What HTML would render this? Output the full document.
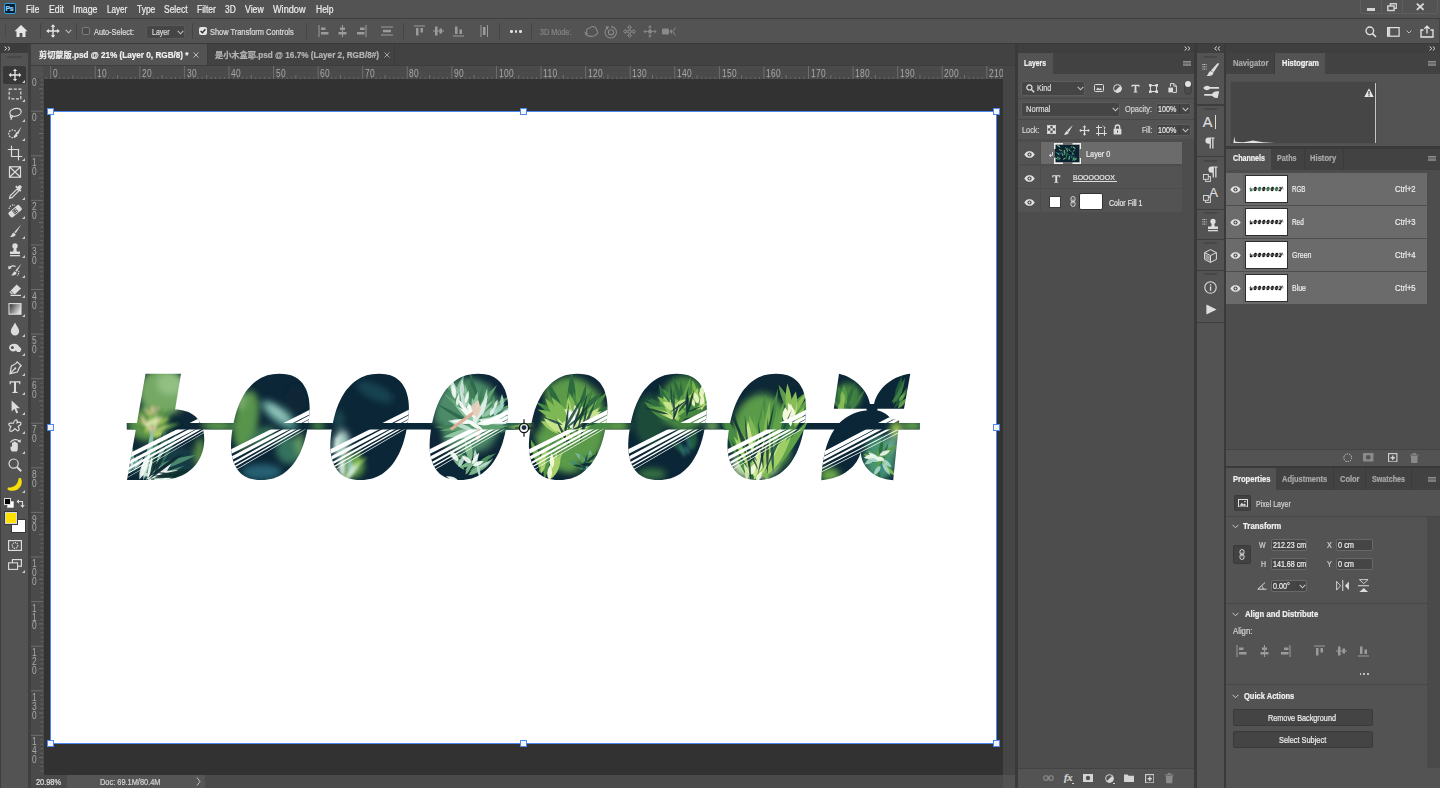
<!DOCTYPE html>
<html lang="en"><head><meta charset="utf-8"><title>Photoshop</title>
<style>
html,body{margin:0;padding:0;}
body{width:1440px;height:788px;overflow:hidden;background:#535353;position:relative;
font-family:"Liberation Sans","Noto Sans CJK SC",sans-serif;-webkit-font-smoothing:antialiased;}
#app{position:absolute;left:0;top:0;width:1440px;height:788px;overflow:hidden;}
#app div,#app svg{position:absolute;}
.t{white-space:nowrap;transform-origin:0 50%;-webkit-text-stroke:0.22px currentColor;}
</style></head>
<body><div id="app">
<div style="left:0px;top:0px;width:1440px;height:18px;background:#535353;"></div>
<div style="left:4px;top:3px;width:12px;height:11px;background:#0a1f2d;border:1px solid #2fa3e6;border-radius:2px;box-sizing:border-box;"></div>
<div class="t" style="left:5.5px;top:4.10px;height:9px;line-height:9px;font-size:7px;color:#8fd0ff;font-weight:700;letter-spacing:-0.3px;">Ps</div>
<div class="t" style="transform:scaleX(0.8248);left:26.2px;top:2.60px;height:14px;line-height:14px;font-size:10px;color:#ececec;">File</div>
<div class="t" style="transform:scaleX(0.8704);left:48.7px;top:2.60px;height:14px;line-height:14px;font-size:10px;color:#ececec;">Edit</div>
<div class="t" style="transform:scaleX(0.8814);left:72.5px;top:2.60px;height:14px;line-height:14px;font-size:10px;color:#ececec;">Image</div>
<div class="t" style="transform:scaleX(0.8115);left:106.7px;top:2.60px;height:14px;line-height:14px;font-size:10px;color:#ececec;">Layer</div>
<div class="t" style="transform:scaleX(0.8438);left:136.7px;top:2.60px;height:14px;line-height:14px;font-size:10px;color:#ececec;">Type</div>
<div class="t" style="transform:scaleX(0.8454);left:164px;top:2.60px;height:14px;line-height:14px;font-size:10px;color:#ececec;">Select</div>
<div class="t" style="transform:scaleX(0.8455);left:196.7px;top:2.60px;height:14px;line-height:14px;font-size:10px;color:#ececec;">Filter</div>
<div class="t" style="transform:scaleX(0.8361);left:225px;top:2.60px;height:14px;line-height:14px;font-size:10px;color:#ececec;">3D</div>
<div class="t" style="transform:scaleX(0.8698);left:245px;top:2.60px;height:14px;line-height:14px;font-size:10px;color:#ececec;">View</div>
<div class="t" style="transform:scaleX(0.9135);left:273px;top:2.60px;height:14px;line-height:14px;font-size:10px;color:#ececec;">Window</div>
<div class="t" style="transform:scaleX(0.8504);left:315.5px;top:2.60px;height:14px;line-height:14px;font-size:10px;color:#ececec;">Help</div>
<div style="left:1359.9px;top:0px;width:78.4px;height:14px;border:1px solid #5f5f5f;border-top:none;border-radius:0 0 3px 3px;box-sizing:border-box;"></div>
<div style="left:1381px;top:0px;width:1px;height:13px;background:#5f5f5f;"></div>
<div style="left:1402px;top:0px;width:1px;height:13px;background:#5f5f5f;"></div>
<div style="left:1367px;top:8.2px;width:8.2px;height:2.5px;background:#d4d4d4;"></div>
<svg style="left:1386.8px;top:3.2px;" width="10.4" height="8.4" viewBox="0 0 10.4 8.4"><path d="M3.4 2.8V0.8H9.6V5.2H7.4M0.8 2.9H7.1V7.6H0.8Z" fill="none" stroke="#d0d0d0" stroke-width="1.5"/></svg>
<svg style="left:1415.5px;top:3.2px;" width="8.4" height="7.4" viewBox="0 0 8.4 7.4"><path d="M0.8 0.6L7.6 6.8M7.6 0.6L0.8 6.8" stroke="#dcdcdc" stroke-width="1.7"/></svg>
<div style="left:0px;top:18px;width:1440px;height:1px;background:#3f3f3f;"></div>
<div style="left:0px;top:19px;width:1440px;height:24px;background:#535353;"></div>
<div style="left:0px;top:43px;width:1440px;height:1px;background:#3a3a3a;"></div>
<div style="left:1438.7px;top:19px;width:1.3px;height:24px;background:#444444;"></div>
<div style="left:5px;top:24px;width:1px;height:14px;background:#484848;"></div>
<svg style="left:14px;top:24px;" width="14" height="14" viewBox="0 0 14 14"><path d="M7 1L0.5 7.2H2.5V13H5.6V9H8.4V13H11.5V7.2H13.5Z" fill="#e6e6e6"/></svg>
<div style="left:40px;top:23px;width:1px;height:16px;background:#454545;"></div>
<svg style="left:46px;top:24px;" width="14" height="14" viewBox="0 0 14 14"><path d="M7 0.2L9.3 2.8H7.7V6.3H11.2V4.7L13.8 7L11.2 9.3V7.7H7.7V11.2H9.3L7 13.8L4.7 11.2H6.3V7.7H2.8V9.3L0.2 7L2.8 4.7V6.3H6.3V2.8H4.7Z" fill="#e6e6e6"/></svg>
<svg style="left:64.5px;top:28.5px;" width="7" height="5" viewBox="0 0 7 5"><path d="M0.7 0.8L3.5 3.8L6.3 0.8" fill="none" stroke="#bdbdbd" stroke-width="1.1"/></svg>
<div style="left:76px;top:23px;width:1px;height:16px;background:#454545;"></div>
<div style="left:82px;top:27px;width:8px;height:8px;background:#4a4a4a;border:1px solid #7a7a7a;border-radius:2px;box-sizing:border-box;"></div>
<div class="t" style="transform:scaleX(0.8637);left:93.6px;top:25.80px;height:12px;line-height:12px;font-size:8.5px;color:#dcdcdc;">Auto-Select:</div>
<div style="left:146px;top:25px;width:39px;height:14px;background:#454545;border:1px solid #5a5a5a;border-radius:2px;box-sizing:border-box;"></div>
<div class="t" style="transform:scaleX(0.8229);left:151.5px;top:26.40px;height:12px;line-height:12px;font-size:8.5px;color:#dcdcdc;">Layer</div>
<svg style="left:176.5px;top:30px;" width="7" height="5" viewBox="0 0 7 5"><path d="M0.7 0.8L3.5 3.8L6.3 0.8" fill="none" stroke="#bdbdbd" stroke-width="1.1"/></svg>
<div style="left:192px;top:23px;width:1px;height:16px;background:#454545;"></div>
<div style="left:199px;top:27px;width:8px;height:8px;background:#e4e4e4;border-radius:2px;"></div>
<svg style="left:199px;top:27px;" width="8" height="8" viewBox="0 0 8 8"><path d="M1.6 4L3.4 5.8L6.4 2.2" fill="none" stroke="#333" stroke-width="1.4"/></svg>
<div class="t" style="transform:scaleX(0.8727);left:210px;top:25.80px;height:12px;line-height:12px;font-size:8.5px;color:#dcdcdc;">Show Transform Controls</div>
<div style="left:306px;top:23px;width:1px;height:16px;background:#454545;"></div>
<svg style="left:317.5px;top:25px;" width="12" height="12" viewBox="0 0 12 12"><rect x="0.5" y="0" width="1" height="12" fill="#9b9b9b"/><rect x="3" y="2.5" width="4.5" height="2.5" fill="#9b9b9b"/><rect x="3" y="7" width="7.5" height="2.5" fill="#9b9b9b"/></svg>
<svg style="left:337px;top:25px;" width="12" height="12" viewBox="0 0 12 12"><rect x="5" y="0" width="1" height="12" fill="#9b9b9b"/><rect x="3" y="2.5" width="5" height="2.5" fill="#9b9b9b"/><rect x="1.5" y="7" width="8" height="2.5" fill="#9b9b9b"/></svg>
<svg style="left:356px;top:25px;" width="12" height="12" viewBox="0 0 12 12"><rect x="9.5" y="0" width="1" height="12" fill="#9b9b9b"/><rect x="4" y="2.5" width="4.5" height="2.5" fill="#9b9b9b"/><rect x="1" y="7" width="7.5" height="2.5" fill="#9b9b9b"/></svg>
<svg style="left:380.5px;top:25px;" width="12" height="12" viewBox="0 0 12 12"><rect x="0" y="1.5" width="12" height="1" fill="#9b9b9b"/><rect x="2" y="4.8" width="8" height="2.5" fill="#9b9b9b"/><rect x="0" y="9.5" width="12" height="1" fill="#9b9b9b"/></svg>
<div style="left:403px;top:23px;width:1px;height:16px;background:#454545;"></div>
<svg style="left:413.5px;top:25px;" width="12" height="12" viewBox="0 0 12 12"><rect x="0" y="0.5" width="11" height="1" fill="#9b9b9b"/><rect x="2" y="3" width="2.5" height="7.5" fill="#9b9b9b"/><rect x="6.5" y="3" width="2.5" height="4.5" fill="#9b9b9b"/></svg>
<svg style="left:433px;top:25px;" width="12" height="12" viewBox="0 0 12 12"><rect x="0" y="5.5" width="11" height="1" fill="#9b9b9b"/><rect x="2" y="1.5" width="2.5" height="9" fill="#9b9b9b"/><rect x="6.5" y="3.5" width="2.5" height="5" fill="#9b9b9b"/></svg>
<svg style="left:452.5px;top:25px;" width="12" height="12" viewBox="0 0 12 12"><rect x="0" y="10.5" width="11" height="1" fill="#9b9b9b"/><rect x="2" y="1.5" width="2.5" height="7.5" fill="#9b9b9b"/><rect x="6.5" y="4.5" width="2.5" height="4.5" fill="#9b9b9b"/></svg>
<svg style="left:479.5px;top:25px;" width="9" height="12" viewBox="0 0 9 12"><rect x="0.5" y="0" width="1" height="12" fill="#9b9b9b"/><rect x="3" y="2" width="2.5" height="8" fill="#9b9b9b"/><rect x="7" y="0" width="1" height="12" fill="#9b9b9b"/></svg>
<div style="left:499px;top:23px;width:1px;height:16px;background:#454545;"></div>
<div style="left:510.3px;top:30px;width:2.6px;height:2.6px;background:#e2e2e2;border-radius:50%;"></div>
<div style="left:514.7px;top:30px;width:2.6px;height:2.6px;background:#e2e2e2;border-radius:50%;"></div>
<div style="left:519.1px;top:30px;width:2.6px;height:2.6px;background:#e2e2e2;border-radius:50%;"></div>
<div style="left:531px;top:23px;width:1px;height:16px;background:#454545;"></div>
<div class="t" style="transform:scaleX(0.8519);left:539.6px;top:25.80px;height:12px;line-height:12px;font-size:8.5px;color:#858585;">3D Mode:</div>
<svg style="left:583.5px;top:24.5px;" width="15" height="13" viewBox="0 0 15 13"><path d="M3 7.5A3 3 0 0 1 6 3A3.6 3.6 0 0 1 12.5 5A2.6 2.6 0 0 1 11.5 9.8" fill="none" stroke="#8a8a8a" stroke-width="1.1"/><path d="M1.5 8.2C3 12 10 12.5 13 9" fill="none" stroke="#8a8a8a" stroke-width="1.1"/><path d="M0.5 6.5L1.3 9.8L4.3 8.6Z" fill="#8a8a8a"/></svg>
<svg style="left:603.5px;top:24.5px;" width="14" height="14" viewBox="0 0 14 14"><circle cx="7" cy="7.3" r="2.6" fill="none" stroke="#8a8a8a" stroke-width="1.1"/><path d="M3.2 2.8A5.7 5.7 0 1 0 7 1.6" fill="none" stroke="#8a8a8a" stroke-width="1.1"/><path d="M1.5 1.2L5.2 1.6L3.4 4.8Z" fill="#8a8a8a"/></svg>
<svg style="left:623px;top:24.5px;" width="13" height="13" viewBox="0 0 13 13"><path d="M6.5 0.3L8.5 2.6H7.1V5.9H10.4V4.5L12.7 6.5L10.4 8.5V7.1H7.1V10.4H8.5L6.5 12.7L4.5 10.4H5.9V7.1H2.6V8.5L0.3 6.5L2.6 4.5V5.9H5.9V2.6H4.5Z" fill="none" stroke="#8a8a8a" stroke-width="0.9"/></svg>
<svg style="left:642.5px;top:24.5px;" width="14" height="13" viewBox="0 0 14 13"><path d="M7 0.3L9 2.6H5Z M7 12.7L9 10.4H5Z M0.3 6.5L2.6 4.5V8.5Z M13.7 6.5L11.4 4.5V8.5Z" fill="#8a8a8a"/><rect x="5.3" y="4.8" width="3.4" height="3.4" fill="#8a8a8a"/><path d="M7 2.6V10.4M2.6 6.5H11.4" stroke="#8a8a8a" stroke-width="0.9"/></svg>
<svg style="left:661.5px;top:26.5px;" width="15" height="9" viewBox="0 0 15 9"><rect x="0" y="1.5" width="7" height="6" rx="1" fill="#8a8a8a"/><path d="M7.5 4.5L10 2V7Z" fill="#8a8a8a"/><path d="M13.5 0.5L10.8 4.5L13.5 8.5" fill="none" stroke="#8a8a8a" stroke-width="1"/></svg>
<svg style="left:1364.5px;top:26px;" width="12" height="12" viewBox="0 0 12 12"><circle cx="4.8" cy="4.8" r="3.8" fill="none" stroke="#e2e2e2" stroke-width="1.3"/><path d="M7.6 7.6L11 11" stroke="#e2e2e2" stroke-width="1.5"/></svg>
<svg style="left:1387px;top:27px;" width="13" height="10" viewBox="0 0 13 10"><rect x="0.6" y="0.6" width="11.5" height="8.6" fill="none" stroke="#e2e2e2" stroke-width="1.2"/><rect x="1" y="1" width="2.2" height="8" fill="#d0d0d0"/></svg>
<svg style="left:1406px;top:29.5px;" width="6" height="4" viewBox="0 0 6 4"><path d="M0.5 0.5L3 3L5.5 0.5" fill="none" stroke="#bdbdbd" stroke-width="1"/></svg>
<svg style="left:1420px;top:24.5px;" width="14" height="13" viewBox="0 0 14 13"><path d="M3.5 5H1V12H13V5H10.5" fill="none" stroke="#e6e6e6" stroke-width="1.3"/><path d="M7 8.5V1.5M4.4 3.8L7 1.2L9.6 3.8" fill="none" stroke="#e6e6e6" stroke-width="1.3"/></svg>
<div style="left:31px;top:44px;width:987px;height:21px;background:#424242;"></div>
<div style="left:31px;top:44px;width:176px;height:21px;background:#535353;"></div>
<div class="t" style="transform:scaleX(0.9604);left:38.5px;top:48.50px;height:12px;line-height:12px;font-size:8.5px;color:#f0f0f0;font-weight:700;">剪切蒙版.psd @ 21% (Layer 0, RGB/8) *</div>
<svg style="left:193px;top:51.5px;" width="6" height="6" viewBox="0 0 6 6"><path d="M0.5 0.5L5.5 5.5M5.5 0.5L0.5 5.5" stroke="#c8c8c8" stroke-width="0.9"/></svg>
<div style="left:207px;top:44px;width:1px;height:21px;background:#3c3c3c;"></div>
<div class="t" style="transform:scaleX(0.9629);left:215px;top:48.50px;height:12px;line-height:12px;font-size:8.5px;color:#b4b4b4;font-weight:700;">是小木盒耶.psd @ 16.7% (Layer 2, RGB/8#)</div>
<svg style="left:384px;top:51.5px;" width="6" height="6" viewBox="0 0 6 6"><path d="M0.5 0.5L5.5 5.5M5.5 0.5L0.5 5.5" stroke="#b0b0b0" stroke-width="0.9"/></svg>
<div style="left:394px;top:44px;width:1px;height:21px;background:#3c3c3c;"></div>
<div style="left:31px;top:65px;width:987px;height:1px;background:#3d3d3d;"></div>
<div style="left:31px;top:66px;width:972px;height:13px;background:#4a4a4a;"></div>
<div style="left:31px;top:79px;width:12.5px;height:696px;background:#4a4a4a;"></div>
<div style="left:31px;top:66px;width:12px;height:12px;background:#505050;"></div>
<div style="left:43.5px;top:79px;width:959.5px;height:696px;background:#323232;"></div>
<svg style="left:0px;top:0px;" width="1440" height="788" viewBox="0 0 1440 788"><rect x="45.69" y="77" width="1" height="2" fill="#666"/><rect x="50.15" y="66" width="1" height="13" fill="#6e6e6e"/><rect x="54.61" y="77" width="1" height="2" fill="#666"/><rect x="59.07" y="77" width="1" height="2" fill="#666"/><rect x="63.52" y="77" width="1" height="2" fill="#666"/><rect x="67.98" y="77" width="1" height="2" fill="#666"/><rect x="72.44" y="75" width="1" height="4" fill="#6e6e6e"/><rect x="76.90" y="77" width="1" height="2" fill="#666"/><rect x="81.36" y="77" width="1" height="2" fill="#666"/><rect x="85.81" y="77" width="1" height="2" fill="#666"/><rect x="90.27" y="77" width="1" height="2" fill="#666"/><rect x="94.73" y="66" width="1" height="13" fill="#6e6e6e"/><rect x="99.19" y="77" width="1" height="2" fill="#666"/><rect x="103.65" y="77" width="1" height="2" fill="#666"/><rect x="108.10" y="77" width="1" height="2" fill="#666"/><rect x="112.56" y="77" width="1" height="2" fill="#666"/><rect x="117.02" y="75" width="1" height="4" fill="#6e6e6e"/><rect x="121.48" y="77" width="1" height="2" fill="#666"/><rect x="125.94" y="77" width="1" height="2" fill="#666"/><rect x="130.39" y="77" width="1" height="2" fill="#666"/><rect x="134.85" y="77" width="1" height="2" fill="#666"/><rect x="139.31" y="66" width="1" height="13" fill="#6e6e6e"/><rect x="143.77" y="77" width="1" height="2" fill="#666"/><rect x="148.23" y="77" width="1" height="2" fill="#666"/><rect x="152.68" y="77" width="1" height="2" fill="#666"/><rect x="157.14" y="77" width="1" height="2" fill="#666"/><rect x="161.60" y="75" width="1" height="4" fill="#6e6e6e"/><rect x="166.06" y="77" width="1" height="2" fill="#666"/><rect x="170.52" y="77" width="1" height="2" fill="#666"/><rect x="174.97" y="77" width="1" height="2" fill="#666"/><rect x="179.43" y="77" width="1" height="2" fill="#666"/><rect x="183.89" y="66" width="1" height="13" fill="#6e6e6e"/><rect x="188.35" y="77" width="1" height="2" fill="#666"/><rect x="192.81" y="77" width="1" height="2" fill="#666"/><rect x="197.26" y="77" width="1" height="2" fill="#666"/><rect x="201.72" y="77" width="1" height="2" fill="#666"/><rect x="206.18" y="75" width="1" height="4" fill="#6e6e6e"/><rect x="210.64" y="77" width="1" height="2" fill="#666"/><rect x="215.10" y="77" width="1" height="2" fill="#666"/><rect x="219.55" y="77" width="1" height="2" fill="#666"/><rect x="224.01" y="77" width="1" height="2" fill="#666"/><rect x="228.47" y="66" width="1" height="13" fill="#6e6e6e"/><rect x="232.93" y="77" width="1" height="2" fill="#666"/><rect x="237.39" y="77" width="1" height="2" fill="#666"/><rect x="241.84" y="77" width="1" height="2" fill="#666"/><rect x="246.30" y="77" width="1" height="2" fill="#666"/><rect x="250.76" y="75" width="1" height="4" fill="#6e6e6e"/><rect x="255.22" y="77" width="1" height="2" fill="#666"/><rect x="259.68" y="77" width="1" height="2" fill="#666"/><rect x="264.13" y="77" width="1" height="2" fill="#666"/><rect x="268.59" y="77" width="1" height="2" fill="#666"/><rect x="273.05" y="66" width="1" height="13" fill="#6e6e6e"/><rect x="277.51" y="77" width="1" height="2" fill="#666"/><rect x="281.97" y="77" width="1" height="2" fill="#666"/><rect x="286.42" y="77" width="1" height="2" fill="#666"/><rect x="290.88" y="77" width="1" height="2" fill="#666"/><rect x="295.34" y="75" width="1" height="4" fill="#6e6e6e"/><rect x="299.80" y="77" width="1" height="2" fill="#666"/><rect x="304.26" y="77" width="1" height="2" fill="#666"/><rect x="308.71" y="77" width="1" height="2" fill="#666"/><rect x="313.17" y="77" width="1" height="2" fill="#666"/><rect x="317.63" y="66" width="1" height="13" fill="#6e6e6e"/><rect x="322.09" y="77" width="1" height="2" fill="#666"/><rect x="326.55" y="77" width="1" height="2" fill="#666"/><rect x="331.00" y="77" width="1" height="2" fill="#666"/><rect x="335.46" y="77" width="1" height="2" fill="#666"/><rect x="339.92" y="75" width="1" height="4" fill="#6e6e6e"/><rect x="344.38" y="77" width="1" height="2" fill="#666"/><rect x="348.84" y="77" width="1" height="2" fill="#666"/><rect x="353.29" y="77" width="1" height="2" fill="#666"/><rect x="357.75" y="77" width="1" height="2" fill="#666"/><rect x="362.21" y="66" width="1" height="13" fill="#6e6e6e"/><rect x="366.67" y="77" width="1" height="2" fill="#666"/><rect x="371.13" y="77" width="1" height="2" fill="#666"/><rect x="375.58" y="77" width="1" height="2" fill="#666"/><rect x="380.04" y="77" width="1" height="2" fill="#666"/><rect x="384.50" y="75" width="1" height="4" fill="#6e6e6e"/><rect x="388.96" y="77" width="1" height="2" fill="#666"/><rect x="393.42" y="77" width="1" height="2" fill="#666"/><rect x="397.87" y="77" width="1" height="2" fill="#666"/><rect x="402.33" y="77" width="1" height="2" fill="#666"/><rect x="406.79" y="66" width="1" height="13" fill="#6e6e6e"/><rect x="411.25" y="77" width="1" height="2" fill="#666"/><rect x="415.71" y="77" width="1" height="2" fill="#666"/><rect x="420.16" y="77" width="1" height="2" fill="#666"/><rect x="424.62" y="77" width="1" height="2" fill="#666"/><rect x="429.08" y="75" width="1" height="4" fill="#6e6e6e"/><rect x="433.54" y="77" width="1" height="2" fill="#666"/><rect x="438.00" y="77" width="1" height="2" fill="#666"/><rect x="442.45" y="77" width="1" height="2" fill="#666"/><rect x="446.91" y="77" width="1" height="2" fill="#666"/><rect x="451.37" y="66" width="1" height="13" fill="#6e6e6e"/><rect x="455.83" y="77" width="1" height="2" fill="#666"/><rect x="460.29" y="77" width="1" height="2" fill="#666"/><rect x="464.74" y="77" width="1" height="2" fill="#666"/><rect x="469.20" y="77" width="1" height="2" fill="#666"/><rect x="473.66" y="75" width="1" height="4" fill="#6e6e6e"/><rect x="478.12" y="77" width="1" height="2" fill="#666"/><rect x="482.58" y="77" width="1" height="2" fill="#666"/><rect x="487.03" y="77" width="1" height="2" fill="#666"/><rect x="491.49" y="77" width="1" height="2" fill="#666"/><rect x="495.95" y="66" width="1" height="13" fill="#6e6e6e"/><rect x="500.41" y="77" width="1" height="2" fill="#666"/><rect x="504.87" y="77" width="1" height="2" fill="#666"/><rect x="509.32" y="77" width="1" height="2" fill="#666"/><rect x="513.78" y="77" width="1" height="2" fill="#666"/><rect x="518.24" y="75" width="1" height="4" fill="#6e6e6e"/><rect x="522.70" y="77" width="1" height="2" fill="#666"/><rect x="527.16" y="77" width="1" height="2" fill="#666"/><rect x="531.61" y="77" width="1" height="2" fill="#666"/><rect x="536.07" y="77" width="1" height="2" fill="#666"/><rect x="540.53" y="66" width="1" height="13" fill="#6e6e6e"/><rect x="544.99" y="77" width="1" height="2" fill="#666"/><rect x="549.45" y="77" width="1" height="2" fill="#666"/><rect x="553.90" y="77" width="1" height="2" fill="#666"/><rect x="558.36" y="77" width="1" height="2" fill="#666"/><rect x="562.82" y="75" width="1" height="4" fill="#6e6e6e"/><rect x="567.28" y="77" width="1" height="2" fill="#666"/><rect x="571.74" y="77" width="1" height="2" fill="#666"/><rect x="576.19" y="77" width="1" height="2" fill="#666"/><rect x="580.65" y="77" width="1" height="2" fill="#666"/><rect x="585.11" y="66" width="1" height="13" fill="#6e6e6e"/><rect x="589.57" y="77" width="1" height="2" fill="#666"/><rect x="594.03" y="77" width="1" height="2" fill="#666"/><rect x="598.48" y="77" width="1" height="2" fill="#666"/><rect x="602.94" y="77" width="1" height="2" fill="#666"/><rect x="607.40" y="75" width="1" height="4" fill="#6e6e6e"/><rect x="611.86" y="77" width="1" height="2" fill="#666"/><rect x="616.32" y="77" width="1" height="2" fill="#666"/><rect x="620.77" y="77" width="1" height="2" fill="#666"/><rect x="625.23" y="77" width="1" height="2" fill="#666"/><rect x="629.69" y="66" width="1" height="13" fill="#6e6e6e"/><rect x="634.15" y="77" width="1" height="2" fill="#666"/><rect x="638.61" y="77" width="1" height="2" fill="#666"/><rect x="643.06" y="77" width="1" height="2" fill="#666"/><rect x="647.52" y="77" width="1" height="2" fill="#666"/><rect x="651.98" y="75" width="1" height="4" fill="#6e6e6e"/><rect x="656.44" y="77" width="1" height="2" fill="#666"/><rect x="660.90" y="77" width="1" height="2" fill="#666"/><rect x="665.35" y="77" width="1" height="2" fill="#666"/><rect x="669.81" y="77" width="1" height="2" fill="#666"/><rect x="674.27" y="66" width="1" height="13" fill="#6e6e6e"/><rect x="678.73" y="77" width="1" height="2" fill="#666"/><rect x="683.19" y="77" width="1" height="2" fill="#666"/><rect x="687.64" y="77" width="1" height="2" fill="#666"/><rect x="692.10" y="77" width="1" height="2" fill="#666"/><rect x="696.56" y="75" width="1" height="4" fill="#6e6e6e"/><rect x="701.02" y="77" width="1" height="2" fill="#666"/><rect x="705.48" y="77" width="1" height="2" fill="#666"/><rect x="709.93" y="77" width="1" height="2" fill="#666"/><rect x="714.39" y="77" width="1" height="2" fill="#666"/><rect x="718.85" y="66" width="1" height="13" fill="#6e6e6e"/><rect x="723.31" y="77" width="1" height="2" fill="#666"/><rect x="727.77" y="77" width="1" height="2" fill="#666"/><rect x="732.22" y="77" width="1" height="2" fill="#666"/><rect x="736.68" y="77" width="1" height="2" fill="#666"/><rect x="741.14" y="75" width="1" height="4" fill="#6e6e6e"/><rect x="745.60" y="77" width="1" height="2" fill="#666"/><rect x="750.06" y="77" width="1" height="2" fill="#666"/><rect x="754.51" y="77" width="1" height="2" fill="#666"/><rect x="758.97" y="77" width="1" height="2" fill="#666"/><rect x="763.43" y="66" width="1" height="13" fill="#6e6e6e"/><rect x="767.89" y="77" width="1" height="2" fill="#666"/><rect x="772.35" y="77" width="1" height="2" fill="#666"/><rect x="776.80" y="77" width="1" height="2" fill="#666"/><rect x="781.26" y="77" width="1" height="2" fill="#666"/><rect x="785.72" y="75" width="1" height="4" fill="#6e6e6e"/><rect x="790.18" y="77" width="1" height="2" fill="#666"/><rect x="794.64" y="77" width="1" height="2" fill="#666"/><rect x="799.09" y="77" width="1" height="2" fill="#666"/><rect x="803.55" y="77" width="1" height="2" fill="#666"/><rect x="808.01" y="66" width="1" height="13" fill="#6e6e6e"/><rect x="812.47" y="77" width="1" height="2" fill="#666"/><rect x="816.93" y="77" width="1" height="2" fill="#666"/><rect x="821.38" y="77" width="1" height="2" fill="#666"/><rect x="825.84" y="77" width="1" height="2" fill="#666"/><rect x="830.30" y="75" width="1" height="4" fill="#6e6e6e"/><rect x="834.76" y="77" width="1" height="2" fill="#666"/><rect x="839.22" y="77" width="1" height="2" fill="#666"/><rect x="843.67" y="77" width="1" height="2" fill="#666"/><rect x="848.13" y="77" width="1" height="2" fill="#666"/><rect x="852.59" y="66" width="1" height="13" fill="#6e6e6e"/><rect x="857.05" y="77" width="1" height="2" fill="#666"/><rect x="861.51" y="77" width="1" height="2" fill="#666"/><rect x="865.96" y="77" width="1" height="2" fill="#666"/><rect x="870.42" y="77" width="1" height="2" fill="#666"/><rect x="874.88" y="75" width="1" height="4" fill="#6e6e6e"/><rect x="879.34" y="77" width="1" height="2" fill="#666"/><rect x="883.80" y="77" width="1" height="2" fill="#666"/><rect x="888.25" y="77" width="1" height="2" fill="#666"/><rect x="892.71" y="77" width="1" height="2" fill="#666"/><rect x="897.17" y="66" width="1" height="13" fill="#6e6e6e"/><rect x="901.63" y="77" width="1" height="2" fill="#666"/><rect x="906.09" y="77" width="1" height="2" fill="#666"/><rect x="910.54" y="77" width="1" height="2" fill="#666"/><rect x="915.00" y="77" width="1" height="2" fill="#666"/><rect x="919.46" y="75" width="1" height="4" fill="#6e6e6e"/><rect x="923.92" y="77" width="1" height="2" fill="#666"/><rect x="928.38" y="77" width="1" height="2" fill="#666"/><rect x="932.83" y="77" width="1" height="2" fill="#666"/><rect x="937.29" y="77" width="1" height="2" fill="#666"/><rect x="941.75" y="66" width="1" height="13" fill="#6e6e6e"/><rect x="946.21" y="77" width="1" height="2" fill="#666"/><rect x="950.67" y="77" width="1" height="2" fill="#666"/><rect x="955.12" y="77" width="1" height="2" fill="#666"/><rect x="959.58" y="77" width="1" height="2" fill="#666"/><rect x="964.04" y="75" width="1" height="4" fill="#6e6e6e"/><rect x="968.50" y="77" width="1" height="2" fill="#666"/><rect x="972.96" y="77" width="1" height="2" fill="#666"/><rect x="977.41" y="77" width="1" height="2" fill="#666"/><rect x="981.87" y="77" width="1" height="2" fill="#666"/><rect x="986.33" y="66" width="1" height="13" fill="#6e6e6e"/><rect x="990.79" y="77" width="1" height="2" fill="#666"/><rect x="995.25" y="77" width="1" height="2" fill="#666"/><rect x="999.70" y="77" width="1" height="2" fill="#666"/><rect x="40.5" y="79.49" width="2.5" height="1" fill="#686868"/><rect x="40.5" y="83.95" width="2.5" height="1" fill="#686868"/><rect x="39" y="88.41" width="4" height="1" fill="#6e6e6e"/><rect x="40.5" y="92.87" width="2.5" height="1" fill="#686868"/><rect x="40.5" y="97.33" width="2.5" height="1" fill="#686868"/><rect x="40.5" y="101.78" width="2.5" height="1" fill="#686868"/><rect x="40.5" y="106.24" width="2.5" height="1" fill="#686868"/><rect x="31" y="110.70" width="12" height="1" fill="#6e6e6e"/><rect x="40.5" y="115.16" width="2.5" height="1" fill="#686868"/><rect x="40.5" y="119.62" width="2.5" height="1" fill="#686868"/><rect x="40.5" y="124.07" width="2.5" height="1" fill="#686868"/><rect x="40.5" y="128.53" width="2.5" height="1" fill="#686868"/><rect x="39" y="132.99" width="4" height="1" fill="#6e6e6e"/><rect x="40.5" y="137.45" width="2.5" height="1" fill="#686868"/><rect x="40.5" y="141.91" width="2.5" height="1" fill="#686868"/><rect x="40.5" y="146.36" width="2.5" height="1" fill="#686868"/><rect x="40.5" y="150.82" width="2.5" height="1" fill="#686868"/><rect x="31" y="155.28" width="12" height="1" fill="#6e6e6e"/><rect x="40.5" y="159.74" width="2.5" height="1" fill="#686868"/><rect x="40.5" y="164.20" width="2.5" height="1" fill="#686868"/><rect x="40.5" y="168.65" width="2.5" height="1" fill="#686868"/><rect x="40.5" y="173.11" width="2.5" height="1" fill="#686868"/><rect x="39" y="177.57" width="4" height="1" fill="#6e6e6e"/><rect x="40.5" y="182.03" width="2.5" height="1" fill="#686868"/><rect x="40.5" y="186.49" width="2.5" height="1" fill="#686868"/><rect x="40.5" y="190.94" width="2.5" height="1" fill="#686868"/><rect x="40.5" y="195.40" width="2.5" height="1" fill="#686868"/><rect x="31" y="199.86" width="12" height="1" fill="#6e6e6e"/><rect x="40.5" y="204.32" width="2.5" height="1" fill="#686868"/><rect x="40.5" y="208.78" width="2.5" height="1" fill="#686868"/><rect x="40.5" y="213.23" width="2.5" height="1" fill="#686868"/><rect x="40.5" y="217.69" width="2.5" height="1" fill="#686868"/><rect x="39" y="222.15" width="4" height="1" fill="#6e6e6e"/><rect x="40.5" y="226.61" width="2.5" height="1" fill="#686868"/><rect x="40.5" y="231.07" width="2.5" height="1" fill="#686868"/><rect x="40.5" y="235.52" width="2.5" height="1" fill="#686868"/><rect x="40.5" y="239.98" width="2.5" height="1" fill="#686868"/><rect x="31" y="244.44" width="12" height="1" fill="#6e6e6e"/><rect x="40.5" y="248.90" width="2.5" height="1" fill="#686868"/><rect x="40.5" y="253.36" width="2.5" height="1" fill="#686868"/><rect x="40.5" y="257.81" width="2.5" height="1" fill="#686868"/><rect x="40.5" y="262.27" width="2.5" height="1" fill="#686868"/><rect x="39" y="266.73" width="4" height="1" fill="#6e6e6e"/><rect x="40.5" y="271.19" width="2.5" height="1" fill="#686868"/><rect x="40.5" y="275.65" width="2.5" height="1" fill="#686868"/><rect x="40.5" y="280.10" width="2.5" height="1" fill="#686868"/><rect x="40.5" y="284.56" width="2.5" height="1" fill="#686868"/><rect x="31" y="289.02" width="12" height="1" fill="#6e6e6e"/><rect x="40.5" y="293.48" width="2.5" height="1" fill="#686868"/><rect x="40.5" y="297.94" width="2.5" height="1" fill="#686868"/><rect x="40.5" y="302.39" width="2.5" height="1" fill="#686868"/><rect x="40.5" y="306.85" width="2.5" height="1" fill="#686868"/><rect x="39" y="311.31" width="4" height="1" fill="#6e6e6e"/><rect x="40.5" y="315.77" width="2.5" height="1" fill="#686868"/><rect x="40.5" y="320.23" width="2.5" height="1" fill="#686868"/><rect x="40.5" y="324.68" width="2.5" height="1" fill="#686868"/><rect x="40.5" y="329.14" width="2.5" height="1" fill="#686868"/><rect x="31" y="333.60" width="12" height="1" fill="#6e6e6e"/><rect x="40.5" y="338.06" width="2.5" height="1" fill="#686868"/><rect x="40.5" y="342.52" width="2.5" height="1" fill="#686868"/><rect x="40.5" y="346.97" width="2.5" height="1" fill="#686868"/><rect x="40.5" y="351.43" width="2.5" height="1" fill="#686868"/><rect x="39" y="355.89" width="4" height="1" fill="#6e6e6e"/><rect x="40.5" y="360.35" width="2.5" height="1" fill="#686868"/><rect x="40.5" y="364.81" width="2.5" height="1" fill="#686868"/><rect x="40.5" y="369.26" width="2.5" height="1" fill="#686868"/><rect x="40.5" y="373.72" width="2.5" height="1" fill="#686868"/><rect x="31" y="378.18" width="12" height="1" fill="#6e6e6e"/><rect x="40.5" y="382.64" width="2.5" height="1" fill="#686868"/><rect x="40.5" y="387.10" width="2.5" height="1" fill="#686868"/><rect x="40.5" y="391.55" width="2.5" height="1" fill="#686868"/><rect x="40.5" y="396.01" width="2.5" height="1" fill="#686868"/><rect x="39" y="400.47" width="4" height="1" fill="#6e6e6e"/><rect x="40.5" y="404.93" width="2.5" height="1" fill="#686868"/><rect x="40.5" y="409.39" width="2.5" height="1" fill="#686868"/><rect x="40.5" y="413.84" width="2.5" height="1" fill="#686868"/><rect x="40.5" y="418.30" width="2.5" height="1" fill="#686868"/><rect x="31" y="422.76" width="12" height="1" fill="#6e6e6e"/><rect x="40.5" y="427.22" width="2.5" height="1" fill="#686868"/><rect x="40.5" y="431.68" width="2.5" height="1" fill="#686868"/><rect x="40.5" y="436.13" width="2.5" height="1" fill="#686868"/><rect x="40.5" y="440.59" width="2.5" height="1" fill="#686868"/><rect x="39" y="445.05" width="4" height="1" fill="#6e6e6e"/><rect x="40.5" y="449.51" width="2.5" height="1" fill="#686868"/><rect x="40.5" y="453.97" width="2.5" height="1" fill="#686868"/><rect x="40.5" y="458.42" width="2.5" height="1" fill="#686868"/><rect x="40.5" y="462.88" width="2.5" height="1" fill="#686868"/><rect x="31" y="467.34" width="12" height="1" fill="#6e6e6e"/><rect x="40.5" y="471.80" width="2.5" height="1" fill="#686868"/><rect x="40.5" y="476.26" width="2.5" height="1" fill="#686868"/><rect x="40.5" y="480.71" width="2.5" height="1" fill="#686868"/><rect x="40.5" y="485.17" width="2.5" height="1" fill="#686868"/><rect x="39" y="489.63" width="4" height="1" fill="#6e6e6e"/><rect x="40.5" y="494.09" width="2.5" height="1" fill="#686868"/><rect x="40.5" y="498.55" width="2.5" height="1" fill="#686868"/><rect x="40.5" y="503.00" width="2.5" height="1" fill="#686868"/><rect x="40.5" y="507.46" width="2.5" height="1" fill="#686868"/><rect x="31" y="511.92" width="12" height="1" fill="#6e6e6e"/><rect x="40.5" y="516.38" width="2.5" height="1" fill="#686868"/><rect x="40.5" y="520.84" width="2.5" height="1" fill="#686868"/><rect x="40.5" y="525.29" width="2.5" height="1" fill="#686868"/><rect x="40.5" y="529.75" width="2.5" height="1" fill="#686868"/><rect x="39" y="534.21" width="4" height="1" fill="#6e6e6e"/><rect x="40.5" y="538.67" width="2.5" height="1" fill="#686868"/><rect x="40.5" y="543.13" width="2.5" height="1" fill="#686868"/><rect x="40.5" y="547.58" width="2.5" height="1" fill="#686868"/><rect x="40.5" y="552.04" width="2.5" height="1" fill="#686868"/><rect x="31" y="556.50" width="12" height="1" fill="#6e6e6e"/><rect x="40.5" y="560.96" width="2.5" height="1" fill="#686868"/><rect x="40.5" y="565.42" width="2.5" height="1" fill="#686868"/><rect x="40.5" y="569.87" width="2.5" height="1" fill="#686868"/><rect x="40.5" y="574.33" width="2.5" height="1" fill="#686868"/><rect x="39" y="578.79" width="4" height="1" fill="#6e6e6e"/><rect x="40.5" y="583.25" width="2.5" height="1" fill="#686868"/><rect x="40.5" y="587.71" width="2.5" height="1" fill="#686868"/><rect x="40.5" y="592.16" width="2.5" height="1" fill="#686868"/><rect x="40.5" y="596.62" width="2.5" height="1" fill="#686868"/><rect x="31" y="601.08" width="12" height="1" fill="#6e6e6e"/><rect x="40.5" y="605.54" width="2.5" height="1" fill="#686868"/><rect x="40.5" y="610.00" width="2.5" height="1" fill="#686868"/><rect x="40.5" y="614.45" width="2.5" height="1" fill="#686868"/><rect x="40.5" y="618.91" width="2.5" height="1" fill="#686868"/><rect x="39" y="623.37" width="4" height="1" fill="#6e6e6e"/><rect x="40.5" y="627.83" width="2.5" height="1" fill="#686868"/><rect x="40.5" y="632.29" width="2.5" height="1" fill="#686868"/><rect x="40.5" y="636.74" width="2.5" height="1" fill="#686868"/><rect x="40.5" y="641.20" width="2.5" height="1" fill="#686868"/><rect x="31" y="645.66" width="12" height="1" fill="#6e6e6e"/><rect x="40.5" y="650.12" width="2.5" height="1" fill="#686868"/><rect x="40.5" y="654.58" width="2.5" height="1" fill="#686868"/><rect x="40.5" y="659.03" width="2.5" height="1" fill="#686868"/><rect x="40.5" y="663.49" width="2.5" height="1" fill="#686868"/><rect x="39" y="667.95" width="4" height="1" fill="#6e6e6e"/><rect x="40.5" y="672.41" width="2.5" height="1" fill="#686868"/><rect x="40.5" y="676.87" width="2.5" height="1" fill="#686868"/><rect x="40.5" y="681.32" width="2.5" height="1" fill="#686868"/><rect x="40.5" y="685.78" width="2.5" height="1" fill="#686868"/><rect x="31" y="690.24" width="12" height="1" fill="#6e6e6e"/><rect x="40.5" y="694.70" width="2.5" height="1" fill="#686868"/><rect x="40.5" y="699.16" width="2.5" height="1" fill="#686868"/><rect x="40.5" y="703.61" width="2.5" height="1" fill="#686868"/><rect x="40.5" y="708.07" width="2.5" height="1" fill="#686868"/><rect x="39" y="712.53" width="4" height="1" fill="#6e6e6e"/><rect x="40.5" y="716.99" width="2.5" height="1" fill="#686868"/><rect x="40.5" y="721.45" width="2.5" height="1" fill="#686868"/><rect x="40.5" y="725.90" width="2.5" height="1" fill="#686868"/><rect x="40.5" y="730.36" width="2.5" height="1" fill="#686868"/><rect x="31" y="734.82" width="12" height="1" fill="#6e6e6e"/><rect x="40.5" y="739.28" width="2.5" height="1" fill="#686868"/><rect x="40.5" y="743.74" width="2.5" height="1" fill="#686868"/><rect x="40.5" y="748.19" width="2.5" height="1" fill="#686868"/><rect x="40.5" y="752.65" width="2.5" height="1" fill="#686868"/><rect x="39" y="757.11" width="4" height="1" fill="#6e6e6e"/><rect x="40.5" y="761.57" width="2.5" height="1" fill="#686868"/><rect x="40.5" y="766.03" width="2.5" height="1" fill="#686868"/><rect x="40.5" y="770.48" width="2.5" height="1" fill="#686868"/></svg>
<div class="t" style="left:52.85px;top:67.90px;height:11px;line-height:11px;font-size:10px;color:#a9a9a9;transform:scaleX(0.84);letter-spacing:0.4px;-webkit-text-stroke:0;">0</div>
<div class="t" style="left:97.42999999999999px;top:67.90px;height:11px;line-height:11px;font-size:10px;color:#a9a9a9;transform:scaleX(0.84);letter-spacing:0.4px;-webkit-text-stroke:0;">10</div>
<div class="t" style="left:142.01px;top:67.90px;height:11px;line-height:11px;font-size:10px;color:#a9a9a9;transform:scaleX(0.84);letter-spacing:0.4px;-webkit-text-stroke:0;">20</div>
<div class="t" style="left:186.59px;top:67.90px;height:11px;line-height:11px;font-size:10px;color:#a9a9a9;transform:scaleX(0.84);letter-spacing:0.4px;-webkit-text-stroke:0;">30</div>
<div class="t" style="left:231.17px;top:67.90px;height:11px;line-height:11px;font-size:10px;color:#a9a9a9;transform:scaleX(0.84);letter-spacing:0.4px;-webkit-text-stroke:0;">40</div>
<div class="t" style="left:275.75px;top:67.90px;height:11px;line-height:11px;font-size:10px;color:#a9a9a9;transform:scaleX(0.84);letter-spacing:0.4px;-webkit-text-stroke:0;">50</div>
<div class="t" style="left:320.33px;top:67.90px;height:11px;line-height:11px;font-size:10px;color:#a9a9a9;transform:scaleX(0.84);letter-spacing:0.4px;-webkit-text-stroke:0;">60</div>
<div class="t" style="left:364.90999999999997px;top:67.90px;height:11px;line-height:11px;font-size:10px;color:#a9a9a9;transform:scaleX(0.84);letter-spacing:0.4px;-webkit-text-stroke:0;">70</div>
<div class="t" style="left:409.48999999999995px;top:67.90px;height:11px;line-height:11px;font-size:10px;color:#a9a9a9;transform:scaleX(0.84);letter-spacing:0.4px;-webkit-text-stroke:0;">80</div>
<div class="t" style="left:454.07px;top:67.90px;height:11px;line-height:11px;font-size:10px;color:#a9a9a9;transform:scaleX(0.84);letter-spacing:0.4px;-webkit-text-stroke:0;">90</div>
<div class="t" style="left:498.65px;top:67.90px;height:11px;line-height:11px;font-size:10px;color:#a9a9a9;transform:scaleX(0.84);letter-spacing:0.4px;-webkit-text-stroke:0;">100</div>
<div class="t" style="left:543.23px;top:67.90px;height:11px;line-height:11px;font-size:10px;color:#a9a9a9;transform:scaleX(0.84);letter-spacing:0.4px;-webkit-text-stroke:0;">110</div>
<div class="t" style="left:587.8100000000001px;top:67.90px;height:11px;line-height:11px;font-size:10px;color:#a9a9a9;transform:scaleX(0.84);letter-spacing:0.4px;-webkit-text-stroke:0;">120</div>
<div class="t" style="left:632.3900000000001px;top:67.90px;height:11px;line-height:11px;font-size:10px;color:#a9a9a9;transform:scaleX(0.84);letter-spacing:0.4px;-webkit-text-stroke:0;">130</div>
<div class="t" style="left:676.97px;top:67.90px;height:11px;line-height:11px;font-size:10px;color:#a9a9a9;transform:scaleX(0.84);letter-spacing:0.4px;-webkit-text-stroke:0;">140</div>
<div class="t" style="left:721.5500000000001px;top:67.90px;height:11px;line-height:11px;font-size:10px;color:#a9a9a9;transform:scaleX(0.84);letter-spacing:0.4px;-webkit-text-stroke:0;">150</div>
<div class="t" style="left:766.13px;top:67.90px;height:11px;line-height:11px;font-size:10px;color:#a9a9a9;transform:scaleX(0.84);letter-spacing:0.4px;-webkit-text-stroke:0;">160</div>
<div class="t" style="left:810.71px;top:67.90px;height:11px;line-height:11px;font-size:10px;color:#a9a9a9;transform:scaleX(0.84);letter-spacing:0.4px;-webkit-text-stroke:0;">170</div>
<div class="t" style="left:855.2900000000001px;top:67.90px;height:11px;line-height:11px;font-size:10px;color:#a9a9a9;transform:scaleX(0.84);letter-spacing:0.4px;-webkit-text-stroke:0;">180</div>
<div class="t" style="left:899.87px;top:67.90px;height:11px;line-height:11px;font-size:10px;color:#a9a9a9;transform:scaleX(0.84);letter-spacing:0.4px;-webkit-text-stroke:0;">190</div>
<div class="t" style="left:944.45px;top:67.90px;height:11px;line-height:11px;font-size:10px;color:#a9a9a9;transform:scaleX(0.84);letter-spacing:0.4px;-webkit-text-stroke:0;">200</div>
<div class="t" style="left:989.0300000000001px;top:67.90px;height:11px;line-height:11px;font-size:10px;color:#a9a9a9;transform:scaleX(0.84);letter-spacing:0.4px;-webkit-text-stroke:0;">210</div>
<div class="t" style="left:32px;top:76.50px;height:11px;line-height:11px;font-size:10px;color:#a9a9a9;transform:scaleX(0.84);-webkit-text-stroke:0;">0</div>
<div class="t" style="left:32px;top:112.30px;height:11px;line-height:11px;font-size:10px;color:#a9a9a9;transform:scaleX(0.84);-webkit-text-stroke:0;">0</div>
<div class="t" style="left:32px;top:156.88px;height:11px;line-height:11px;font-size:10px;color:#a9a9a9;transform:scaleX(0.84);-webkit-text-stroke:0;">1</div>
<div class="t" style="left:32px;top:165.78px;height:11px;line-height:11px;font-size:10px;color:#a9a9a9;transform:scaleX(0.84);-webkit-text-stroke:0;">0</div>
<div class="t" style="left:32px;top:201.46px;height:11px;line-height:11px;font-size:10px;color:#a9a9a9;transform:scaleX(0.84);-webkit-text-stroke:0;">2</div>
<div class="t" style="left:32px;top:210.36px;height:11px;line-height:11px;font-size:10px;color:#a9a9a9;transform:scaleX(0.84);-webkit-text-stroke:0;">0</div>
<div class="t" style="left:32px;top:246.04px;height:11px;line-height:11px;font-size:10px;color:#a9a9a9;transform:scaleX(0.84);-webkit-text-stroke:0;">3</div>
<div class="t" style="left:32px;top:254.94px;height:11px;line-height:11px;font-size:10px;color:#a9a9a9;transform:scaleX(0.84);-webkit-text-stroke:0;">0</div>
<div class="t" style="left:32px;top:290.62px;height:11px;line-height:11px;font-size:10px;color:#a9a9a9;transform:scaleX(0.84);-webkit-text-stroke:0;">4</div>
<div class="t" style="left:32px;top:299.52px;height:11px;line-height:11px;font-size:10px;color:#a9a9a9;transform:scaleX(0.84);-webkit-text-stroke:0;">0</div>
<div class="t" style="left:32px;top:335.20px;height:11px;line-height:11px;font-size:10px;color:#a9a9a9;transform:scaleX(0.84);-webkit-text-stroke:0;">5</div>
<div class="t" style="left:32px;top:344.10px;height:11px;line-height:11px;font-size:10px;color:#a9a9a9;transform:scaleX(0.84);-webkit-text-stroke:0;">0</div>
<div class="t" style="left:32px;top:379.78px;height:11px;line-height:11px;font-size:10px;color:#a9a9a9;transform:scaleX(0.84);-webkit-text-stroke:0;">6</div>
<div class="t" style="left:32px;top:388.68px;height:11px;line-height:11px;font-size:10px;color:#a9a9a9;transform:scaleX(0.84);-webkit-text-stroke:0;">0</div>
<div class="t" style="left:32px;top:424.36px;height:11px;line-height:11px;font-size:10px;color:#a9a9a9;transform:scaleX(0.84);-webkit-text-stroke:0;">7</div>
<div class="t" style="left:32px;top:433.26px;height:11px;line-height:11px;font-size:10px;color:#a9a9a9;transform:scaleX(0.84);-webkit-text-stroke:0;">0</div>
<div class="t" style="left:32px;top:468.94px;height:11px;line-height:11px;font-size:10px;color:#a9a9a9;transform:scaleX(0.84);-webkit-text-stroke:0;">8</div>
<div class="t" style="left:32px;top:477.84px;height:11px;line-height:11px;font-size:10px;color:#a9a9a9;transform:scaleX(0.84);-webkit-text-stroke:0;">0</div>
<div class="t" style="left:32px;top:513.52px;height:11px;line-height:11px;font-size:10px;color:#a9a9a9;transform:scaleX(0.84);-webkit-text-stroke:0;">9</div>
<div class="t" style="left:32px;top:522.42px;height:11px;line-height:11px;font-size:10px;color:#a9a9a9;transform:scaleX(0.84);-webkit-text-stroke:0;">0</div>
<div class="t" style="left:32px;top:558.10px;height:11px;line-height:11px;font-size:10px;color:#a9a9a9;transform:scaleX(0.84);-webkit-text-stroke:0;">1</div>
<div class="t" style="left:32px;top:567.00px;height:11px;line-height:11px;font-size:10px;color:#a9a9a9;transform:scaleX(0.84);-webkit-text-stroke:0;">0</div>
<div class="t" style="left:32px;top:575.90px;height:11px;line-height:11px;font-size:10px;color:#a9a9a9;transform:scaleX(0.84);-webkit-text-stroke:0;">0</div>
<div class="t" style="left:32px;top:602.68px;height:11px;line-height:11px;font-size:10px;color:#a9a9a9;transform:scaleX(0.84);-webkit-text-stroke:0;">1</div>
<div class="t" style="left:32px;top:611.58px;height:11px;line-height:11px;font-size:10px;color:#a9a9a9;transform:scaleX(0.84);-webkit-text-stroke:0;">1</div>
<div class="t" style="left:32px;top:620.48px;height:11px;line-height:11px;font-size:10px;color:#a9a9a9;transform:scaleX(0.84);-webkit-text-stroke:0;">0</div>
<div class="t" style="left:32px;top:647.26px;height:11px;line-height:11px;font-size:10px;color:#a9a9a9;transform:scaleX(0.84);-webkit-text-stroke:0;">1</div>
<div class="t" style="left:32px;top:656.16px;height:11px;line-height:11px;font-size:10px;color:#a9a9a9;transform:scaleX(0.84);-webkit-text-stroke:0;">2</div>
<div class="t" style="left:32px;top:665.06px;height:11px;line-height:11px;font-size:10px;color:#a9a9a9;transform:scaleX(0.84);-webkit-text-stroke:0;">0</div>
<div class="t" style="left:32px;top:691.84px;height:11px;line-height:11px;font-size:10px;color:#a9a9a9;transform:scaleX(0.84);-webkit-text-stroke:0;">1</div>
<div class="t" style="left:32px;top:700.74px;height:11px;line-height:11px;font-size:10px;color:#a9a9a9;transform:scaleX(0.84);-webkit-text-stroke:0;">3</div>
<div class="t" style="left:32px;top:709.64px;height:11px;line-height:11px;font-size:10px;color:#a9a9a9;transform:scaleX(0.84);-webkit-text-stroke:0;">0</div>
<div class="t" style="left:32px;top:736.42px;height:11px;line-height:11px;font-size:10px;color:#a9a9a9;transform:scaleX(0.84);-webkit-text-stroke:0;">1</div>
<div class="t" style="left:32px;top:745.32px;height:11px;line-height:11px;font-size:10px;color:#a9a9a9;transform:scaleX(0.84);-webkit-text-stroke:0;">4</div>
<div class="t" style="left:32px;top:754.22px;height:11px;line-height:11px;font-size:10px;color:#a9a9a9;transform:scaleX(0.84);-webkit-text-stroke:0;">0</div>
<div style="left:1003px;top:66px;width:12px;height:709px;background:#464646;"></div>
<div style="left:1015px;top:44px;width:3px;height:744px;background:#3a3a3a;"></div>
<div style="left:31px;top:775px;width:972px;height:13px;background:#4a4a4a;"></div>
<div style="left:1003px;top:775px;width:12px;height:13px;background:#525252;"></div>
<div style="left:66.7px;top:775px;width:138.5px;height:13px;background:#555555;"></div>
<div class="t" style="transform:scaleX(0.8667);left:35.5px;top:775.50px;height:12px;line-height:12px;font-size:8.5px;color:#e0e0e0;">20.98%</div>
<div class="t" style="transform:scaleX(0.8711);left:99.8px;top:775.50px;height:12px;line-height:12px;font-size:8.5px;color:#d4d4d4;">Doc: 69.1M/80.4M</div>
<svg style="left:196px;top:777px;" width="5" height="9" viewBox="0 0 5 9"><path d="M1 0.5L4 4.5L1 8.5" fill="none" stroke="#c0c0c0" stroke-width="1"/></svg>
<div style="left:50.6px;top:111.2px;width:946.0px;height:632.0999999999999px;background:#ffffff;"></div>
<svg style="left:0px;top:0px;" width="1440" height="788" viewBox="0 0 1440 788"><defs><filter id="bl3" x="-5%" y="-20%" width="110%" height="140%"><feGaussianBlur stdDeviation="3"/></filter><filter id="bl2" x="-5%" y="-20%" width="110%" height="140%"><feGaussianBlur stdDeviation="1.6"/></filter><filter id="bl1" x="-5%" y="-20%" width="110%" height="140%"><feGaussianBlur stdDeviation="0.55"/></filter><clipPath id="go"><path d="M145.5 373.8H181L175.1 409.5C190 409.5 204.6 418 204.3 440C204 462 188 480 160 480H127ZM307.7 426.9L306.8 432.1L305.8 436.3L304.8 440.1L303.7 443.7L302.5 447.1L301.2 450.3L299.8 453.4L298.3 456.3L296.7 459.1L295.0 461.7L293.2 464.2L291.3 466.4L289.3 468.6L287.2 470.5L285.1 472.3L282.9 473.9L280.6 475.3L278.2 476.5L275.7 477.6L273.2 478.5L270.5 479.1L267.7 479.6L264.7 479.9L261.0 480.0L257.4 479.9L254.5 479.6L251.9 479.1L249.5 478.5L247.2 477.6L245.1 476.5L243.2 475.3L241.3 473.9L239.7 472.3L238.1 470.5L236.8 468.6L235.5 466.4L234.4 464.2L233.5 461.7L232.7 459.1L232.0 456.3L231.5 453.4L231.2 450.3L231.0 447.1L231.0 443.7L231.2 440.1L231.5 436.3L232.0 432.1L232.9 426.9L233.8 421.7L234.8 417.5L235.8 413.7L236.9 410.1L238.1 406.7L239.4 403.5L240.8 400.4L242.3 397.5L243.9 394.7L245.6 392.1L247.4 389.6L249.3 387.4L251.3 385.2L253.4 383.3L255.5 381.5L257.7 379.9L260.0 378.5L262.4 377.3L264.9 376.2L267.4 375.3L270.1 374.7L272.9 374.2L275.9 373.9L279.6 373.8L283.2 373.9L286.1 374.2L288.7 374.7L291.1 375.3L293.4 376.2L295.5 377.3L297.4 378.5L299.3 379.9L300.9 381.5L302.5 383.3L303.8 385.2L305.1 387.4L306.2 389.6L307.1 392.1L307.9 394.7L308.6 397.5L309.1 400.4L309.4 403.5L309.6 406.7L309.6 410.1L309.4 413.7L309.1 417.5L308.6 421.7ZM407.0 426.9L406.1 432.1L405.1 436.3L404.1 440.1L403.0 443.7L401.8 447.1L400.5 450.3L399.1 453.4L397.6 456.3L396.0 459.1L394.3 461.7L392.5 464.2L390.6 466.4L388.6 468.6L386.5 470.5L384.4 472.3L382.2 473.9L379.9 475.3L377.5 476.5L375.0 477.6L372.5 478.5L369.8 479.1L367.0 479.6L364.0 479.9L360.3 480.0L356.7 479.9L353.8 479.6L351.2 479.1L348.8 478.5L346.5 477.6L344.4 476.5L342.5 475.3L340.6 473.9L339.0 472.3L337.4 470.5L336.1 468.6L334.8 466.4L333.7 464.2L332.8 461.7L332.0 459.1L331.3 456.3L330.8 453.4L330.5 450.3L330.3 447.1L330.3 443.7L330.5 440.1L330.8 436.3L331.3 432.1L332.2 426.9L333.1 421.7L334.1 417.5L335.1 413.7L336.2 410.1L337.4 406.7L338.7 403.5L340.1 400.4L341.6 397.5L343.2 394.7L344.9 392.1L346.7 389.6L348.6 387.4L350.6 385.2L352.7 383.3L354.8 381.5L357.0 379.9L359.3 378.5L361.7 377.3L364.2 376.2L366.7 375.3L369.4 374.7L372.2 374.2L375.2 373.9L378.9 373.8L382.5 373.9L385.4 374.2L388.0 374.7L390.4 375.3L392.7 376.2L394.8 377.3L396.7 378.5L398.6 379.9L400.2 381.5L401.8 383.3L403.1 385.2L404.4 387.4L405.5 389.6L406.4 392.1L407.2 394.7L407.9 397.5L408.4 400.4L408.7 403.5L408.9 406.7L408.9 410.1L408.7 413.7L408.4 417.5L407.9 421.7ZM506.3 426.9L505.4 432.1L504.4 436.3L503.4 440.1L502.3 443.7L501.1 447.1L499.8 450.3L498.4 453.4L496.9 456.3L495.3 459.1L493.6 461.7L491.8 464.2L489.9 466.4L487.9 468.6L485.8 470.5L483.7 472.3L481.5 473.9L479.2 475.3L476.8 476.5L474.3 477.6L471.8 478.5L469.1 479.1L466.3 479.6L463.3 479.9L459.6 480.0L456.0 479.9L453.1 479.6L450.5 479.1L448.1 478.5L445.8 477.6L443.7 476.5L441.8 475.3L439.9 473.9L438.3 472.3L436.7 470.5L435.4 468.6L434.1 466.4L433.0 464.2L432.1 461.7L431.3 459.1L430.6 456.3L430.1 453.4L429.8 450.3L429.6 447.1L429.6 443.7L429.8 440.1L430.1 436.3L430.6 432.1L431.5 426.9L432.4 421.7L433.4 417.5L434.4 413.7L435.5 410.1L436.7 406.7L438.0 403.5L439.4 400.4L440.9 397.5L442.5 394.7L444.2 392.1L446.0 389.6L447.9 387.4L449.9 385.2L452.0 383.3L454.1 381.5L456.3 379.9L458.6 378.5L461.0 377.3L463.5 376.2L466.0 375.3L468.7 374.7L471.5 374.2L474.5 373.9L478.2 373.8L481.8 373.9L484.7 374.2L487.3 374.7L489.7 375.3L492.0 376.2L494.1 377.3L496.0 378.5L497.9 379.9L499.5 381.5L501.1 383.3L502.4 385.2L503.7 387.4L504.8 389.6L505.7 392.1L506.5 394.7L507.2 397.5L507.7 400.4L508.0 403.5L508.2 406.7L508.2 410.1L508.0 413.7L507.7 417.5L507.2 421.7ZM605.6 426.9L604.7 432.1L603.7 436.3L602.7 440.1L601.6 443.7L600.4 447.1L599.1 450.3L597.7 453.4L596.2 456.3L594.6 459.1L592.9 461.7L591.1 464.2L589.2 466.4L587.2 468.6L585.1 470.5L583.0 472.3L580.8 473.9L578.5 475.3L576.1 476.5L573.6 477.6L571.1 478.5L568.4 479.1L565.6 479.6L562.6 479.9L558.9 480.0L555.3 479.9L552.4 479.6L549.8 479.1L547.4 478.5L545.1 477.6L543.0 476.5L541.1 475.3L539.2 473.9L537.6 472.3L536.0 470.5L534.7 468.6L533.4 466.4L532.3 464.2L531.4 461.7L530.6 459.1L529.9 456.3L529.4 453.4L529.1 450.3L528.9 447.1L528.9 443.7L529.1 440.1L529.4 436.3L529.9 432.1L530.8 426.9L531.7 421.7L532.7 417.5L533.7 413.7L534.8 410.1L536.0 406.7L537.3 403.5L538.7 400.4L540.2 397.5L541.8 394.7L543.5 392.1L545.3 389.6L547.2 387.4L549.2 385.2L551.3 383.3L553.4 381.5L555.6 379.9L557.9 378.5L560.3 377.3L562.8 376.2L565.3 375.3L568.0 374.7L570.8 374.2L573.8 373.9L577.5 373.8L581.1 373.9L584.0 374.2L586.6 374.7L589.0 375.3L591.3 376.2L593.4 377.3L595.3 378.5L597.2 379.9L598.8 381.5L600.4 383.3L601.7 385.2L603.0 387.4L604.1 389.6L605.0 392.1L605.8 394.7L606.5 397.5L607.0 400.4L607.3 403.5L607.5 406.7L607.5 410.1L607.3 413.7L607.0 417.5L606.5 421.7ZM704.9 426.9L704.0 432.1L703.0 436.3L702.0 440.1L700.9 443.7L699.7 447.1L698.4 450.3L697.0 453.4L695.5 456.3L693.9 459.1L692.2 461.7L690.4 464.2L688.5 466.4L686.5 468.6L684.4 470.5L682.3 472.3L680.1 473.9L677.8 475.3L675.4 476.5L672.9 477.6L670.4 478.5L667.7 479.1L664.9 479.6L661.9 479.9L658.2 480.0L654.6 479.9L651.7 479.6L649.1 479.1L646.7 478.5L644.4 477.6L642.3 476.5L640.4 475.3L638.5 473.9L636.9 472.3L635.3 470.5L634.0 468.6L632.7 466.4L631.6 464.2L630.7 461.7L629.9 459.1L629.2 456.3L628.7 453.4L628.4 450.3L628.2 447.1L628.2 443.7L628.4 440.1L628.7 436.3L629.2 432.1L630.1 426.9L631.0 421.7L632.0 417.5L633.0 413.7L634.1 410.1L635.3 406.7L636.6 403.5L638.0 400.4L639.5 397.5L641.1 394.7L642.8 392.1L644.6 389.6L646.5 387.4L648.5 385.2L650.6 383.3L652.7 381.5L654.9 379.9L657.2 378.5L659.6 377.3L662.1 376.2L664.6 375.3L667.3 374.7L670.1 374.2L673.1 373.9L676.8 373.8L680.4 373.9L683.3 374.2L685.9 374.7L688.3 375.3L690.6 376.2L692.7 377.3L694.6 378.5L696.5 379.9L698.1 381.5L699.7 383.3L701.0 385.2L702.3 387.4L703.4 389.6L704.3 392.1L705.1 394.7L705.8 397.5L706.3 400.4L706.6 403.5L706.8 406.7L706.8 410.1L706.6 413.7L706.3 417.5L705.8 421.7ZM804.2 426.9L803.3 432.1L802.3 436.3L801.3 440.1L800.2 443.7L799.0 447.1L797.7 450.3L796.3 453.4L794.8 456.3L793.2 459.1L791.5 461.7L789.7 464.2L787.8 466.4L785.8 468.6L783.7 470.5L781.6 472.3L779.4 473.9L777.1 475.3L774.7 476.5L772.2 477.6L769.7 478.5L767.0 479.1L764.2 479.6L761.2 479.9L757.5 480.0L753.9 479.9L751.0 479.6L748.4 479.1L746.0 478.5L743.7 477.6L741.6 476.5L739.7 475.3L737.8 473.9L736.2 472.3L734.6 470.5L733.3 468.6L732.0 466.4L730.9 464.2L730.0 461.7L729.2 459.1L728.5 456.3L728.0 453.4L727.7 450.3L727.5 447.1L727.5 443.7L727.7 440.1L728.0 436.3L728.5 432.1L729.4 426.9L730.3 421.7L731.3 417.5L732.3 413.7L733.4 410.1L734.6 406.7L735.9 403.5L737.3 400.4L738.8 397.5L740.4 394.7L742.1 392.1L743.9 389.6L745.8 387.4L747.8 385.2L749.9 383.3L752.0 381.5L754.2 379.9L756.5 378.5L758.9 377.3L761.4 376.2L763.9 375.3L766.6 374.7L769.4 374.2L772.4 373.9L776.1 373.8L779.7 373.9L782.6 374.2L785.2 374.7L787.6 375.3L789.9 376.2L792.0 377.3L793.9 378.5L795.8 379.9L797.4 381.5L799.0 383.3L800.3 385.2L801.6 387.4L802.7 389.6L803.6 392.1L804.4 394.7L805.1 397.5L805.6 400.4L805.9 403.5L806.1 406.7L806.1 410.1L805.9 413.7L805.6 417.5L805.1 421.7ZM839 373.7C858 378 871 395 870.3 408.7H833.8ZM910.3 373.7L904 408.7H873.5C874 392 890 376 910.3 373.7ZM866 404H878L877 413H867ZM821.4 480.2C823 452 829 410 873.9 410C881 410.4 886.5 413.5 889.8 417.4L891 421L861 451C858 466 843 478.5 821.4 480.2ZM899.3 420.5L893.2 480.2C873 479 860.5 466 860.7 450.7L890.6 419Z"/></clipPath><clipPath id="ln"><rect x="126.8" y="423.1" width="793" height="6.40"/></clipPath><clipPath id="nl"><rect x="100" y="360" width="850" height="63.10"/><rect x="100" y="429.5" width="850" height="70.50"/></clipPath><g id="tex"><rect x="120" y="368" width="810" height="118" fill="#0b2636"/><g filter="url(#bl3)"><ellipse cx="163" cy="392" rx="24" ry="24" fill="#74a864" opacity="1.0" transform="rotate(0 163 392)"/><ellipse cx="170" cy="384" rx="13" ry="11" fill="#98c488" opacity="0.85" transform="rotate(0 170 384)"/><ellipse cx="148" cy="424" rx="20" ry="17" fill="#5f9a48" opacity="0.95" transform="rotate(0 148 424)"/><ellipse cx="194" cy="418" rx="13" ry="11" fill="#0b2636" opacity="0.95" transform="rotate(0 194 418)"/><ellipse cx="165" cy="462" rx="38" ry="17" fill="#173f45" opacity="0.9" transform="rotate(0 165 462)"/><ellipse cx="200" cy="452" rx="5" ry="14" fill="#6fa64a" opacity="0.8" transform="rotate(0 200 452)"/><ellipse cx="218" cy="426" rx="15" ry="5" fill="#5e9c4e" opacity="1.0" transform="rotate(0 218 426)"/><ellipse cx="129" cy="426" rx="4" ry="4" fill="#2f6b45" opacity="0.8" transform="rotate(0 129 426)"/><ellipse cx="246" cy="420" rx="12" ry="30" fill="#5d9a4e" opacity="0.95" transform="rotate(10 246 420)"/><ellipse cx="240" cy="400" rx="6" ry="10" fill="#8fbf7a" opacity="0.7" transform="rotate(0 240 400)"/><ellipse cx="279" cy="415" rx="8" ry="22" fill="#4f918a" opacity="0.95" transform="rotate(-52 279 415)"/><ellipse cx="278" cy="413" rx="4" ry="14" fill="#a9d6cc" opacity="0.8" transform="rotate(-52 278 413)"/><ellipse cx="262" cy="436" rx="14" ry="8" fill="#3f7f5a" opacity="0.8" transform="rotate(-30 262 436)"/><ellipse cx="290" cy="450" rx="14" ry="14" fill="#3f8568" opacity="0.8" transform="rotate(0 290 450)"/><ellipse cx="300" cy="444" rx="5" ry="12" fill="#7fb868" opacity="0.6" transform="rotate(0 300 444)"/><ellipse cx="262" cy="472" rx="20" ry="8" fill="#2a6a7c" opacity="0.85" transform="rotate(0 262 472)"/><ellipse cx="296" cy="400" rx="10" ry="14" fill="#0b2636" opacity="0.6" transform="rotate(0 296 400)"/><ellipse cx="375" cy="392" rx="20" ry="8" fill="#1c4c5c" opacity="0.7" transform="rotate(25 375 392)"/><ellipse cx="341" cy="444" rx="8" ry="14" fill="#b9dcd4" opacity="0.9" transform="rotate(10 341 444)"/><ellipse cx="352" cy="466" rx="12" ry="12" fill="#6aa84e" opacity="0.95" transform="rotate(25 352 466)"/><ellipse cx="339" cy="420" rx="5" ry="10" fill="#245f63" opacity="0.6" transform="rotate(0 339 420)"/><ellipse cx="318" cy="426" rx="7" ry="5" fill="#4f8f4a" opacity="0.85" transform="rotate(0 318 426)"/><ellipse cx="468" cy="416" rx="34" ry="38" fill="#4f8f6a" opacity="0.95" transform="rotate(0 468 416)"/><ellipse cx="500" cy="388" rx="10" ry="12" fill="#0b2636" opacity="0.9" transform="rotate(0 500 388)"/><ellipse cx="437" cy="440" rx="8" ry="18" fill="#0b2636" opacity="0.9" transform="rotate(0 437 440)"/><ellipse cx="496" cy="462" rx="13" ry="16" fill="#0b2636" opacity="0.9" transform="rotate(0 496 462)"/><ellipse cx="519" cy="426" rx="12" ry="6" fill="#76b05e" opacity="1.0" transform="rotate(0 519 426)"/><ellipse cx="570" cy="425" rx="36" ry="48" fill="#5a9a4a" opacity="1.0" transform="rotate(0 570 425)"/><ellipse cx="538" cy="410" rx="9" ry="26" fill="#0b2636" opacity="0.95" transform="rotate(8 538 410)"/><ellipse cx="592" cy="468" rx="16" ry="10" fill="#173f3a" opacity="0.85" transform="rotate(0 592 468)"/><ellipse cx="603" cy="392" rx="6" ry="10" fill="#0b2636" opacity="0.8" transform="rotate(0 603 392)"/><ellipse cx="617" cy="426" rx="12" ry="6" fill="#5f9f4a" opacity="1.0" transform="rotate(0 617 426)"/><ellipse cx="650" cy="420" rx="16" ry="26" fill="#1d4f3a" opacity="0.9" transform="rotate(0 650 420)"/><ellipse cx="684" cy="404" rx="24" ry="28" fill="#4a8a42" opacity="0.95" transform="rotate(0 684 404)"/><ellipse cx="652" cy="474" rx="14" ry="6" fill="#3f7f46" opacity="0.8" transform="rotate(0 652 474)"/><ellipse cx="712" cy="426" rx="7" ry="5" fill="#7db562" opacity="0.9" transform="rotate(0 712 426)"/><ellipse cx="762" cy="436" rx="30" ry="42" fill="#5a9a4a" opacity="1.0" transform="rotate(0 762 436)"/><ellipse cx="772" cy="382" rx="30" ry="8" fill="#0b2636" opacity="0.95" transform="rotate(0 772 382)"/><ellipse cx="797" cy="456" rx="9" ry="22" fill="#102f40" opacity="0.95" transform="rotate(0 797 456)"/><ellipse cx="754" cy="466" rx="22" ry="13" fill="#cfe8b4" opacity="0.95" transform="rotate(0 754 466)"/><ellipse cx="848" cy="396" rx="13" ry="13" fill="#4a8a42" opacity="0.95" transform="rotate(0 848 396)"/><ellipse cx="830" cy="475" rx="10" ry="7" fill="#6fae4c" opacity="0.95" transform="rotate(0 830 475)"/><ellipse cx="880" cy="458" rx="16" ry="22" fill="#4a9a74" opacity="0.95" transform="rotate(0 880 458)"/><ellipse cx="912" cy="426" rx="10" ry="5" fill="#64a44c" opacity="1.0" transform="rotate(0 912 426)"/><ellipse cx="896" cy="430" rx="6" ry="9" fill="#9cc85a" opacity="0.95" transform="rotate(0 896 430)"/><ellipse cx="893" cy="444" rx="6" ry="10" fill="#7fc0a0" opacity="0.7" transform="rotate(0 893 444)"/></g><g filter="url(#bl2)"><path d="M154.1 432.5Q164.8 426.1 171.5 408.1Q156.6 420.3 154.1 432.5Z" fill="#4f8a44"/><path d="M151.8 431.4Q164.1 432.9 180.3 422.9Q161.2 423.4 151.8 431.4Z" fill="#4f8a44"/><path d="M145.2 435.9Q152.3 427.2 153.2 409.7Q144.1 424.7 145.2 435.9Z" fill="#6fa64a"/><path d="M155.5 434.2Q162.0 425.3 163.0 408.0Q154.7 423.2 155.5 434.2Z" fill="#4f8a44"/><path d="M154.6 426.5Q145.8 420.5 129.0 419.8Q144.0 427.5 154.6 426.5Z" fill="#6fa64a"/><path d="M151.9 429.5Q155.5 420.3 150.7 406.0Q147.5 420.8 151.9 429.5Z" fill="#4f8a44"/><path d="M149.6 430.1Q155.5 422.4 152.5 408.2Q145.9 421.1 149.6 430.1Z" fill="#6fa64a"/><path d="M152.8 425.6Q154.9 417.5 149.5 405.8Q148.2 418.6 152.8 425.6Z" fill="#8fbf50"/><path d="M153.1 425.4Q161.3 427.1 169.5 418.1Q157.3 418.1 153.1 425.4Z" fill="#8fbf50"/><path d="M153.7 432.3Q161.1 432.4 169.5 424.9Q158.4 426.6 153.7 432.3Z" fill="#b5cf6a"/><path d="M144.8 433.2Q151.0 429.6 152.8 419.2Q144.8 426.1 144.8 433.2Z" fill="#b5cf6a"/><path d="M149.6 435.8Q156.4 439.5 165.2 433.0Q154.7 430.0 149.6 435.8Z" fill="#b5cf6a"/><path d="M151.6 433.5Q154.1 426.9 147.9 418.6Q146.2 428.8 151.6 433.5Z" fill="#d9c99a"/><path d="M146.6 427.2Q148.0 420.8 141.0 414.3Q140.9 423.8 146.6 427.2Z" fill="#d9c99a"/><path d="M153.6 426.1Q159.3 424.2 162.6 415.6Q154.6 420.1 153.6 426.1Z" fill="#d9c99a"/><path d="M153.3 427.2Q158.9 423.6 157.1 414.5Q150.7 421.2 153.3 427.2Z" fill="#d5e6a8"/><path d="M149.3 434.1Q155.4 433.1 157.6 424.7Q149.5 427.9 149.3 434.1Z" fill="#d9c99a"/><path d="M144.7 426.3Q150.9 426.9 154.7 419.2Q146.2 420.3 144.7 426.3Z" fill="#d5e6a8"/><path d="M148.9 416.4Q149.8 411.5 144.7 406.3Q144.8 413.6 148.9 416.4Z" fill="#e0c4a0" opacity="0.8"/><path d="M149.3 414.6Q153.6 412.9 155.3 406.2Q149.6 410.0 149.3 414.6Z" fill="#e0c4a0" opacity="0.8"/><path d="M153.0 411.9Q156.0 408.7 152.1 404.4Q149.3 409.5 153.0 411.9Z" fill="#e0c4a0" opacity="0.8"/><path d="M155.8 415.0Q157.9 411.1 152.8 408.5Q151.5 414.1 155.8 415.0Z" fill="#d9b8a0" opacity="0.8"/><path d="M156.6 411.4Q159.7 409.7 158.5 405.0Q155.0 408.3 156.6 411.4Z" fill="#d9b8a0" opacity="0.8"/><path d="M349.6 475.3Q358.6 466.4 361.8 446.8Q349.9 462.6 349.6 475.3Z" fill="#4f9145" opacity="0.9"/><path d="M344.2 476.1Q351.5 465.8 349.7 446.5Q341.0 463.9 344.2 476.1Z" fill="#4f9145" opacity="0.9"/><path d="M345.0 479.9Q353.9 471.9 359.8 454.0Q347.4 468.2 345.0 479.9Z" fill="#7db854" opacity="0.9"/><path d="M346.1 475.5Q356.7 471.1 367.6 456.6Q351.8 465.5 346.1 475.5Z" fill="#7db854" opacity="0.9"/><path d="M342.0 481.3Q352.1 475.7 360.6 459.7Q346.0 470.5 342.0 481.3Z" fill="#a9d26c" opacity="0.9"/><path d="M344.6 479.2Q354.6 474.0 362.9 458.4Q348.4 468.5 344.6 479.2Z" fill="#7db854" opacity="0.9"/><path d="M344.8 477.1Q354.3 473.3 361.6 459.2Q348.0 467.3 344.8 477.1Z" fill="#a9d26c" opacity="0.9"/><path d="M342.9 479.2Q347.2 470.3 343.3 455.7Q338.9 470.2 342.9 479.2Z" fill="#cfe6dc" opacity="0.9"/><path d="M345.3 481.2Q353.9 476.6 360.1 462.9Q348.0 471.9 345.3 481.2Z" fill="#cfe6dc" opacity="0.9"/><path d="M349.9 474.3Q355.3 467.3 349.8 456.0Q344.3 467.4 349.9 474.3Z" fill="#8fc4b4" opacity="0.9"/><path d="M347.3 479.4Q353.5 474.9 354.1 463.6Q346.3 471.8 347.3 479.4Z" fill="#cfe6dc" opacity="0.9"/><path d="M341.2 474.9Q346.2 468.6 341.1 458.4Q336.1 468.7 341.2 474.9Z" fill="#cfe6dc" opacity="0.9"/><path d="M335.6 449.3Q341.2 444.4 340.8 433.3Q333.9 442.0 335.6 449.3Z" fill="#cfe6dc" opacity="0.85"/><path d="M338.8 452.0Q341.5 445.5 336.0 436.7Q334.0 446.9 338.8 452.0Z" fill="#cfe6dc" opacity="0.85"/><path d="M338.1 451.4Q341.8 446.7 337.4 439.5Q333.9 447.2 338.1 451.4Z" fill="#cfe6dc" opacity="0.85"/><path d="M340.7 455.9Q345.8 455.1 347.3 448.1Q340.6 450.8 340.7 455.9Z" fill="#f4faf6" opacity="0.85"/><path d="M341.6 451.7Q343.7 447.5 339.3 442.9Q337.7 449.1 341.6 451.7Z" fill="#f4faf6" opacity="0.85"/><path d="M338.1 452.5Q343.3 453.0 343.8 446.3Q337.3 447.4 338.1 452.5Z" fill="#8fc4b4" opacity="0.85"/><path d="M340.4 453.6Q345.8 451.8 342.4 445.7Q336.5 449.5 340.4 453.6Z" fill="#8fc4b4" opacity="0.85"/><path d="M340.8 449.5Q345.5 447.0 341.9 441.4Q336.8 445.8 340.8 449.5Z" fill="#8fc4b4" opacity="0.85"/><path d="M694.7 448.3Q700.0 439.8 694.4 426.3Q689.2 440.0 694.7 448.3Z" fill="#24603e" opacity="0.8"/><path d="M685.4 453.6Q683.0 444.8 670.2 440.3Q676.3 452.3 685.4 453.6Z" fill="#24603e" opacity="0.8"/><path d="M692.9 451.0Q696.3 443.1 689.6 432.2Q687.0 444.7 692.9 451.0Z" fill="#24603e" opacity="0.8"/><path d="M685.3 457.5Q687.2 449.6 679.0 441.1Q678.7 452.9 685.3 457.5Z" fill="#2f7772" opacity="0.8"/><path d="M693.3 451.0Q696.8 444.1 691.7 433.9Q688.7 444.8 693.3 451.0Z" fill="#24603e" opacity="0.8"/><path d="M690.8 449.6Q692.4 442.2 685.5 433.3Q685.2 444.5 690.8 449.6Z" fill="#2f7772" opacity="0.8"/><path d="M689.4 454.7Q691.3 449.3 684.9 444.9Q684.1 452.6 689.4 454.7Z" fill="#2f7772" opacity="0.8"/></g><g filter="url(#bl1)"><path d="M141.4 477.3Q157.0 461.1 173.1 428.5Q149.8 456.4 141.4 477.3Z" fill="#2f6b5a" opacity="0.92"/><path d="M144.4 479.2Q158.7 461.9 167.4 427.1Q147.5 456.9 144.4 479.2Z" fill="#2f6b5a" opacity="0.92"/><path d="M144.8 482.1Q162.3 468.2 177.6 436.2Q152.3 461.1 144.8 482.1Z" fill="#2f6b5a" opacity="0.92"/><path d="M148.9 479.0Q169.2 485.8 203.7 487.6Q170.3 478.7 148.9 479.0Z" fill="#2f6b5a" opacity="0.92"/><path d="M145.3 472.0Q166.9 471.6 196.7 454.8Q162.8 459.4 145.3 472.0Z" fill="#4f8f72" opacity="0.92"/><path d="M151.8 475.9Q166.4 462.8 176.9 433.4Q156.3 456.8 151.8 475.9Z" fill="#2f6b5a" opacity="0.92"/><path d="M147.2 473.0Q154.9 455.7 152.9 425.7Q143.8 454.3 147.2 473.0Z" fill="#8fc4b4" opacity="0.92"/><path d="M149.2 475.5Q165.9 483.4 195.4 483.6Q167.6 473.7 149.2 475.5Z" fill="#4f8f72" opacity="0.92"/><path d="M144.4 479.2Q154.8 464.7 158.3 436.8Q144.6 461.4 144.4 479.2Z" fill="#4f8f72" opacity="0.92"/><path d="M144.1 483.5Q161.1 480.2 184.9 465.5Q158.0 473.1 144.1 483.5Z" fill="#4f8f72" opacity="0.92"/><path d="M147.1 477.2Q159.5 467.8 166.9 444.7Q149.8 461.9 147.1 477.2Z" fill="#8fc4b4" opacity="0.92"/><path d="M141.8 477.0Q150.7 465.4 151.3 442.6Q140.1 462.5 141.8 477.0Z" fill="#8fc4b4" opacity="0.92"/><path d="M139.8 473.5Q151.6 480.5 173.0 479.5Q153.3 471.0 139.8 473.5Z" fill="#cfe6dc" opacity="0.92"/><path d="M143.2 480.5Q149.4 469.0 150.5 448.1Q142.5 467.4 143.2 480.5Z" fill="#cfe6dc" opacity="0.92"/><path d="M146.0 479.6Q159.2 477.2 172.5 461.2Q152.9 468.0 146.0 479.6Z" fill="#f4faf6" opacity="0.92"/><path d="M147.8 477.9Q160.6 479.4 178.4 469.9Q158.2 470.3 147.8 477.9Z" fill="#f4faf6" opacity="0.92"/><path d="M148.2 477.2Q160.4 481.8 178.1 473.2Q158.8 469.5 148.2 477.2Z" fill="#f4faf6" opacity="0.92"/><path d="M150.7 482.9Q162.7 484.1 178.1 473.6Q159.5 474.6 150.7 482.9Z" fill="#f4faf6" opacity="0.92"/><path d="M139.4 479.4Q148.4 471.8 149.0 454.1Q137.7 467.8 139.4 479.4Z" fill="#f4faf6" opacity="0.92"/><path d="M152.9 483.3Q163.8 479.5 171.2 463.6Q155.9 472.1 152.9 483.3Z" fill="#f4faf6" opacity="0.92"/><path d="M149.3 483.6Q155.3 473.9 151.7 457.0Q145.1 473.0 149.3 483.6Z" fill="#f4faf6" opacity="0.92"/><path d="M148.8 484.5Q157.1 492.0 173.2 488.2Q159.0 479.7 148.8 484.5Z" fill="#ffffff" opacity="0.92"/><path d="M148.1 478.4Q155.6 471.2 162.2 456.0Q151.4 468.6 148.1 478.4Z" fill="#0d2a33" opacity="0.9"/><path d="M148.7 479.5Q163.1 471.8 181.3 452.7Q159.0 466.9 148.7 479.5Z" fill="#0d2a33" opacity="0.9"/><path d="M152.7 471.6Q158.2 463.9 158.2 449.1Q151.4 462.2 152.7 471.6Z" fill="#0d2a33" opacity="0.9"/><path d="M148.5 476.8Q163.9 470.9 184.1 453.6Q160.2 465.1 148.5 476.8Z" fill="#0d2a33" opacity="0.9"/><path d="M149.6 477.8Q158.2 461.1 163.4 431.1Q151.4 459.1 149.6 477.8Z" fill="#123a33" opacity="0.9"/><path d="M151.7 478.6Q169.5 479.0 197.1 471.0Q168.4 472.5 151.7 478.6Z" fill="#123a33" opacity="0.9"/><path d="M155.7 476.4Q176.0 476.4 207.3 467.1Q174.7 469.4 155.7 476.4Z" fill="#0f3030" opacity="0.9"/><path d="M154.3 474.2Q162.4 464.8 167.5 445.6Q156.2 461.9 154.3 474.2Z" fill="#0f3030" opacity="0.9"/><path d="M153.2 475.8Q166.7 479.2 189.1 477.2Q166.9 473.5 153.2 475.8Z" fill="#0f3030" opacity="0.9"/><path d="M153.6 472.1Q171.8 476.5 202.3 478.3Q172.4 472.4 153.6 472.1Z" fill="#0f3030" opacity="0.9"/><path d="M132.6 467.6Q135.9 460.2 132.7 448.0Q129.4 460.1 132.6 467.6Z" fill="#7fb7a6" opacity="0.85"/><path d="M134.7 470.5Q138.9 465.1 137.2 455.0Q132.5 464.1 134.7 470.5Z" fill="#7fb7a6" opacity="0.85"/><path d="M128.2 473.8Q133.4 470.1 133.6 460.8Q127.2 467.5 128.2 473.8Z" fill="#7fb7a6" opacity="0.85"/><path d="M132.5 469.9Q137.8 467.0 137.7 458.2Q131.1 464.0 132.5 469.9Z" fill="#7fb7a6" opacity="0.85"/><path d="M135.2 467.7Q141.1 466.2 143.0 457.8Q135.2 461.6 135.2 467.7Z" fill="#cfe6dc" opacity="0.85"/><path d="M132.2 468.3Q134.6 464.6 131.2 459.3Q129.1 465.2 132.2 468.3Z" fill="#cfe6dc" opacity="0.85"/><path d="M479.7 419.8Q482.1 400.0 469.8 370.9Q469.8 402.5 479.7 419.8Z" fill="#2f6b4f"/><path d="M469.2 430.5Q488.1 436.6 518.8 430.0Q488.0 424.1 469.2 430.5Z" fill="#2f6b4f"/><path d="M477.8 427.8Q463.4 415.3 435.1 403.1Q459.8 421.6 477.8 427.8Z" fill="#2f6b4f"/><path d="M476.4 425.6Q494.9 429.6 524.6 423.6Q494.6 420.1 476.4 425.6Z" fill="#2f6b4f"/><path d="M482.6 423.0Q482.5 404.0 466.8 378.3Q470.7 408.1 482.6 423.0Z" fill="#3f7f55"/><path d="M478.0 421.7Q496.6 423.1 523.2 410.6Q493.8 411.9 478.0 421.7Z" fill="#2f6b4f"/><path d="M480.3 428.2Q462.9 422.2 434.1 426.9Q462.6 433.3 480.3 428.2Z" fill="#3f7f55"/><path d="M480.3 419.4Q497.8 420.2 522.7 407.9Q495.0 409.9 480.3 419.4Z" fill="#3f7f55"/><path d="M482.4 428.0Q498.9 426.1 521.2 411.6Q495.3 417.4 482.4 428.0Z" fill="#2f6b4f"/><path d="M469.9 427.3Q480.7 415.1 487.2 389.9Q472.3 411.2 469.9 427.3Z" fill="#3f7f55"/><path d="M472.5 418.3Q486.2 408.9 496.9 385.0Q477.3 402.4 472.5 418.3Z" fill="#5fa070"/><path d="M483.7 429.1Q467.6 426.0 442.8 434.0Q468.7 435.8 483.7 429.1Z" fill="#3f7f55"/><path d="M473.5 423.5Q481.1 409.4 484.0 383.7Q473.8 407.4 473.5 423.5Z" fill="#3f7f55"/><path d="M477.5 426.1Q491.6 418.6 504.7 396.9Q484.0 411.5 477.5 426.1Z" fill="#5fa070"/><path d="M478.6 425.1Q463.1 422.8 439.7 430.8Q464.4 431.8 478.6 425.1Z" fill="#5fa070"/><path d="M468.7 430.9Q483.3 435.1 505.6 427.0Q482.2 423.7 468.7 430.9Z" fill="#5fa070"/><path d="M478.2 429.0Q463.4 425.8 443.0 437.2Q466.3 438.3 478.2 429.0Z" fill="#8fc4a4"/><path d="M479.0 420.8Q493.2 423.9 514.7 416.1Q491.9 414.1 479.0 420.8Z" fill="#8fc4a4"/><path d="M474.0 423.7Q468.9 410.0 450.1 397.2Q460.9 417.2 474.0 423.7Z" fill="#8fc4a4"/><path d="M475.1 426.7Q488.4 430.4 510.0 426.1Q488.3 422.5 475.1 426.7Z" fill="#5fa070"/><path d="M471.9 424.4Q480.3 413.0 477.6 391.6Q467.8 410.8 471.9 424.4Z" fill="#8fc4a4"/><path d="M475.9 425.8Q489.1 424.5 506.3 412.5Q485.8 417.0 475.9 425.8Z" fill="#b9dccc"/><path d="M471.1 422.0Q482.2 416.6 493.4 400.6Q477.0 411.2 471.1 422.0Z" fill="#8fc4a4"/><path d="M478.3 427.2Q482.1 414.6 472.0 397.4Q469.6 417.2 478.3 427.2Z" fill="#8fc4a4"/><path d="M482.0 417.3Q487.8 406.8 487.3 387.9Q480.2 405.4 482.0 417.3Z" fill="#b9dccc"/><path d="M478.0 419.7Q488.3 426.6 507.1 423.7Q489.8 415.9 478.0 419.7Z" fill="#dceee6"/><path d="M481.4 417.2Q493.7 415.7 505.4 400.9Q487.3 406.3 481.4 417.2Z" fill="#8fc4a4"/><path d="M479.9 430.7Q468.1 429.1 452.9 439.4Q471.2 438.9 479.9 430.7Z" fill="#b9dccc"/><path d="M474.4 431.0Q466.2 422.9 448.5 420.8Q462.9 431.3 474.4 431.0Z" fill="#b9dccc"/><path d="M471.9 416.7Q466.2 407.2 450.7 399.2Q461.6 412.8 471.9 416.7Z" fill="#dceee6"/><path d="M477.0 420.5Q486.0 413.2 487.7 395.6Q476.0 408.9 477.0 420.5Z" fill="#dceee6"/><path d="M474.7 428.4Q480.7 418.8 476.7 402.1Q470.3 418.1 474.7 428.4Z" fill="#dceee6"/><path d="M473.9 426.5Q481.5 417.8 478.9 400.7Q470.0 415.6 473.9 426.5Z" fill="#dceee6"/><path d="M476.8 424.1Q487.7 428.3 502.4 419.3Q485.4 416.3 476.8 424.1Z" fill="#f4faf6"/><path d="M473.8 421.8Q464.2 416.8 447.9 420.9Q463.8 426.1 473.8 421.8Z" fill="#dceee6"/><path d="M483.7 430.7Q478.2 422.2 463.2 418.0Q473.6 429.5 483.7 430.7Z" fill="#f4faf6"/><path d="M475.3 419.3Q476.4 409.5 465.5 399.9Q466.8 414.3 475.3 419.3Z" fill="#f4faf6"/><path d="M469.2 417.4Q469.4 407.8 458.2 399.1Q460.6 413.1 469.2 417.4Z" fill="#f4faf6"/><path d="M478.6 417.3Q473.6 410.0 460.4 408.0Q469.8 417.5 478.6 417.3Z" fill="#f4faf6"/><path d="M472.3 422.8Q465.4 418.4 453.2 421.0Q464.7 425.9 472.3 422.8Z" fill="#f4faf6"/><path d="M456.7 397.3Q453.8 387.2 441.2 376.5Q447.8 391.6 456.7 397.3Z" fill="#5fa070" opacity="0.9"/><path d="M462.8 409.3Q458.0 400.5 443.9 393.4Q453.2 406.1 462.8 409.3Z" fill="#5fa070" opacity="0.9"/><path d="M464.2 402.4Q461.2 392.4 447.1 385.3Q454.3 399.4 464.2 402.4Z" fill="#5fa070" opacity="0.9"/><path d="M467.7 406.9Q470.9 397.6 464.8 383.8Q462.3 398.7 467.7 406.9Z" fill="#8fc4a4" opacity="0.9"/><path d="M460.7 396.3Q459.1 387.0 448.0 377.4Q452.7 391.3 460.7 396.3Z" fill="#8fc4a4" opacity="0.9"/><path d="M456.9 395.0Q463.8 389.2 463.7 375.8Q455.2 386.2 456.9 395.0Z" fill="#8fc4a4" opacity="0.9"/><path d="M454.6 395.7Q457.9 387.6 450.8 376.8Q448.4 389.5 454.6 395.7Z" fill="#cfe6dc" opacity="0.9"/><path d="M461.7 398.2Q466.5 391.2 462.3 379.4Q457.3 390.9 461.7 398.2Z" fill="#cfe6dc" opacity="0.9"/><path d="M465.3 408.6Q467.9 400.7 460.7 390.6Q459.3 402.9 465.3 408.6Z" fill="#cfe6dc" opacity="0.9"/><path d="M454.9 398.9Q459.0 392.7 452.8 384.4Q449.3 394.1 454.9 398.9Z" fill="#f4faf6" opacity="0.9"/><path d="M465.5 403.5Q470.0 399.3 468.6 390.4Q463.3 397.7 465.5 403.5Z" fill="#f4faf6" opacity="0.9"/><path d="M456.8 406.1Q461.1 401.9 459.0 393.4Q454.1 400.7 456.8 406.1Z" fill="#f4faf6" opacity="0.9"/><path d="M493.7 406.9Q501.7 405.6 510.3 396.3Q498.3 400.2 493.7 406.9Z" fill="#5fa070" opacity="0.9"/><path d="M496.5 412.3Q504.5 411.5 513.9 403.3Q501.8 406.3 496.5 412.3Z" fill="#5fa070" opacity="0.9"/><path d="M493.2 414.6Q496.3 407.3 494.0 395.1Q490.8 407.1 493.2 414.6Z" fill="#5fa070" opacity="0.9"/><path d="M501.9 409.2Q505.7 403.4 502.0 394.0Q498.2 403.4 501.9 409.2Z" fill="#a9d8cc" opacity="0.9"/><path d="M501.5 413.0Q508.0 413.5 514.5 406.2Q504.8 407.4 501.5 413.0Z" fill="#a9d8cc" opacity="0.9"/><path d="M499.6 414.6Q505.9 415.6 513.2 409.4Q503.6 409.5 499.6 414.6Z" fill="#a9d8cc" opacity="0.9"/><path d="M494.3 414.2Q501.0 413.1 504.7 404.1Q495.5 407.6 494.3 414.2Z" fill="#a9d8cc" opacity="0.9"/><path d="M495.0 417.0Q499.1 412.4 495.3 404.8Q491.1 412.2 495.0 417.0Z" fill="#a9d8cc" opacity="0.9"/><path d="M493.9 409.1Q498.0 406.6 497.6 399.6Q492.6 404.4 493.9 409.1Z" fill="#e8f4ee" opacity="0.9"/><path d="M490.0 415.9Q495.3 414.3 494.6 406.9Q488.2 410.6 490.0 415.9Z" fill="#e8f4ee" opacity="0.9"/><path d="M475.6 472.4Q484.8 468.7 489.4 454.6Q476.9 462.6 475.6 472.4Z" fill="#4f9060" opacity="0.95"/><path d="M469.5 471.4Q478.9 470.4 488.6 459.6Q474.6 463.5 469.5 471.4Z" fill="#4f9060" opacity="0.95"/><path d="M464.5 470.0Q461.7 461.0 449.3 453.5Q455.7 466.5 464.5 470.0Z" fill="#7fba8c" opacity="0.95"/><path d="M469.1 459.8Q470.8 451.2 464.8 439.0Q464.2 452.6 469.1 459.8Z" fill="#7fba8c" opacity="0.95"/><path d="M477.5 463.8Q486.3 462.9 496.0 453.3Q482.8 456.7 477.5 463.8Z" fill="#4f9060" opacity="0.95"/><path d="M470.6 458.4Q463.9 452.5 450.5 453.8Q462.0 460.9 470.6 458.4Z" fill="#4f9060" opacity="0.95"/><path d="M470.7 461.8Q475.1 453.8 470.1 441.2Q465.8 454.1 470.7 461.8Z" fill="#7fba8c" opacity="0.95"/><path d="M478.7 471.5Q486.7 469.2 493.3 458.3Q481.8 463.8 478.7 471.5Z" fill="#7fba8c" opacity="0.95"/><path d="M468.4 475.2Q477.3 475.4 484.7 464.7Q471.9 467.0 468.4 475.2Z" fill="#7fba8c" opacity="0.95"/><path d="M460.3 467.7Q468.7 468.6 477.4 459.7Q464.9 460.6 460.3 467.7Z" fill="#7fba8c" opacity="0.95"/><path d="M475.7 467.3Q480.0 460.1 475.1 448.9Q470.9 460.4 475.7 467.3Z" fill="#b9dccc" opacity="0.95"/><path d="M465.0 471.0Q472.4 468.9 478.1 458.8Q467.5 463.7 465.0 471.0Z" fill="#7fba8c" opacity="0.95"/><path d="M461.4 461.8Q457.9 455.3 447.3 451.5Q454.2 460.4 461.4 461.8Z" fill="#7fba8c" opacity="0.95"/><path d="M479.8 477.2Q481.7 470.9 477.1 462.1Q475.8 472.0 479.8 477.2Z" fill="#b9dccc" opacity="0.95"/><path d="M465.6 474.8Q470.8 471.2 472.2 461.8Q465.4 468.5 465.6 474.8Z" fill="#7fba8c" opacity="0.95"/><path d="M478.1 468.2Q484.4 468.2 490.7 461.0Q481.3 462.8 478.1 468.2Z" fill="#b9dccc" opacity="0.95"/><path d="M459.0 481.4Q455.5 475.8 446.1 476.3Q452.7 483.1 459.0 481.4Z" fill="#f0f8f2" opacity="0.95"/><path d="M458.6 467.1Q464.7 464.5 464.7 455.1Q457.0 460.5 458.6 467.1Z" fill="#b9dccc" opacity="0.95"/><path d="M472.0 464.2Q477.9 461.9 479.2 452.8Q471.5 457.8 472.0 464.2Z" fill="#f0f8f2" opacity="0.95"/><path d="M458.2 461.4Q459.0 454.6 450.4 450.6Q451.5 460.0 458.2 461.4Z" fill="#f0f8f2" opacity="0.95"/><path d="M472.7 465.9Q478.5 467.9 483.7 461.2Q475.2 460.3 472.7 465.9Z" fill="#f0f8f2" opacity="0.95"/><path d="M471.1 462.7Q470.5 456.3 462.1 456.1Q464.7 464.2 471.1 462.7Z" fill="#f0f8f2" opacity="0.95"/><path d="M449.5 428.5L476 409L477.6 411.4L452 430.6Z" fill="#dcb097"/><path d="M471 406L478 400L481 409L477 418L473 414Z" fill="#e6cdb8" opacity="0.9"/><path d="M474 432L479 428L481 437L477 441Z" fill="#e0c2aa" opacity="0.85"/><path d="M571.5 426.7Q580.5 405.6 571.7 371.1Q562.7 405.5 571.5 426.7Z" fill="#2f6b3f"/><path d="M566.5 438.1Q584.1 423.8 593.0 389.6Q569.0 415.6 566.5 438.1Z" fill="#2f6b3f"/><path d="M575.0 438.6Q597.5 436.0 622.6 411.5Q588.7 420.6 575.0 438.6Z" fill="#2f6b3f"/><path d="M563.6 431.3Q584.4 422.7 601.3 392.2Q571.5 410.2 563.6 431.3Z" fill="#2f6b3f"/><path d="M570.2 429.4Q592.2 426.7 617.7 403.3Q584.2 412.3 570.2 429.4Z" fill="#2f6b3f"/><path d="M567.1 428.4Q566.0 406.7 546.4 378.7Q552.4 412.4 567.1 428.4Z" fill="#2f6b3f"/><path d="M576.4 433.2Q585.9 415.3 586.2 383.2Q574.4 413.1 576.4 433.2Z" fill="#2f6b3f"/><path d="M568.0 432.9Q582.6 419.7 592.7 390.3Q572.2 413.7 568.0 432.9Z" fill="#468a44"/><path d="M580.9 438.1Q575.5 418.9 552.0 398.5Q564.3 427.1 580.9 438.1Z" fill="#2f6b3f"/><path d="M579.2 438.7Q597.8 433.3 618.7 411.1Q590.6 423.1 579.2 438.7Z" fill="#5fa24a"/><path d="M576.2 433.8Q596.4 432.9 618.8 411.4Q588.4 417.6 576.2 433.8Z" fill="#468a44"/><path d="M574.5 424.6Q562.5 410.5 534.8 401.4Q556.3 421.1 574.5 424.6Z" fill="#468a44"/><path d="M574.8 437.1Q578.9 419.2 568.7 392.3Q566.1 420.9 574.8 437.1Z" fill="#5fa24a"/><path d="M578.8 423.9Q594.5 415.0 608.6 390.5Q585.9 407.4 578.8 423.9Z" fill="#468a44"/><path d="M573.3 438.7Q591.6 438.9 612.7 420.4Q585.0 424.6 573.3 438.7Z" fill="#468a44"/><path d="M579.3 428.8Q585.0 412.8 576.7 388.0Q571.6 413.7 579.3 428.8Z" fill="#5fa24a"/><path d="M575.3 432.4Q583.1 416.8 573.7 392.2Q566.3 417.4 575.3 432.4Z" fill="#468a44"/><path d="M563.9 435.5Q572.4 421.3 569.1 395.7Q559.4 419.5 563.9 435.5Z" fill="#5fa24a"/><path d="M573.4 432.0Q587.2 423.5 597.3 400.3Q577.8 416.4 573.4 432.0Z" fill="#7db854"/><path d="M578.8 440.9Q589.3 429.0 592.4 404.4Q578.7 425.0 578.8 440.9Z" fill="#7db854"/><path d="M574.2 435.4Q577.1 419.5 564.8 397.6Q564.2 422.7 574.2 435.4Z" fill="#5fa24a"/><path d="M577.2 437.2Q592.3 430.6 600.0 407.0Q579.4 420.9 577.2 437.2Z" fill="#7db854"/><path d="M572.6 423.8Q562.0 411.8 537.6 409.4Q556.5 424.9 572.6 423.8Z" fill="#7db854"/><path d="M573.2 439.3Q566.9 425.1 545.2 415.5Q558.2 435.4 573.2 439.3Z" fill="#9fce66"/><path d="M572.0 426.2Q571.3 410.1 551.4 396.9Q557.0 420.1 572.0 426.2Z" fill="#7db854"/><path d="M564.3 425.2Q563.0 410.8 545.2 398.3Q551.0 419.3 564.3 425.2Z" fill="#7db854"/><path d="M577.5 424.6Q580.3 411.2 569.7 393.3Q568.7 414.1 577.5 424.6Z" fill="#7db854"/><path d="M570.1 427.2Q575.6 415.2 568.2 396.7Q563.2 416.0 570.1 427.2Z" fill="#9fce66"/><path d="M577.2 429.7Q590.8 426.9 598.6 408.0Q579.9 416.1 577.2 429.7Z" fill="#c6e48c"/><path d="M575.8 426.5Q588.8 426.0 601.5 411.0Q582.4 415.3 575.8 426.5Z" fill="#c6e48c"/><path d="M566.0 433.9Q560.0 421.9 540.7 421.2Q552.7 436.4 566.0 433.9Z" fill="#9fce66"/><path d="M579.9 431.0Q581.6 418.3 566.5 407.7Q568.1 426.0 579.9 431.0Z" fill="#c6e48c"/><path d="M565.2 432.7Q561.6 420.5 543.9 418.6Q552.6 434.1 565.2 432.7Z" fill="#c6e48c"/><path d="M579.2 428.5Q582.3 418.7 574.3 405.4Q572.3 420.8 579.2 428.5Z" fill="#c6e48c"/><path d="M565.6 440.3Q569.8 429.3 557.7 418.3Q555.4 434.5 565.6 440.3Z" fill="#c6e48c"/><path d="M568.4 428.8Q563.6 419.7 548.7 418.9Q558.2 430.4 568.4 428.8Z" fill="#c6e48c"/><path d="M538.6 472.4Q550.2 462.3 555.3 438.8Q539.8 457.1 538.6 472.4Z" fill="#4f9145"/><path d="M544.3 479.5Q551.6 467.0 549.6 444.6Q541.0 465.4 544.3 479.5Z" fill="#4f9145"/><path d="M543.6 468.9Q552.8 459.3 556.5 438.9Q544.2 455.7 543.6 468.9Z" fill="#4f9145"/><path d="M541.7 470.1Q543.4 456.4 530.8 439.6Q531.7 460.6 541.7 470.1Z" fill="#6aaa4c"/><path d="M540.3 473.3Q550.3 463.4 549.1 442.2Q536.9 459.6 540.3 473.3Z" fill="#6aaa4c"/><path d="M548.9 479.8Q559.5 474.9 560.6 458.0Q547.2 468.2 548.9 479.8Z" fill="#a9d26c"/><path d="M549.1 471.8Q557.6 467.1 562.6 453.0Q550.8 462.2 549.1 471.8Z" fill="#a9d26c"/><path d="M539.2 466.5Q547.2 461.1 547.3 447.0Q537.4 457.1 539.2 466.5Z" fill="#a9d26c"/><path d="M552.9 471.8Q559.7 465.5 556.8 452.4Q549.1 463.4 552.9 471.8Z" fill="#a9d26c"/><path d="M541.4 473.5Q547.3 467.7 545.0 455.9Q538.3 465.9 541.4 473.5Z" fill="#a9d26c"/><path d="M549.1 479.8Q554.6 474.4 550.3 464.5Q544.6 473.6 549.1 479.8Z" fill="#f0f8d6"/><path d="M552.2 468.3Q556.7 462.4 551.7 453.3Q547.3 462.8 552.2 468.3Z" fill="#f0f8d6"/><path d="M575.0 419.7Q566.6 415.8 560.3 426.2Q572.2 428.5 575.0 419.7Z" fill="#d5eca6" opacity="0.95"/><path d="M572.2 416.2Q566.1 422.6 573.7 431.4Q579.5 421.3 572.2 416.2Z" fill="#d5eca6" opacity="0.95"/><path d="M575.1 417.2Q581.5 415.3 583.3 405.9Q574.9 410.5 575.1 417.2Z" fill="#d5eca6" opacity="0.95"/><path d="M574.3 415.9Q574.2 407.9 564.4 409.3Q566.8 418.9 574.3 415.9Z" fill="#d5eca6" opacity="0.95"/><path d="M575.4 417.2Q569.7 418.5 570.1 426.2Q577.1 422.8 575.4 417.2Z" fill="#eef7e6" opacity="0.95"/><path d="M572.9 417.3Q571.2 424.2 579.9 424.9Q579.9 416.2 572.9 417.3Z" fill="#d5eca6" opacity="0.95"/><path d="M578.7 422.6Q579.1 429.7 587.5 427.5Q585.0 419.1 578.7 422.6Z" fill="#eef7e6" opacity="0.95"/><path d="M572.2 419.3Q573.5 413.8 566.5 410.9Q566.7 418.4 572.2 419.3Z" fill="#eef7e6" opacity="0.95"/><path d="M576.8 414.7Q581.2 410.1 575.0 405.2Q571.0 412.1 576.8 414.7Z" fill="#eef7e6" opacity="0.95"/><path d="M574.8 420.1Q569.0 420.9 570.0 428.3Q577.0 425.6 574.8 420.1Z" fill="#eef7e6" opacity="0.95"/><path d="M574.6 420.3Q569.5 415.3 565.6 422.8Q572.9 427.1 574.6 420.3Z" fill="#eef7e6" opacity="0.95"/><path d="M575.3 420.7Q577.2 413.5 568.6 414.8Q568.3 423.4 575.3 420.7Z" fill="#ffffff" opacity="0.95"/><path d="M575.3 418.0Q576.0 411.9 568.6 412.6Q569.5 419.9 575.3 418.0Z" fill="#ffffff" opacity="0.95"/><path d="M574.4 413.4Q570.5 408.7 565.9 414.4Q571.8 418.9 574.4 413.4Z" fill="#ffffff" opacity="0.95"/><path d="M585.5 470.2Q581.0 463.2 568.6 460.2Q577.3 469.6 585.5 470.2Z" fill="#3d8a80" opacity="0.85"/><path d="M589.2 471.1Q590.1 462.8 582.3 452.9Q583.1 465.5 589.2 471.1Z" fill="#3d8a80" opacity="0.85"/><path d="M586.1 470.6Q594.2 468.4 597.7 456.9Q586.9 462.3 586.1 470.6Z" fill="#3d8a80" opacity="0.85"/><path d="M590.0 465.0Q594.2 459.1 590.3 449.2Q586.0 458.9 590.0 465.0Z" fill="#7fb7a6" opacity="0.85"/><path d="M586.6 462.6Q584.9 455.6 574.9 452.4Q579.3 462.0 586.6 462.6Z" fill="#7fb7a6" opacity="0.85"/><path d="M583.0 463.5Q586.4 458.5 580.7 452.6Q577.9 460.3 583.0 463.5Z" fill="#5b9b4a" opacity="0.85"/><path d="M585.6 470.3Q590.3 468.3 591.3 460.8Q585.1 465.1 585.6 470.3Z" fill="#7fb7a6" opacity="0.85"/><path d="M583.7 466.9Q580.2 463.2 573.9 466.2Q579.7 470.0 583.7 466.9Z" fill="#5b9b4a" opacity="0.85"/><path d="M584.9 461.8Q589.1 465.3 594.5 460.6Q588.1 457.3 584.9 461.8Z" fill="#5b9b4a" opacity="0.85"/><path d="M586.3 459.8Q591.3 460.8 592.2 454.4Q585.8 454.8 586.3 459.8Z" fill="#5b9b4a" opacity="0.85"/><path d="M572.8 429.7Q578.6 420.7 581.3 403.9Q573.5 419.1 572.8 429.7Z" fill="#0f3030" opacity="0.85"/><path d="M572.3 427.0Q580.0 419.3 588.7 403.8Q577.0 417.1 572.3 427.0Z" fill="#0f3030" opacity="0.85"/><path d="M576.9 426.7Q584.5 424.5 594.6 417.0Q582.8 421.5 576.9 426.7Z" fill="#0f3030" opacity="0.85"/><path d="M563.9 444.8Q568.1 428.9 568.9 402.4Q563.6 428.4 563.9 444.8Z" fill="#0f3030" opacity="0.85"/><path d="M572.2 443.1Q567.5 436.9 556.7 430.9Q565.1 440.0 572.2 443.1Z" fill="#123a33" opacity="0.85"/><path d="M577.2 431.8Q583.1 417.3 587.8 392.3Q579.3 416.3 577.2 431.8Z" fill="#123a33" opacity="0.85"/><path d="M579.9 437.6Q588.8 424.0 596.6 398.8Q583.7 421.8 579.9 437.6Z" fill="#17463f" opacity="0.85"/><path d="M579.9 443.2Q585.3 428.6 587.8 403.4Q580.5 427.6 579.9 443.2Z" fill="#123a33" opacity="0.85"/><path d="M565.5 428.4Q576.1 423.5 589.4 410.1Q573.1 419.5 565.5 428.4Z" fill="#17463f" opacity="0.85"/><path d="M583.3 427.2Q597.3 424.7 617.4 413.5Q595.2 419.3 583.3 427.2Z" fill="#17463f" opacity="0.85"/><path d="M569.5 446.4Q566.5 434.6 555.6 418.2Q562.0 436.8 569.5 446.4Z" fill="#0d2a33" opacity="0.85"/><path d="M562.8 425.0Q556.9 419.9 544.7 417.8Q555.0 424.7 562.8 425.0Z" fill="#17463f" opacity="0.85"/><path d="M562.9 431.9Q573.3 419.8 583.6 396.1Q568.1 416.8 562.9 431.9Z" fill="#17463f" opacity="0.85"/><path d="M569.0 431.4Q582.2 428.1 601.3 417.2Q580.4 423.9 569.0 431.4Z" fill="#0d2a33" opacity="0.85"/><path d="M583.9 467.2Q580.4 463.6 573.1 464.9Q579.3 469.0 583.9 467.2Z" fill="#0f3030" opacity="0.85"/><path d="M592.0 466.4Q597.7 468.3 606.8 465.5Q597.5 463.8 592.0 466.4Z" fill="#0f3030" opacity="0.85"/><path d="M586.2 462.8Q591.8 461.3 596.6 453.8Q588.4 457.4 586.2 462.8Z" fill="#0f3030" opacity="0.85"/><path d="M583.3 464.9Q590.7 465.9 601.6 461.2Q589.7 461.0 583.3 464.9Z" fill="#0f3030" opacity="0.85"/><path d="M595.9 469.7Q598.6 462.3 596.9 449.8Q594.0 462.1 595.9 469.7Z" fill="#123a33" opacity="0.85"/><path d="M582.9 470.8Q587.2 465.0 587.6 453.8Q582.2 463.6 582.9 470.8Z" fill="#17463f" opacity="0.85"/><path d="M597.0 475.8Q596.4 469.5 589.7 462.2Q592.1 471.8 597.0 475.8Z" fill="#17463f" opacity="0.85"/><path d="M593.6 464.8Q588.6 461.4 580.3 464.6Q588.5 468.1 593.6 464.8Z" fill="#0d2a33" opacity="0.85"/><path d="M681.9 417.4Q685.6 402.9 680.7 379.6Q677.3 403.2 681.9 417.4Z" fill="#2f6b3f"/><path d="M675.5 421.9Q676.2 407.4 666.0 386.9Q667.6 409.8 675.5 421.9Z" fill="#2f6b3f"/><path d="M683.8 409.3Q683.5 395.2 672.4 375.7Q675.5 397.9 683.8 409.3Z" fill="#2f6b3f"/><path d="M680.1 407.7Q693.2 402.4 705.7 384.0Q686.4 395.1 680.1 407.7Z" fill="#2f6b3f"/><path d="M671.2 416.7Q672.3 402.1 658.9 384.1Q660.7 406.5 671.2 416.7Z" fill="#2f6b3f"/><path d="M676.1 415.1Q667.3 403.8 645.8 399.0Q661.8 414.2 676.1 415.1Z" fill="#2f6b3f"/><path d="M675.3 416.6Q689.4 415.9 705.0 400.7Q683.7 405.2 675.3 416.6Z" fill="#468a44"/><path d="M676.6 419.8Q688.7 413.7 697.7 394.5Q680.5 406.8 676.6 419.8Z" fill="#468a44"/><path d="M674.4 418.8Q669.0 406.1 649.6 397.7Q660.9 415.6 674.4 418.8Z" fill="#2f6b3f"/><path d="M669.6 421.2Q664.2 408.3 644.3 401.7Q655.7 419.3 669.6 421.2Z" fill="#468a44"/><path d="M678.9 408.8Q691.4 404.7 701.5 387.2Q683.6 396.5 678.9 408.8Z" fill="#5fa24a"/><path d="M682.6 406.4Q690.2 396.6 690.7 377.2Q681.1 394.0 682.6 406.4Z" fill="#5fa24a"/><path d="M681.3 418.8Q676.3 406.8 657.8 402.0Q668.4 417.9 681.3 418.8Z" fill="#468a44"/><path d="M680.7 408.4Q678.8 396.6 662.7 389.3Q669.0 405.8 680.7 408.4Z" fill="#468a44"/><path d="M680.8 419.7Q677.3 409.7 663.0 402.5Q670.8 416.5 680.8 419.7Z" fill="#7db854"/><path d="M671.5 412.5Q664.3 404.0 648.8 407.7Q661.5 417.4 671.5 412.5Z" fill="#5fa24a"/><path d="M676.6 421.2Q681.5 412.7 676.4 398.8Q671.6 412.7 676.6 421.2Z" fill="#5fa24a"/><path d="M677.6 415.2Q684.0 408.1 682.5 393.7Q674.9 406.0 677.6 415.2Z" fill="#5fa24a"/><path d="M671.4 415.9Q673.9 406.0 663.4 395.6Q662.8 410.3 671.4 415.9Z" fill="#9fce66"/><path d="M673.7 410.5Q671.3 400.7 657.3 396.6Q663.6 409.7 673.7 410.5Z" fill="#7db854"/><path d="M673.4 417.9Q668.2 410.7 654.9 409.2Q664.5 418.5 673.4 417.9Z" fill="#9fce66"/><path d="M683.8 412.4Q684.0 402.6 671.4 396.6Q674.2 410.2 683.8 412.4Z" fill="#7db854"/><path d="M669.2 414.9Q678.6 414.5 683.6 402.1Q670.8 405.6 669.2 414.9Z" fill="#7db854"/><path d="M673.9 416.5Q677.5 408.8 670.1 399.0Q667.4 411.0 673.9 416.5Z" fill="#9fce66"/><path d="M668.2 414.4Q676.1 419.8 685.3 410.9Q673.3 406.4 668.2 414.4Z" fill="#7db854"/><path d="M683.8 408.4Q691.3 405.2 691.8 393.6Q682.4 400.4 683.8 408.4Z" fill="#9fce66"/><path d="M678.8 421.2Q679.4 413.2 669.8 407.2Q671.4 418.5 678.8 421.2Z" fill="#9fce66"/><path d="M674.9 406.2Q682.5 407.9 688.9 399.0Q677.9 398.9 674.9 406.2Z" fill="#c6e48c"/><path d="M675.9 409.7Q674.5 400.8 662.8 401.8Q667.3 412.7 675.9 409.7Z" fill="#c6e48c"/><path d="M674.2 419.6Q672.3 412.5 662.1 410.6Q666.9 419.8 674.2 419.6Z" fill="#c6e48c"/><path d="M673.5 419.8Q679.4 416.2 678.9 406.2Q671.7 413.2 673.5 419.8Z" fill="#c6e48c"/><path d="M675.1 415.5Q680.8 410.4 674.6 402.7Q669.1 410.9 675.1 415.5Z" fill="#c6e48c"/><path d="M695.0 402.1Q703.5 400.8 712.2 390.8Q699.7 394.9 695.0 402.1Z" fill="#79b84a"/><path d="M696.6 399.2Q699.1 390.9 692.4 379.7Q690.9 392.7 696.6 399.2Z" fill="#79b84a"/><path d="M698.4 410.0Q705.9 405.7 708.4 393.1Q698.5 401.4 698.4 410.0Z" fill="#79b84a"/><path d="M697.0 401.4Q703.7 397.9 707.3 386.9Q698.0 393.9 697.0 401.4Z" fill="#79b84a"/><path d="M692.9 402.9Q700.6 400.7 704.5 389.5Q694.0 395.0 692.9 402.9Z" fill="#79b84a"/><path d="M701.7 409.9Q707.0 403.9 702.6 393.5Q697.1 403.4 701.7 409.9Z" fill="#e6f2c0"/><path d="M695.6 401.8Q699.9 396.7 697.3 387.3Q692.5 395.9 695.6 401.8Z" fill="#a5d066"/><path d="M695.3 409.5Q701.6 410.3 707.7 403.3Q698.4 403.9 695.3 409.5Z" fill="#a5d066"/><path d="M697.2 403.4Q699.3 396.9 691.9 391.1Q691.1 400.5 697.2 403.4Z" fill="#a5d066"/><path d="M701.4 398.3Q706.4 393.7 702.1 385.5Q696.9 393.2 701.4 398.3Z" fill="#e6f2c0"/><path d="M698.1 403.5Q701.3 397.7 694.6 392.0Q692.3 400.5 698.1 403.5Z" fill="#e6f2c0"/><path d="M694.5 406.7Q696.8 402.1 691.4 398.0Q689.8 404.6 694.5 406.7Z" fill="#e6f2c0"/><path d="M687.3 414.3Q692.3 405.6 693.9 389.7Q687.2 404.2 687.3 414.3Z" fill="#0f3030" opacity="0.85"/><path d="M682.7 420.3Q688.9 421.6 697.8 417.1Q687.9 416.5 682.7 420.3Z" fill="#123a33" opacity="0.85"/><path d="M670.2 412.0Q678.5 408.2 689.6 398.4Q676.6 405.5 670.2 412.0Z" fill="#0f3030" opacity="0.85"/><path d="M668.9 414.3Q660.0 409.2 643.7 407.4Q658.6 414.2 668.9 414.3Z" fill="#123a33" opacity="0.85"/><path d="M686.4 412.6Q693.3 411.6 702.8 405.8Q691.9 408.4 686.4 412.6Z" fill="#123a33" opacity="0.85"/><path d="M686.9 417.4Q689.9 407.4 687.7 391.0Q684.6 407.3 686.9 417.4Z" fill="#123a33" opacity="0.85"/><path d="M674.0 420.8Q676.0 408.7 673.9 388.9Q671.9 408.7 674.0 420.8Z" fill="#17463f" opacity="0.85"/><path d="M677.5 413.2Q684.0 408.5 690.1 397.5Q680.7 405.9 677.5 413.2Z" fill="#17463f" opacity="0.85"/><path d="M684.7 407.2Q687.9 399.4 688.9 385.7Q684.7 398.7 684.7 407.2Z" fill="#17463f" opacity="0.85"/><path d="M672.5 408.0Q673.8 398.7 670.6 384.0Q669.7 399.0 672.5 408.0Z" fill="#17463f" opacity="0.85"/><path d="M672.6 421.0Q677.2 415.0 679.2 403.3Q673.1 413.5 672.6 421.0Z" fill="#0d2a33" opacity="0.85"/><path d="M687.3 406.1Q689.6 401.6 687.8 394.0Q685.4 401.4 687.3 406.1Z" fill="#0d2a33" opacity="0.85"/><path d="M754.6 470.3Q781.5 446.6 805.0 394.4Q766.0 436.3 754.6 470.3Z" fill="#2f6b3f"/><path d="M759.6 464.1Q787.5 443.3 814.5 394.6Q773.4 432.1 759.6 464.1Z" fill="#2f6b3f"/><path d="M755.3 483.0Q747.6 449.3 714.7 404.9Q732.1 457.4 755.3 483.0Z" fill="#2f6b3f"/><path d="M748.6 472.6Q772.0 448.8 792.3 399.2Q758.4 440.7 748.6 472.6Z" fill="#2f6b3f"/><path d="M753.7 477.6Q765.8 446.8 765.6 393.7Q750.7 444.7 753.7 477.6Z" fill="#468a44"/><path d="M762.0 475.4Q777.2 446.6 786.6 395.0Q765.4 443.0 762.0 475.4Z" fill="#468a44"/><path d="M749.1 479.3Q745.9 447.5 719.5 403.9Q729.9 453.8 749.1 479.3Z" fill="#468a44"/><path d="M763.0 471.6Q786.7 450.7 808.6 405.0Q773.9 441.9 763.0 471.6Z" fill="#468a44"/><path d="M762.8 467.3Q774.9 438.5 778.1 388.3Q762.3 436.1 762.8 467.3Z" fill="#468a44"/><path d="M757.9 477.8Q773.2 451.8 773.1 404.3Q754.1 447.9 757.9 477.8Z" fill="#468a44"/><path d="M766.5 476.8Q789.5 459.5 809.6 418.4Q776.3 449.7 766.5 476.8Z" fill="#5fa24a"/><path d="M767.5 482.2Q779.3 456.1 777.0 410.7Q762.9 453.9 767.5 482.2Z" fill="#5fa24a"/><path d="M763.3 475.6Q769.7 448.4 763.1 403.9Q756.8 448.4 763.3 475.6Z" fill="#5fa24a"/><path d="M767.6 470.6Q781.4 446.3 783.6 402.0Q766.0 442.7 767.6 470.6Z" fill="#5fa24a"/><path d="M759.5 480.8Q765.1 454.9 754.4 414.0Q750.0 456.0 759.5 480.8Z" fill="#5fa24a"/><path d="M763.1 466.0Q772.5 442.1 769.7 401.1Q758.7 440.7 763.1 466.0Z" fill="#7db854"/><path d="M754.4 478.7Q763.5 455.7 761.4 416.4Q750.6 454.3 754.4 478.7Z" fill="#5fa24a"/><path d="M767.7 482.3Q769.9 457.4 751.4 422.8Q753.1 462.0 767.7 482.3Z" fill="#7db854"/><path d="M767.0 479.3Q773.1 457.4 765.7 422.0Q759.9 457.7 767.0 479.3Z" fill="#7db854"/><path d="M762.5 469.3Q766.7 446.7 749.3 415.8Q748.4 451.2 762.5 469.3Z" fill="#7db854"/><path d="M762.6 475.5Q765.3 454.6 751.5 424.6Q751.5 457.6 762.6 475.5Z" fill="#7db854"/><path d="M758.7 480.8Q756.0 460.1 733.9 436.3Q742.6 467.6 758.7 480.8Z" fill="#9fce66"/><path d="M751.3 471.0Q757.3 451.3 747.8 420.6Q742.6 452.4 751.3 471.0Z" fill="#c6e48c"/><path d="M753.5 469.7Q767.3 455.9 770.3 426.0Q752.4 450.2 753.5 469.7Z" fill="#9fce66"/><path d="M767.1 475.2Q782.4 464.0 791.2 435.9Q770.1 456.5 767.1 475.2Z" fill="#9fce66"/><path d="M761.3 475.0Q778.9 465.9 787.5 437.1Q763.6 455.3 761.3 475.0Z" fill="#9fce66"/><path d="M752.4 468.0Q755.0 448.7 736.6 425.7Q737.8 455.1 752.4 468.0Z" fill="#9fce66"/><path d="M753.4 479.9Q769.1 470.3 779.8 443.7Q757.8 462.0 753.4 479.9Z" fill="#c6e48c"/><path d="M755.6 478.3Q770.1 466.2 770.9 437.8Q752.7 459.6 755.6 478.3Z" fill="#9fce66"/><path d="M753.1 469.9Q766.3 458.3 768.0 431.6Q751.1 452.4 753.1 469.9Z" fill="#c6e48c"/><path d="M793.7 417.6Q806.8 409.9 818.2 388.9Q799.3 403.5 793.7 417.6Z" fill="#5b9b4a"/><path d="M794.3 417.2Q794.2 402.0 778.5 384.7Q782.4 407.7 794.3 417.2Z" fill="#5b9b4a"/><path d="M785.2 417.3Q799.1 411.8 808.1 391.0Q788.8 402.8 785.2 417.3Z" fill="#5b9b4a"/><path d="M790.2 417.8Q795.4 404.2 787.3 383.4Q782.8 405.2 790.2 417.8Z" fill="#86bd55"/><path d="M789.9 417.8Q800.8 411.0 807.2 392.2Q792.1 405.1 789.9 417.8Z" fill="#86bd55"/><path d="M791.1 423.1Q799.1 413.8 796.4 395.5Q787.2 411.5 791.1 423.1Z" fill="#c9e58f"/><path d="M790.6 418.3Q799.4 409.5 795.9 391.5Q785.8 406.8 790.6 418.3Z" fill="#86bd55"/><path d="M794.4 426.8Q803.5 421.9 804.1 406.9Q792.6 416.6 794.4 426.8Z" fill="#86bd55"/><path d="M788.5 422.0Q795.0 415.8 791.1 403.7Q784.0 414.3 788.5 422.0Z" fill="#f4f9dc"/><path d="M794.6 417.3Q797.1 409.4 787.9 402.7Q787.0 414.1 794.6 417.3Z" fill="#f4f9dc"/><path d="M786.0 422.7Q792.5 416.4 785.3 406.9Q779.1 417.0 786.0 422.7Z" fill="#f4f9dc"/><path d="M790.7 426.8Q794.4 420.7 789.8 411.2Q786.3 421.1 790.7 426.8Z" fill="#f4f9dc"/><path d="M744.7 483.8Q743.1 475.2 731.6 468.8Q736.4 481.0 744.7 483.8Z" fill="#93c957" opacity="0.9"/><path d="M745.0 473.1Q751.7 468.5 753.3 456.4Q744.6 465.0 745.0 473.1Z" fill="#93c957" opacity="0.9"/><path d="M746.8 481.1Q751.3 474.6 747.4 463.7Q742.7 474.3 746.8 481.1Z" fill="#d5eca6" opacity="0.9"/><path d="M758.4 468.3Q762.0 461.2 755.6 451.6Q752.7 462.7 758.4 468.3Z" fill="#d5eca6" opacity="0.9"/><path d="M757.3 472.9Q757.8 466.3 750.2 460.2Q751.4 469.9 757.3 472.9Z" fill="#93c957" opacity="0.9"/><path d="M755.5 477.1Q759.0 471.1 753.4 462.9Q750.4 472.4 755.5 477.1Z" fill="#d5eca6" opacity="0.9"/><path d="M759.5 471.7Q765.5 468.4 765.3 458.6Q758.0 465.1 759.5 471.7Z" fill="#93c957" opacity="0.9"/><path d="M749.4 475.1Q757.0 473.6 755.5 463.7Q746.5 468.0 749.4 475.1Z" fill="#f2fae0" opacity="0.9"/><path d="M760.3 470.9Q764.0 466.1 760.3 458.3Q756.6 466.1 760.3 470.9Z" fill="#f2fae0" opacity="0.9"/><path d="M757.4 473.2Q762.1 469.8 760.8 461.6Q755.3 467.8 757.4 473.2Z" fill="#d5eca6" opacity="0.9"/><path d="M749.6 473.7Q752.2 467.1 743.9 463.1Q742.6 472.3 749.6 473.7Z" fill="#d5eca6" opacity="0.9"/><path d="M756.5 481.5Q762.4 479.5 761.8 471.1Q754.7 475.6 756.5 481.5Z" fill="#f2fae0" opacity="0.9"/><path d="M758.7 470.4Q750.4 446.4 729.4 410.9Q744.8 449.2 758.7 470.4Z" fill="#0f3030" opacity="0.8"/><path d="M748.0 465.2Q759.2 452.6 770.5 427.8Q753.9 449.4 748.0 465.2Z" fill="#0f3030" opacity="0.8"/><path d="M751.1 463.4Q756.3 452.0 758.9 431.9Q751.9 450.9 751.1 463.4Z" fill="#123a33" opacity="0.8"/><path d="M767.3 474.7Q770.1 453.1 767.8 417.7Q764.9 453.1 767.3 474.7Z" fill="#0f3030" opacity="0.8"/><path d="M748.1 468.7Q743.3 456.5 730.6 439.5Q739.7 458.7 748.1 468.7Z" fill="#123a33" opacity="0.8"/><path d="M750.5 469.3Q744.4 440.8 728.1 396.4Q739.6 442.3 750.5 469.3Z" fill="#123a33" opacity="0.8"/><path d="M773.2 472.9Q775.4 455.8 771.2 428.2Q769.5 456.0 773.2 472.9Z" fill="#17463f" opacity="0.8"/><path d="M751.3 486.4Q751.3 458.9 744.7 414.4Q746.4 459.3 751.3 486.4Z" fill="#123a33" opacity="0.8"/><path d="M757.2 461.5Q753.1 450.0 740.1 435.4Q748.3 453.1 757.2 461.5Z" fill="#17463f" opacity="0.8"/><path d="M751.9 460.5Q761.3 448.9 769.9 426.4Q756.3 446.2 751.9 460.5Z" fill="#0d2a33" opacity="0.8"/><path d="M764.3 473.0Q777.2 449.6 792.2 408.9Q772.6 447.6 764.3 473.0Z" fill="#17463f" opacity="0.8"/><path d="M747.2 467.3Q754.3 457.8 760.8 439.7Q750.3 455.8 747.2 467.3Z" fill="#17463f" opacity="0.8"/><path d="M763.5 468.9Q763.9 450.3 758.1 420.7Q759.0 450.9 763.5 468.9Z" fill="#0d2a33" opacity="0.8"/><path d="M757.7 475.1Q766.7 448.3 774.7 402.9Q761.6 447.1 757.7 475.1Z" fill="#0d2a33" opacity="0.8"/><path d="M848.2 412.6Q847.7 399.7 835.3 383.8Q838.9 403.6 848.2 412.6Z" fill="#2f6b3f" opacity="0.9"/><path d="M845.1 409.7Q852.7 400.3 855.1 381.5Q845.2 397.6 845.1 409.7Z" fill="#2f6b3f" opacity="0.9"/><path d="M842.1 412.8Q843.4 401.3 834.0 386.2Q834.6 404.0 842.1 412.8Z" fill="#2f6b3f" opacity="0.9"/><path d="M849.9 412.6Q858.6 405.7 865.1 389.5Q852.8 401.9 849.9 412.6Z" fill="#3f8046" opacity="0.9"/><path d="M850.9 414.2Q857.3 404.9 856.9 387.4Q849.1 403.1 850.9 414.2Z" fill="#3f8046" opacity="0.9"/><path d="M843.4 408.3Q848.5 399.3 844.0 384.2Q838.7 399.0 843.4 408.3Z" fill="#5b9b4a" opacity="0.9"/><path d="M841.1 409.0Q844.0 399.5 838.6 385.2Q836.2 400.3 841.1 409.0Z" fill="#3f8046" opacity="0.9"/><path d="M843.5 413.1Q842.1 404.4 831.4 396.2Q835.7 409.0 843.5 413.1Z" fill="#3f8046" opacity="0.9"/><path d="M846.0 406.2Q848.8 399.2 845.6 387.9Q842.8 399.3 846.0 406.2Z" fill="#5b9b4a" opacity="0.9"/><path d="M846.0 414.1Q848.2 406.5 841.4 397.0Q840.3 408.7 846.0 414.1Z" fill="#3f8046" opacity="0.9"/><path d="M842.6 413.0Q845.9 406.3 842.5 395.5Q839.2 406.4 842.6 413.0Z" fill="#86bd55" opacity="0.9"/><path d="M840.3 409.1Q846.5 404.8 844.4 394.3Q837.2 402.2 840.3 409.1Z" fill="#86bd55" opacity="0.9"/><path d="M843.4 404.2Q847.7 398.5 841.8 390.8Q838.0 399.7 843.4 404.2Z" fill="#86bd55" opacity="0.9"/><path d="M841.3 414.8Q844.7 409.7 839.0 403.6Q836.2 411.4 841.3 414.8Z" fill="#86bd55" opacity="0.9"/><path d="M894.3 401.8Q901.3 393.0 902.2 375.6Q893.3 390.6 894.3 401.8Z" fill="#24603e" opacity="0.85"/><path d="M895.9 402.8Q903.2 394.6 905.2 377.5Q895.7 391.9 895.9 402.8Z" fill="#3f8046" opacity="0.85"/><path d="M893.9 408.5Q903.5 403.1 909.9 387.2Q896.4 397.7 893.9 408.5Z" fill="#24603e" opacity="0.85"/><path d="M896.2 402.2Q902.3 394.3 902.1 378.9Q894.5 392.3 896.2 402.2Z" fill="#24603e" opacity="0.85"/><path d="M893.0 404.8Q899.9 398.3 903.6 383.9Q894.1 395.4 893.0 404.8Z" fill="#3f8046" opacity="0.85"/><path d="M899.6 404.4Q905.1 398.9 907.1 387.1Q899.8 396.7 899.6 404.4Z" fill="#3f8046" opacity="0.85"/><path d="M891.5 402.6Q897.8 400.1 902.4 390.9Q893.5 396.1 891.5 402.6Z" fill="#3f8046" opacity="0.85"/><path d="M897.9 408.4Q904.2 407.2 906.6 398.3Q898.2 402.0 897.9 408.4Z" fill="#6fae4c" opacity="0.85"/><path d="M899.0 401.3Q903.8 399.8 905.0 392.8Q898.7 396.3 899.0 401.3Z" fill="#6fae4c" opacity="0.85"/><path d="M883.4 457.9Q873.8 457.4 860.5 464.4Q875.5 463.3 883.4 457.9Z" fill="#2f6b3f" opacity="0.9"/><path d="M882.0 459.2Q876.5 467.3 878.3 482.1Q884.6 468.6 882.0 459.2Z" fill="#2f6b3f" opacity="0.9"/><path d="M881.0 463.9Q886.6 456.7 888.4 442.5Q881.1 454.8 881.0 463.9Z" fill="#2f6b3f" opacity="0.9"/><path d="M880.5 466.0Q887.1 472.2 901.3 474.4Q889.6 466.1 880.5 466.0Z" fill="#2f6b3f" opacity="0.9"/><path d="M878.9 458.8Q884.2 451.3 882.9 437.3Q876.7 449.9 878.9 458.8Z" fill="#2f6b3f" opacity="0.9"/><path d="M879.0 463.2Q877.4 455.5 868.4 446.9Q872.6 458.6 879.0 463.2Z" fill="#3d8a80" opacity="0.9"/><path d="M880.7 461.7Q875.8 454.8 863.3 453.9Q872.3 462.7 880.7 461.7Z" fill="#2f6b3f" opacity="0.9"/><path d="M879.5 459.2Q876.0 466.6 881.4 477.4Q884.4 465.7 879.5 459.2Z" fill="#3d8a80" opacity="0.9"/><path d="M882.5 455.5Q877.1 460.5 875.1 471.8Q882.3 462.9 882.5 455.5Z" fill="#5b9b4a" opacity="0.9"/><path d="M878.8 465.9Q881.6 459.0 877.7 448.1Q875.1 459.4 878.8 465.9Z" fill="#5b9b4a" opacity="0.9"/><path d="M882.5 460.7Q879.0 467.2 882.1 478.0Q885.6 467.4 882.5 460.7Z" fill="#3d8a80" opacity="0.9"/><path d="M878.8 461.8Q874.9 455.0 863.5 454.1Q871.1 462.7 878.8 461.8Z" fill="#86bd55" opacity="0.9"/><path d="M884.7 454.7Q892.2 454.7 896.9 445.0Q886.4 447.3 884.7 454.7Z" fill="#5b9b4a" opacity="0.9"/><path d="M874.9 458.7Q881.4 459.4 889.5 453.4Q879.5 454.0 874.9 458.7Z" fill="#5b9b4a" opacity="0.9"/><path d="M884.8 465.7Q886.6 472.3 895.9 476.2Q891.4 467.1 884.8 465.7Z" fill="#86bd55" opacity="0.9"/><path d="M877.8 461.5Q876.8 454.8 867.8 450.3Q871.2 459.7 877.8 461.5Z" fill="#86bd55" opacity="0.9"/><path d="M882.9 457.6Q880.1 463.8 886.1 471.6Q888.1 462.0 882.9 457.6Z" fill="#86bd55" opacity="0.9"/><path d="M882.5 463.1Q882.0 469.8 890.0 475.3Q888.8 465.7 882.5 463.1Z" fill="#a9d8cc" opacity="0.9"/><path d="M875.4 457.6Q868.7 456.2 864.3 464.5Q873.7 464.3 875.4 457.6Z" fill="#a9d8cc" opacity="0.9"/><path d="M879.5 459.7Q877.6 453.4 868.6 452.9Q873.0 460.8 879.5 459.7Z" fill="#f0f8f2" opacity="0.9"/><path d="M882.7 457.8Q876.9 455.3 871.0 461.7Q879.6 463.3 882.7 457.8Z" fill="#a9d8cc" opacity="0.9"/><path d="M879.3 455.5Q885.3 457.3 890.4 450.2Q881.7 449.7 879.3 455.5Z" fill="#f0f8f2" opacity="0.9"/><path d="M882.5 459.4Q883.1 465.7 891.7 467.3Q888.8 459.1 882.5 459.4Z" fill="#a9d8cc" opacity="0.9"/><path d="M880.5 465.8Q874.4 466.9 873.8 475.3Q881.5 471.9 880.5 465.8Z" fill="#a9d8cc" opacity="0.9"/><path d="M874.7 455.8Q869.8 452.3 863.8 457.7Q871.3 460.8 874.7 455.8Z" fill="#f0f8f2" opacity="0.9"/><path d="M884.2 459.8Q881.5 454.5 874.7 457.9Q879.7 463.7 884.2 459.8Z" fill="#f0f8f2" opacity="0.9"/></g></g></defs><g clip-path="url(#ln)"><use href="#tex"/></g><g clip-path="url(#go)"><use href="#tex"/></g><g clip-path="url(#go)"><g clip-path="url(#nl)" fill="#ffffff"><path d="M125 455.39L207 414.22L207 418.82L125 459.99Z"/><path d="M125 462.94L207 419.56L207 423.16L125 466.54Z"/><path d="M125 469.38L207 423.54L207 426.04L125 471.88Z"/><path d="M125 474.28L207 427.38L207 428.78L125 475.68Z"/><path d="M125 478.55L207 430.66L207 431.36L125 479.25Z"/><path d="M230.0 449.78L311.0 409.12L311.0 413.72L230.0 454.38Z"/><path d="M230.0 457.31L311.0 414.46L311.0 418.06L230.0 460.91Z"/><path d="M230.0 463.72L311.0 418.44L311.0 420.94L230.0 466.22Z"/><path d="M230.0 468.61L311.0 422.28L311.0 423.68L230.0 470.01Z"/><path d="M230.0 472.86L311.0 425.56L311.0 426.26L230.0 473.56Z"/><path d="M329.3 449.78L410.3 409.12L410.3 413.72L329.3 454.38Z"/><path d="M329.3 457.31L410.3 414.46L410.3 418.06L329.3 460.91Z"/><path d="M329.3 463.72L410.3 418.44L410.3 420.94L329.3 466.22Z"/><path d="M329.3 468.61L410.3 422.28L410.3 423.68L329.3 470.01Z"/><path d="M329.3 472.86L410.3 425.56L410.3 426.26L329.3 473.56Z"/><path d="M428.6 449.78L509.6 409.12L509.6 413.72L428.6 454.38Z"/><path d="M428.6 457.31L509.6 414.46L509.6 418.06L428.6 460.91Z"/><path d="M428.6 463.72L509.6 418.44L509.6 420.94L428.6 466.22Z"/><path d="M428.6 468.61L509.6 422.28L509.6 423.68L428.6 470.01Z"/><path d="M428.6 472.86L509.6 425.56L509.6 426.26L428.6 473.56Z"/><path d="M527.9 449.78L608.9 409.12L608.9 413.72L527.9 454.38Z"/><path d="M527.9 457.31L608.9 414.46L608.9 418.06L527.9 460.91Z"/><path d="M527.9 463.72L608.9 418.44L608.9 420.94L527.9 466.22Z"/><path d="M527.9 468.61L608.9 422.28L608.9 423.68L527.9 470.01Z"/><path d="M527.9 472.86L608.9 425.56L608.9 426.26L527.9 473.56Z"/><path d="M627.2 449.78L708.2 409.12L708.2 413.72L627.2 454.38Z"/><path d="M627.2 457.31L708.2 414.46L708.2 418.06L627.2 460.91Z"/><path d="M627.2 463.72L708.2 418.44L708.2 420.94L627.2 466.22Z"/><path d="M627.2 468.61L708.2 422.28L708.2 423.68L627.2 470.01Z"/><path d="M627.2 472.86L708.2 425.56L708.2 426.26L627.2 473.56Z"/><path d="M726.5 449.78L807.5 409.12L807.5 413.72L726.5 454.38Z"/><path d="M726.5 457.31L807.5 414.46L807.5 418.06L726.5 460.91Z"/><path d="M726.5 463.72L807.5 418.44L807.5 420.94L726.5 466.22Z"/><path d="M726.5 468.61L807.5 422.28L807.5 423.68L726.5 470.01Z"/><path d="M726.5 472.86L807.5 425.56L807.5 426.26L726.5 473.56Z"/><path d="M819 454.00L901 410.94L901 415.15L819 458.20Z"/><path d="M819 459.27L901 415.97L901 419.37L819 462.67Z"/><path d="M819 464.43L901 421.79L901 424.09L819 466.73Z"/><path d="M819 469.39L901 427.40L901 428.60L819 470.59Z"/><path d="M819 472.84L901 431.35L901 431.95L819 473.44Z"/></g></g></svg>
<div style="left:50.1px;top:110.7px;width:947.0px;height:633.0999999999999px;border:1px solid #4a86f0;box-sizing:border-box;"></div>
<div style="left:47.1px;top:107.7px;width:7px;height:7px;background:#f4f4f4;border:1px solid #5089f0;box-sizing:border-box;"></div>
<div style="left:520.1px;top:107.7px;width:7px;height:7px;background:#f4f4f4;border:1px solid #5089f0;box-sizing:border-box;"></div>
<div style="left:993.1px;top:107.7px;width:7px;height:7px;background:#f4f4f4;border:1px solid #5089f0;box-sizing:border-box;"></div>
<div style="left:47.1px;top:423.75px;width:7px;height:7px;background:#f4f4f4;border:1px solid #5089f0;box-sizing:border-box;"></div>
<div style="left:993.1px;top:423.75px;width:7px;height:7px;background:#f4f4f4;border:1px solid #5089f0;box-sizing:border-box;"></div>
<div style="left:47.1px;top:739.8px;width:7px;height:7px;background:#f4f4f4;border:1px solid #5089f0;box-sizing:border-box;"></div>
<div style="left:520.1px;top:739.8px;width:7px;height:7px;background:#f4f4f4;border:1px solid #5089f0;box-sizing:border-box;"></div>
<div style="left:993.1px;top:739.8px;width:7px;height:7px;background:#f4f4f4;border:1px solid #5089f0;box-sizing:border-box;"></div>
<svg style="left:515.3px;top:418.8px;" width="18" height="18" viewBox="0 0 18 18"><circle cx="9" cy="9" r="4.6" fill="#ffffff" fill-opacity="0.8" stroke="#141414" stroke-width="1.3"/><circle cx="9" cy="8.6" r="2.3" fill="#16294a"/><path d="M9 0.3V4.2M9 13.8V17.7M0.3 9H4.2M13.8 9H17.7" stroke="#141414" stroke-width="1.2"/></svg>
<div style="left:0px;top:44px;width:28px;height:744px;background:#535353;"></div>
<div style="left:28px;top:44px;width:3px;height:744px;background:#3f3f3f;"></div>
<div style="left:0px;top:44px;width:1px;height:744px;background:#3f3f3f;"></div>
<div style="left:0px;top:44px;width:28px;height:9px;background:#3c3c3c;"></div>
<svg style="left:3.5px;top:46px;" width="7" height="5" viewBox="0 0 7 5"><path d="M0.6 0.5L2.8 2.5L0.6 4.5M3.8 0.5L6 2.5L3.8 4.5" fill="none" stroke="#e0e0e0" stroke-width="1"/></svg>
<div style="left:7px;top:56px;width:15px;height:2px;background:#484848;"></div>
<div style="left:3px;top:66px;width:23px;height:18px;background:#383838;border-radius:2px;"></div>
<svg style="left:7.0px;top:66.8px;" width="16" height="16" viewBox="0 0 16 16"><g transform="translate(1.5,1.5) scale(0.93)"><path d="M7 0.2L9.3 2.8H7.7V6.3H11.2V4.7L13.8 7L11.2 9.3V7.7H7.7V11.2H9.3L7 13.8L4.7 11.2H6.3V7.7H2.8V9.3L0.2 7L2.8 4.7V6.3H6.3V2.8H4.7Z" fill="#e6e6e6"/></g></svg>
<svg style="left:22px;top:79.8px;" width="3" height="3" viewBox="0 0 3 3"><path d="M3 0V3H0Z" fill="#c8c8c8"/></svg>
<svg style="left:7.0px;top:86.32px;" width="16" height="16" viewBox="0 0 16 16"><rect x="2.2" y="3.2" width="11.6" height="9.6" fill="none" stroke="#dcdcdc" stroke-width="1.2" stroke-dasharray="3 1.6"/></svg>
<svg style="left:22px;top:99.32px;" width="3" height="3" viewBox="0 0 3 3"><path d="M3 0V3H0Z" fill="#c8c8c8"/></svg>
<svg style="left:7.0px;top:105.84px;" width="16" height="16" viewBox="0 0 16 16"><ellipse cx="8.5" cy="6.3" rx="5.8" ry="3.8" transform="rotate(-15 8.5 6.3)" fill="none" stroke="#dcdcdc" stroke-width="1.2"/><path d="M4 9.2C2.6 10.4 3.4 12.3 5 11.4C6 10.6 5.3 9.4 4.2 9.6M4.6 11.6L4 13.8" fill="none" stroke="#dcdcdc" stroke-width="1.2" stroke-width="1"/></svg>
<svg style="left:22px;top:118.84px;" width="3" height="3" viewBox="0 0 3 3"><path d="M3 0V3H0Z" fill="#c8c8c8"/></svg>
<svg style="left:7.0px;top:125.36000000000001px;" width="16" height="16" viewBox="0 0 16 16"><circle cx="5.6" cy="8.8" r="3.9" fill="none" stroke="#dcdcdc" stroke-width="1.2" stroke-dasharray="1.6 1.2" stroke-width="1"/><path d="M14.6 1.4L9.4 8.2L11 9.4Z" fill="#dcdcdc"/><path d="M8.8 8.8C7.4 9.6 7.2 11.4 6.2 12.4C8.2 12.8 10.2 11.8 10.6 10.2Z" fill="#dcdcdc"/></svg>
<svg style="left:22px;top:138.36px;" width="3" height="3" viewBox="0 0 3 3"><path d="M3 0V3H0Z" fill="#c8c8c8"/></svg>
<svg style="left:7.0px;top:144.88px;" width="16" height="16" viewBox="0 0 16 16"><path d="M4.5 0.8V11.5H15.2M0.8 4.5H11.5V15.2" fill="none" stroke="#dcdcdc" stroke-width="1.2" stroke-width="1.5"/></svg>
<svg style="left:22px;top:157.88px;" width="3" height="3" viewBox="0 0 3 3"><path d="M3 0V3H0Z" fill="#c8c8c8"/></svg>
<svg style="left:7.0px;top:164.39999999999998px;" width="16" height="16" viewBox="0 0 16 16"><rect x="2.5" y="2.8" width="11" height="10.4" fill="none" stroke="#dcdcdc" stroke-width="1.2"/><path d="M2.5 2.8L13.5 13.2M13.5 2.8L2.5 13.2" fill="none" stroke="#dcdcdc" stroke-width="1.2" stroke-width="1"/></svg>
<svg style="left:7.0px;top:183.92000000000002px;" width="16" height="16" viewBox="0 0 16 16"><path d="M10 5L11.8 6.8L5 13.6L2.6 14.2L3.2 11.8Z" fill="none" stroke="#dcdcdc" stroke-width="1.2" stroke-width="1"/><path d="M9 3.6L13.2 7.8L14.4 6.6L13.3 5.5C15 4 15 2.6 14.2 1.8C13.4 1 12 1 10.5 2.7L9.4 1.6L8.2 2.8Z" fill="#dcdcdc"/></svg>
<svg style="left:22px;top:196.92000000000002px;" width="3" height="3" viewBox="0 0 3 3"><path d="M3 0V3H0Z" fill="#c8c8c8"/></svg>
<svg style="left:7.0px;top:203.44px;" width="16" height="16" viewBox="0 0 16 16"><g transform="rotate(-40 8 8)"><rect x="1" y="5" width="14" height="6.4" rx="1.6" fill="#dcdcdc"/><rect x="5.8" y="5.8" width="4.4" height="4.8" fill="#535353"/><circle cx="7" cy="7.2" r="0.6" fill="#dcdcdc"/><circle cx="9" cy="7.2" r="0.6" fill="#dcdcdc"/><circle cx="7" cy="9.2" r="0.6" fill="#dcdcdc"/><circle cx="9" cy="9.2" r="0.6" fill="#dcdcdc"/></g><path d="M2.2 6A4 4 0 0 1 8 2.4" fill="none" stroke="#dcdcdc" stroke-width="1.2" stroke-dasharray="1.4 1.1" stroke-width="0.9"/></svg>
<svg style="left:22px;top:216.44px;" width="3" height="3" viewBox="0 0 3 3"><path d="M3 0V3H0Z" fill="#c8c8c8"/></svg>
<svg style="left:7.0px;top:222.95999999999998px;" width="16" height="16" viewBox="0 0 16 16"><path d="M14.4 1.2L7.4 9L8.8 10.2Z" fill="#dcdcdc"/><path d="M6.6 9.6C5 10.4 5 12.4 3.2 13.8C5.8 14.4 8.4 13.4 8.6 11.2Z" fill="#dcdcdc"/></svg>
<svg style="left:22px;top:235.95999999999998px;" width="3" height="3" viewBox="0 0 3 3"><path d="M3 0V3H0Z" fill="#c8c8c8"/></svg>
<svg style="left:7.0px;top:242.48000000000002px;" width="16" height="16" viewBox="0 0 16 16"><circle cx="8" cy="4" r="2.7" fill="#dcdcdc"/><path d="M6.8 6H9.2L9.8 9.4H13V12H3V9.4H6.2Z" fill="#dcdcdc"/><rect x="3" y="13" width="10" height="1.3" fill="#dcdcdc"/></svg>
<svg style="left:22px;top:255.48000000000002px;" width="3" height="3" viewBox="0 0 3 3"><path d="M3 0V3H0Z" fill="#c8c8c8"/></svg>
<svg style="left:7.0px;top:262.0px;" width="16" height="16" viewBox="0 0 16 16"><path d="M14.4 1.6L8.4 8.6L9.8 9.8Z" fill="#dcdcdc"/><path d="M7.6 9.2C6 10 6 12 4.2 13.4C6.8 14 9.4 13 9.6 10.8Z" fill="#dcdcdc"/><path d="M2 6.4C3.6 3.6 6.6 3.2 8.6 4.6" fill="none" stroke="#dcdcdc" stroke-width="1.2" stroke-width="1"/><path d="M1.2 3.8L1.6 7.4L4.8 6Z" fill="#dcdcdc"/><path d="M11.6 9A4.6 4.6 0 0 1 10.4 13.6" fill="none" stroke="#dcdcdc" stroke-width="1.2" stroke-dasharray="1.2 1" stroke-width="0.8"/></svg>
<svg style="left:22px;top:275.0px;" width="3" height="3" viewBox="0 0 3 3"><path d="M3 0V3H0Z" fill="#c8c8c8"/></svg>
<svg style="left:7.0px;top:281.52px;" width="16" height="16" viewBox="0 0 16 16"><path d="M9.6 2.4L14 6.6L8 12.2H4.6L2.4 10Z" fill="#dcdcdc"/><path d="M3.6 9L6.8 12.2" stroke="#535353" stroke-width="1"/><path d="M3.5 13.4H14" fill="none" stroke="#dcdcdc" stroke-width="1.2" stroke-width="1"/></svg>
<svg style="left:22px;top:294.52px;" width="3" height="3" viewBox="0 0 3 3"><path d="M3 0V3H0Z" fill="#c8c8c8"/></svg>
<svg style="left:7.0px;top:301.04px;" width="16" height="16" viewBox="0 0 16 16"><defs><linearGradient id="tg" x1="0" y1="0" x2="1" y2="0.6"><stop offset="0" stop-color="#2a2a2a"/><stop offset="1" stop-color="#e0e0e0"/></linearGradient></defs><rect x="2" y="2.6" width="12" height="10.6" fill="url(#tg)" stroke="#dcdcdc" stroke-width="1.1"/></svg>
<svg style="left:22px;top:314.04px;" width="3" height="3" viewBox="0 0 3 3"><path d="M3 0V3H0Z" fill="#c8c8c8"/></svg>
<svg style="left:7.0px;top:320.56px;" width="16" height="16" viewBox="0 0 16 16"><path d="M8 1.4C9.6 5 12.2 7.4 12.2 10.2A4.2 4.2 0 0 1 3.8 10.2C3.8 7.4 6.4 5 8 1.4Z" fill="#dcdcdc"/></svg>
<svg style="left:22px;top:333.56px;" width="3" height="3" viewBox="0 0 3 3"><path d="M3 0V3H0Z" fill="#c8c8c8"/></svg>
<svg style="left:7.0px;top:340.08px;" width="16" height="16" viewBox="0 0 16 16"><path d="M2.2 6.6C3.4 3.6 7.4 3 10.4 4.4L14.4 9L13.2 12H10.4L8.8 10.4C7.6 11.8 5 11.8 3.6 10.4C2.4 9.4 1.8 8 2.2 6.6Z" fill="#dcdcdc"/><circle cx="5.4" cy="7.6" r="1.5" fill="#535353"/></svg>
<svg style="left:22px;top:353.08px;" width="3" height="3" viewBox="0 0 3 3"><path d="M3 0V3H0Z" fill="#c8c8c8"/></svg>
<svg style="left:7.0px;top:359.6px;" width="16" height="16" viewBox="0 0 16 16"><path d="M10.2 1.8L14.2 5.8L12.6 7.2L10.4 12L3 13.6L4.4 6.2L9 3.4Z" fill="none" stroke="#dcdcdc" stroke-width="1.2" stroke-width="1.1"/><path d="M3.4 13.2L7.6 9" fill="none" stroke="#dcdcdc" stroke-width="1.2" stroke-width="0.9"/><circle cx="8.2" cy="8.4" r="1.1" fill="#dcdcdc"/></svg>
<svg style="left:22px;top:372.6px;" width="3" height="3" viewBox="0 0 3 3"><path d="M3 0V3H0Z" fill="#c8c8c8"/></svg>
<svg style="left:7.0px;top:379.12px;" width="16" height="16" viewBox="0 0 16 16"><path d="M2.6 2.2H13.4V5.2H12.4C12.2 4 11.8 3.6 10.8 3.6H9V12C9 12.8 9.4 13 10.6 13.1V14H5.4V13.1C6.6 13 7 12.8 7 12V3.6H5.2C4.2 3.6 3.8 4 3.6 5.2H2.6Z" fill="#dcdcdc"/></svg>
<svg style="left:22px;top:392.12px;" width="3" height="3" viewBox="0 0 3 3"><path d="M3 0V3H0Z" fill="#c8c8c8"/></svg>
<svg style="left:7.0px;top:398.64px;" width="16" height="16" viewBox="0 0 16 16"><path d="M4.6 1.4V12.6L7.4 9.8L9.4 14.4L11.2 13.6L9.2 9.2H13Z" fill="#dcdcdc"/></svg>
<svg style="left:22px;top:411.64px;" width="3" height="3" viewBox="0 0 3 3"><path d="M3 0V3H0Z" fill="#c8c8c8"/></svg>
<svg style="left:7.0px;top:418.16px;" width="16" height="16" viewBox="0 0 16 16"><path d="M8.6 2C10 1.6 10.6 3 10 4.6C12 3.8 14.4 4.2 14 6C13.6 7.4 11.6 7.4 11.2 8.6C12.2 10 12.6 12.6 10.8 12.8C9.4 12.8 9 11 7.8 10.6C6.8 12 4.6 14 3 13C1.6 11.8 3.6 9.8 4 8.4C2.6 8 1.2 7 2 5.6C3 4.4 5 5.6 6.4 5.2C6.8 3.8 7.2 2.4 8.6 2Z" fill="none" stroke="#dcdcdc" stroke-width="1.2" stroke-width="1.1"/></svg>
<svg style="left:22px;top:431.16px;" width="3" height="3" viewBox="0 0 3 3"><path d="M3 0V3H0Z" fill="#c8c8c8"/></svg>
<svg style="left:7.0px;top:437.68px;" width="16" height="16" viewBox="0 0 16 16"><path d="M5 13.6C3.6 12 3.2 10.4 3.6 8.4L5 8.8V5.2C5 4.2 6.4 4.2 6.4 5.2V4C6.4 3 7.9 3 7.9 4V4.6C7.9 3.6 9.4 3.6 9.4 4.6V5.4C9.4 4.6 10.8 4.6 10.8 5.4V10.4C10.8 12 10.2 13 9.6 13.6Z" fill="#dcdcdc"/><path d="M3.4 4.4A6 6 0 0 1 12.6 3.2" fill="none" stroke="#dcdcdc" stroke-width="1.2" stroke-width="1"/><path d="M13.8 1.2L13.6 4.8L10.4 3.4Z" fill="#dcdcdc"/></svg>
<svg style="left:22px;top:450.68px;" width="3" height="3" viewBox="0 0 3 3"><path d="M3 0V3H0Z" fill="#c8c8c8"/></svg>
<svg style="left:7.0px;top:457.2px;" width="16" height="16" viewBox="0 0 16 16"><circle cx="6.6" cy="6.6" r="4.6" fill="none" stroke="#dcdcdc" stroke-width="1.2" stroke-width="1.3"/><path d="M10 10L14.2 14.2" stroke="#dcdcdc" stroke-width="2"/></svg>
<svg style="left:7.0px;top:476.72px;" width="16" height="16" viewBox="0 0 16 16"><path d="M13.6 0.8C16 4.6 14.8 10 10.6 12.4C7 14.2 3 14 0.4 12.4L0.9 10.6C4.8 10.6 7.6 9.6 9.6 7C10.8 5.4 11.4 3.4 11.6 1.2Z" fill="#f5dd0a"/></svg>
<svg style="left:22px;top:489.72px;" width="3" height="3" viewBox="0 0 3 3"><path d="M3 0V3H0Z" fill="#c8c8c8"/></svg>
<svg style="left:4px;top:498px;" width="10" height="10" viewBox="0 0 10 10"><rect x="3.5" y="3.5" width="6" height="6" fill="#fff" stroke="#ddd" stroke-width="0.6"/><rect x="0.5" y="0.5" width="6" height="6" fill="#000" stroke="#ddd" stroke-width="1"/></svg>
<svg style="left:16px;top:497.5px;" width="10" height="10" viewBox="0 0 10 10"><path d="M2.5 3.5H6.5V8" fill="none" stroke="#dcdcdc" stroke-width="1.1"/><path d="M0.5 3.5L3 1.2V5.8Z M6.5 9.8L4.2 7.2H8.8Z" fill="#dcdcdc"/></svg>
<div style="left:10.5px;top:518.5px;width:15px;height:14px;background:#ffffff;border:1px solid #3a3a3a;box-sizing:border-box;"></div>
<div style="left:3.5px;top:511px;width:14.5px;height:14px;background:#ffe100;border:1px solid #3a3a3a;box-sizing:border-box;outline:1px solid #d8d8d8;outline-offset:-2px;"></div>
<svg style="left:8px;top:540px;" width="14" height="11" viewBox="0 0 14 11"><rect x="0.6" y="0.6" width="12.8" height="9.8" fill="none" stroke="#dcdcdc" stroke-width="1.2" stroke-width="1.1"/><circle cx="7" cy="5.5" r="2.8" fill="none" stroke="#dcdcdc" stroke-width="1.2" stroke-dasharray="1.2 0.9" stroke-width="0.9"/></svg>
<svg style="left:7.5px;top:559px;" width="14" height="12" viewBox="0 0 14 12"><rect x="4.4" y="0.6" width="9" height="6.6" fill="none" stroke="#dcdcdc" stroke-width="1.2" stroke-width="1.1"/><rect x="0.6" y="3.8" width="9" height="6.6" fill="#535353" stroke="#dcdcdc" stroke-width="1.1"/></svg>
<svg style="left:22px;top:569.5px;" width="3" height="3" viewBox="0 0 3 3"><path d="M3 0V3H0Z" fill="#c8c8c8"/></svg>
<div style="left:1018px;top:44px;width:176px;height:9px;background:#3f3f3f;"></div>
<svg style="left:1183.5px;top:46.3px;" width="7" height="5" viewBox="0 0 7 5"><path d="M0.6 0.5L2.8 2.5L0.6 4.5M3.8 0.5L6 2.5L3.8 4.5" fill="none" stroke="#d8d8d8" stroke-width="1"/></svg>
<div style="left:1018px;top:53px;width:176px;height:21px;background:#424242;"></div>
<div style="left:1018px;top:53px;width:35px;height:21px;background:#535353;"></div>
<div class="t" style="transform:scaleX(0.8023);left:1024.4px;top:57.30px;height:12px;line-height:12px;font-size:8.5px;color:#f2f2f2;font-weight:700;">Layers</div>
<svg style="left:1182.5px;top:60.7px;" width="8" height="5" viewBox="0 0 8 5"><rect x="0" y="0" width="8" height="1" fill="#8c8c8c"/><rect x="0" y="1.4" width="8" height="1" fill="#8c8c8c"/><rect x="0" y="2.8" width="8" height="1" fill="#8c8c8c"/><rect x="0" y="4.2" width="8" height="0.8" fill="#8c8c8c"/></svg>
<div style="left:1018px;top:74px;width:176px;height:64px;background:#535353;"></div>
<div style="left:1021px;top:81px;width:64px;height:14.5px;background:#454545;border:1px solid #5c5c5c;border-radius:2px;box-sizing:border-box;"></div>
<svg style="left:1026px;top:83.5px;" width="9" height="9" viewBox="0 0 9 9"><circle cx="3.4" cy="3.4" r="2.6" fill="none" stroke="#e0e0e0" stroke-width="1.2"/><path d="M5.4 5.4L8.2 8.2" stroke="#e0e0e0" stroke-width="1.4"/></svg>
<div class="t" style="transform:scaleX(0.8345);left:1037.4px;top:82.30px;height:12px;line-height:12px;font-size:8.5px;color:#dcdcdc;">Kind</div>
<svg style="left:1077px;top:86.2px;" width="7" height="5" viewBox="0 0 7 5"><path d="M0.7 0.8L3.5 3.8L6.3 0.8" fill="none" stroke="#c4c4c4" stroke-width="1.1"/></svg>
<svg style="left:1094px;top:84px;" width="10" height="8" viewBox="0 0 10 8"><rect x="0.5" y="0.5" width="9" height="7" rx="1" fill="none" stroke="#dcdcdc" stroke-width="1"/><path d="M2 6L3.8 3.4L5.2 5L6.4 4L8 6Z" fill="#dcdcdc"/></svg>
<svg style="left:1112.5px;top:83.5px;" width="9" height="9" viewBox="0 0 9 9"><circle cx="4.5" cy="4.5" r="3.9" fill="none" stroke="#dcdcdc" stroke-width="1"/><path d="M1.7 7.3A3.9 3.9 0 0 0 7.3 1.7Z" fill="#dcdcdc"/></svg>
<svg style="left:1130.5px;top:83.5px;" width="9" height="9" viewBox="0 0 9 9"><path d="M0.6 0.8H8.4V3H7.6C7.5 2.2 7.2 1.9 6.4 1.9H5.4V7C5.4 7.6 5.7 7.7 6.5 7.8V8.5H2.5V7.8C3.3 7.7 3.6 7.6 3.6 7V1.9H2.6C1.8 1.9 1.5 2.2 1.4 3H0.6Z" fill="#dcdcdc"/></svg>
<svg style="left:1148.5px;top:83.5px;" width="9" height="9" viewBox="0 0 9 9"><rect x="1.5" y="1.5" width="6" height="6" fill="none" stroke="#dcdcdc" stroke-width="1"/><rect x="0" y="0" width="2.6" height="2.6" fill="#dcdcdc"/><rect x="6.4" y="0" width="2.6" height="2.6" fill="#dcdcdc"/><rect x="0" y="6.4" width="2.6" height="2.6" fill="#dcdcdc"/><rect x="6.4" y="6.4" width="2.6" height="2.6" fill="#dcdcdc"/></svg>
<svg style="left:1167.5px;top:83px;" width="9" height="10" viewBox="0 0 9 10"><path d="M2.5 3.6V0.6H6L8.4 3V9.4H5" fill="none" stroke="#dcdcdc" stroke-width="1"/><path d="M5.8 0.8V3.2H8.2" fill="none" stroke="#dcdcdc" stroke-width="0.9"/><rect x="0.4" y="4.6" width="4.6" height="4.8" fill="#dcdcdc"/></svg>
<div style="left:1184px;top:81px;width:8px;height:14px;background:#4a4a4a;border:1px solid #424242;border-radius:4px;box-sizing:border-box;"></div>
<div style="left:1185px;top:80.5px;width:6px;height:6px;background:#e2e2e2;border-radius:50%;"></div>
<div style="left:1018px;top:98px;width:176px;height:1px;background:#484848;"></div>
<div style="left:1021px;top:102px;width:99px;height:14.5px;background:#454545;border:1px solid #5c5c5c;border-radius:2px;box-sizing:border-box;"></div>
<div class="t" style="transform:scaleX(0.8867);left:1026.4px;top:103.30px;height:12px;line-height:12px;font-size:8.5px;color:#dcdcdc;">Normal</div>
<svg style="left:1111.5px;top:107.2px;" width="7" height="5" viewBox="0 0 7 5"><path d="M0.7 0.8L3.5 3.8L6.3 0.8" fill="none" stroke="#c4c4c4" stroke-width="1.1"/></svg>
<div class="t" style="transform:scaleX(0.8657);left:1125px;top:103.30px;height:12px;line-height:12px;font-size:8.5px;color:#d2d2d2;">Opacity:</div>
<div style="left:1155.5px;top:103px;width:35px;height:12px;background:#454545;border:1px solid #5c5c5c;border-radius:2px;box-sizing:border-box;"></div>
<div style="left:1179px;top:104px;width:1px;height:10px;background:#3b3b3b;"></div>
<div class="t" style="transform:scaleX(0.8414);left:1158px;top:103.30px;height:12px;line-height:12px;font-size:8.5px;color:#e8e8e8;">100%</div>
<svg style="left:1181.5px;top:107.2px;" width="7" height="5" viewBox="0 0 7 5"><path d="M0.7 0.8L3.5 3.8L6.3 0.8" fill="none" stroke="#c4c4c4" stroke-width="1.1"/></svg>
<div style="left:1018px;top:119px;width:176px;height:1px;background:#484848;"></div>
<div class="t" style="transform:scaleX(0.8609);left:1022.2px;top:124.20px;height:12px;line-height:12px;font-size:8.5px;color:#d2d2d2;">Lock:</div>
<svg style="left:1046.5px;top:125px;" width="9" height="9" viewBox="0 0 9 9"><rect x="0.4" y="0.4" width="8.2" height="8.2" fill="#555" stroke="#dcdcdc" stroke-width="0.8"/><rect x="0.8" y="0.8" width="2.5" height="2.5" fill="#e6e6e6"/><rect x="5.7" y="0.8" width="2.5" height="2.5" fill="#e6e6e6"/><rect x="3.3" y="3.3" width="2.4" height="2.4" fill="#e6e6e6"/><rect x="0.8" y="5.7" width="2.5" height="2.5" fill="#e6e6e6"/><rect x="5.7" y="5.7" width="2.5" height="2.5" fill="#e6e6e6"/></svg>
<svg style="left:1063px;top:124.5px;" width="10" height="10" viewBox="0 0 10 10"><path d="M9.8 0.2L4 5.6L5.8 7.2Z" fill="#dcdcdc"/><path d="M3.6 6C2.2 6.8 2.4 8.4 0.8 9.6C3.4 10.2 5.6 9.2 5.8 7.6Z" fill="#dcdcdc"/></svg>
<svg style="left:1079px;top:124.5px;" width="11" height="11" viewBox="0 0 11 11"><path d="M5.5 0.2L7.3 2.2H6.1V4.9H8.8V3.7L10.8 5.5L8.8 7.3V6.1H6.1V8.8H7.3L5.5 10.8L3.7 8.8H4.9V6.1H2.2V7.3L0.2 5.5L2.2 3.7V4.9H4.9V2.2H3.7Z" fill="#dcdcdc"/></svg>
<svg style="left:1095.5px;top:124.5px;" width="11" height="11" viewBox="0 0 11 11"><path d="M2.5 0V10.8M0 2.5H6M8.5 4.6V10.8M0 8.5H10.8" fill="none" stroke="#dcdcdc" stroke-width="1"/><path d="M6.6 0.8L9.6 2.6" stroke="#dcdcdc" stroke-width="0.9" stroke-dasharray="1.2 0.8"/><path d="M8.5 2.2V4" stroke="#dcdcdc" stroke-width="1"/></svg>
<svg style="left:1113px;top:124px;" width="9" height="11" viewBox="0 0 9 11"><path d="M2.3 5V3.2A2.2 2.2 0 0 1 6.7 3.2V5" fill="none" stroke="#dcdcdc" stroke-width="1.3"/><rect x="0.6" y="4.8" width="7.8" height="5.8" rx="0.6" fill="#dcdcdc"/><rect x="4" y="6.6" width="1" height="2" fill="#555"/></svg>
<div class="t" style="transform:scaleX(0.7934);left:1141.5px;top:124.20px;height:12px;line-height:12px;font-size:8.5px;color:#d2d2d2;">Fill:</div>
<div style="left:1155.5px;top:124px;width:35px;height:12px;background:#454545;border:1px solid #5c5c5c;border-radius:2px;box-sizing:border-box;"></div>
<div style="left:1179px;top:125px;width:1px;height:10px;background:#3b3b3b;"></div>
<div class="t" style="transform:scaleX(0.8414);left:1158px;top:124.20px;height:12px;line-height:12px;font-size:8.5px;color:#e8e8e8;">100%</div>
<svg style="left:1181.5px;top:128.2px;" width="7" height="5" viewBox="0 0 7 5"><path d="M0.7 0.8L3.5 3.8L6.3 0.8" fill="none" stroke="#c4c4c4" stroke-width="1.1"/></svg>
<div style="left:1018px;top:138.5px;width:176px;height:630px;background:#4d4d4d;"></div>
<div style="left:1018px;top:142px;width:21.5px;height:22.3px;background:#535353;"></div>
<div style="left:1040.5px;top:142px;width:141.5px;height:22.3px;background:#6b6b6b;"></div>
<div style="left:1018px;top:165.7px;width:21.5px;height:22.3px;background:#535353;"></div>
<div style="left:1040.5px;top:165.7px;width:141.5px;height:22.3px;background:#535353;"></div>
<div style="left:1018px;top:189.3px;width:21.5px;height:23px;background:#535353;"></div>
<div style="left:1040.5px;top:189.3px;width:141.5px;height:23px;background:#535353;"></div>
<svg style="left:1024.0px;top:150.8px;" width="11" height="7" viewBox="0 0 11 7"><path d="M0.3 3.5C2 0.6 4 0.2 5.5 0.2C7 0.2 9 0.6 10.7 3.5C9 6.4 7 6.8 5.5 6.8C4 6.8 2 6.4 0.3 3.5Z" fill="#e4e4e4"/><circle cx="5.5" cy="3.5" r="2.1" fill="#4a4a4a"/><circle cx="5.5" cy="3.5" r="0.9" fill="#e4e4e4"/></svg>
<svg style="left:1024.0px;top:174.6px;" width="11" height="7" viewBox="0 0 11 7"><path d="M0.3 3.5C2 0.6 4 0.2 5.5 0.2C7 0.2 9 0.6 10.7 3.5C9 6.4 7 6.8 5.5 6.8C4 6.8 2 6.4 0.3 3.5Z" fill="#e4e4e4"/><circle cx="5.5" cy="3.5" r="2.1" fill="#4a4a4a"/><circle cx="5.5" cy="3.5" r="0.9" fill="#e4e4e4"/></svg>
<svg style="left:1024.0px;top:198.7px;" width="11" height="7" viewBox="0 0 11 7"><path d="M0.3 3.5C2 0.6 4 0.2 5.5 0.2C7 0.2 9 0.6 10.7 3.5C9 6.4 7 6.8 5.5 6.8C4 6.8 2 6.4 0.3 3.5Z" fill="#e4e4e4"/><circle cx="5.5" cy="3.5" r="2.1" fill="#4a4a4a"/><circle cx="5.5" cy="3.5" r="0.9" fill="#e4e4e4"/></svg>
<svg style="left:1048.5px;top:151.5px;" width="4" height="6" viewBox="0 0 4 6"><path d="M3.5 0V3.4H0.8" fill="none" stroke="#dcdcdc" stroke-width="0.9"/><path d="M0 3.4L2 1.6V5.2Z" fill="#dcdcdc"/></svg>
<div style="left:1055.4px;top:145.3px;width:23.8px;height:16.8px;background:#0c2530;"><svg width="23.8" height="16.8" viewBox="0 0 24 17" style="left:0;top:0"><rect width="24" height="17" fill="#0b2230"/><path d="M6.5 9.1l0.8 -2.3" stroke="#1f6a7a" stroke-width="0.9" stroke-linecap="round"/><path d="M14.2 14.2l0.2 -2.3" stroke="#3f9a6a" stroke-width="1.1" stroke-linecap="round"/><path d="M11.4 13.2l0.1 -2.5" stroke="#3f9a6a" stroke-width="0.7" stroke-linecap="round"/><path d="M4.7 14.5l0.3 -1.2" stroke="#4fae8a" stroke-width="0.6" stroke-linecap="round"/><path d="M17.4 9.8l0.6 -1.1" stroke="#4fae8a" stroke-width="0.7" stroke-linecap="round"/><path d="M14.0 14.4l0.8 -2.7" stroke="#6fc08a" stroke-width="0.8" stroke-linecap="round"/><path d="M18.3 7.7l-2.6 -1.4" stroke="#2f7a56" stroke-width="0.6" stroke-linecap="round"/><path d="M11.9 5.1l-1.1 -2.5" stroke="#4fae8a" stroke-width="0.8" stroke-linecap="round"/><path d="M12.2 6.9l0.8 -2.2" stroke="#9fd8a0" stroke-width="0.7" stroke-linecap="round"/><path d="M8.6 14.3l1.6 -0.7" stroke="#9fd8a0" stroke-width="0.9" stroke-linecap="round"/><path d="M4.9 13.5l-2.7 -1.3" stroke="#9fd8a0" stroke-width="0.7" stroke-linecap="round"/><path d="M15.3 10.4l-1.6 -0.6" stroke="#2f7a56" stroke-width="0.6" stroke-linecap="round"/><path d="M19.4 15.4l2.4 -1.5" stroke="#6fc08a" stroke-width="1.0" stroke-linecap="round"/><path d="M4.0 10.0l-1.2 -1.6" stroke="#9fd8a0" stroke-width="0.8" stroke-linecap="round"/><path d="M20.0 15.2l-0.0 -3.2" stroke="#2e8aa0" stroke-width="0.6" stroke-linecap="round"/><path d="M3.8 9.0l-2.8 -1.4" stroke="#2e8aa0" stroke-width="0.9" stroke-linecap="round"/><path d="M4.8 2.1l-1.4 -1.1" stroke="#3f9a6a" stroke-width="1.0" stroke-linecap="round"/><path d="M9.4 7.9l-0.1 -2.5" stroke="#9fd8a0" stroke-width="0.9" stroke-linecap="round"/><path d="M3.7 15.1l-1.2 -1.3" stroke="#1f6a7a" stroke-width="1.0" stroke-linecap="round"/><path d="M6.5 5.7l-2.1 -0.9" stroke="#9fd8a0" stroke-width="0.8" stroke-linecap="round"/><path d="M18.1 15.3l0.9 -1.8" stroke="#9fd8a0" stroke-width="0.9" stroke-linecap="round"/><path d="M15.8 6.4l-1.3 -2.3" stroke="#2f7a56" stroke-width="0.9" stroke-linecap="round"/><path d="M14.7 5.7l-0.4 -1.5" stroke="#3f9a6a" stroke-width="0.8" stroke-linecap="round"/><path d="M9.3 9.8l0.9 -1.7" stroke="#4fae8a" stroke-width="1.0" stroke-linecap="round"/><path d="M12.0 10.7l1.0 -1.6" stroke="#1f6a7a" stroke-width="0.8" stroke-linecap="round"/><path d="M16.2 2.9l0.8 -1.7" stroke="#4fae8a" stroke-width="0.7" stroke-linecap="round"/><path d="M18.5 14.9l2.3 -1.4" stroke="#3f9a6a" stroke-width="1.0" stroke-linecap="round"/><path d="M11.0 4.7l1.8 -1.4" stroke="#3f9a6a" stroke-width="0.8" stroke-linecap="round"/><path d="M19.1 9.5l-1.5 -1.2" stroke="#4fae8a" stroke-width="0.9" stroke-linecap="round"/><path d="M18.4 6.3l1.4 -1.1" stroke="#4fae8a" stroke-width="1.0" stroke-linecap="round"/><path d="M11.3 10.4l1.1 -2.0" stroke="#2f7a56" stroke-width="1.1" stroke-linecap="round"/><path d="M4.8 1.6l-2.6 -1.4" stroke="#9fd8a0" stroke-width="0.8" stroke-linecap="round"/><path d="M17.2 13.2l-0.9 -2.1" stroke="#2e8aa0" stroke-width="0.9" stroke-linecap="round"/><path d="M20.2 13.6l-2.4 -2.0" stroke="#2f7a56" stroke-width="1.0" stroke-linecap="round"/><path d="M2.4 14.2l-2.6 -1.5" stroke="#6fc08a" stroke-width="0.9" stroke-linecap="round"/><path d="M7.8 10.8l-0.1 -2.0" stroke="#9fd8a0" stroke-width="0.7" stroke-linecap="round"/><path d="M4.1 15.1l-0.3 -2.8" stroke="#2f7a56" stroke-width="0.8" stroke-linecap="round"/><path d="M5.6 9.0l-1.1 -1.1" stroke="#4fae8a" stroke-width="0.7" stroke-linecap="round"/><path d="M20.2 3.3l-1.9 -1.1" stroke="#9fd8a0" stroke-width="1.0" stroke-linecap="round"/></svg></div>
<svg style="left:1053.6px;top:143.2px;" width="27.4" height="21" viewBox="0 0 27.4 21"><path d="M0.75 6V0.75H9M18.5 0.75H26.6V6M26.6 15V20.2H18.5M9 20.2H0.75V15" fill="none" stroke="#f0f0f0" stroke-width="1.5"/></svg>
<div class="t" style="transform:scaleX(0.8604);left:1085.8px;top:148.20px;height:12px;line-height:12px;font-size:8.5px;color:#eaeaea;">Layer 0</div>
<svg style="left:1052px;top:174.6px;" width="8.5" height="8" viewBox="0 0 8.5 8"><path d="M0.3 0.3H8.2V2.6H7.5C7.4 1.7 7.1 1.3 6.2 1.3H5.2V6.4C5.2 7 5.5 7.1 6.4 7.2V7.8H2.1V7.2C3 7.1 3.3 7 3.3 6.4V1.3H2.3C1.4 1.3 1.1 1.7 1 2.6H0.3Z" fill="#e2e2e2"/></svg>
<div class="t" style="transform:scaleX(1.0732);left:1073.4px;top:173.00px;height:10px;line-height:10px;font-size:6.5px;color:#e0e0e0;">BOOOOOOX&nbsp;</div>
<div style="left:1073.4px;top:181px;width:43.8px;height:0.9px;background:#dcdcdc;"></div>
<div style="left:1049.3px;top:195.9px;width:12px;height:11.8px;background:#ffffff;border:1px solid #3c3c3c;box-sizing:border-box;"></div>
<svg style="left:1069.5px;top:196.3px;" width="6" height="11" viewBox="0 0 6 11"><rect x="1" y="0.6" width="4" height="5" rx="1.8" fill="none" stroke="#dcdcdc" stroke-width="1"/><rect x="1" y="5.4" width="4" height="5" rx="1.8" fill="none" stroke="#dcdcdc" stroke-width="1"/><path d="M3 3.4V7.6" stroke="#dcdcdc" stroke-width="1"/></svg>
<div style="left:1078.5px;top:193.2px;width:24.3px;height:16.8px;background:#ffffff;border:1.3px solid #343434;border-radius:2px;box-sizing:border-box;"></div>
<div class="t" style="transform:scaleX(0.8222);left:1108.9px;top:197.00px;height:12px;line-height:12px;font-size:8.5px;color:#e4e4e4;">Color Fill 1</div>
<div style="left:1018px;top:768px;width:176px;height:1px;background:#444;"></div>
<div style="left:1018px;top:769px;width:176px;height:19px;background:#535353;"></div>
<svg style="left:1042.5px;top:775px;" width="11" height="6" viewBox="0 0 11 6"><circle cx="3" cy="3" r="2.3" fill="none" stroke="#8a8a8a" stroke-width="1.1"/><circle cx="8" cy="3" r="2.3" fill="none" stroke="#8a8a8a" stroke-width="1.1"/><path d="M3.6 3H7.4" stroke="#8a8a8a" stroke-width="1.1"/></svg>
<div class="t" style="left:1064px;top:771.50px;height:12px;line-height:12px;font-size:10.5px;color:#d4d4d4;font-family:'Liberation Serif',serif;font-weight:700;letter-spacing:-0.3px;"><i>fx</i></div>
<div style="left:1072px;top:782.5px;width:2px;height:1.5px;background:#d4d4d4;"></div>
<svg style="left:1083px;top:774px;" width="10" height="8" viewBox="0 0 10 8"><rect x="0" y="0" width="10" height="8" fill="#d4d4d4"/><circle cx="5" cy="4" r="2.2" fill="#535353"/></svg>
<svg style="left:1104.5px;top:773.5px;" width="9" height="9" viewBox="0 0 9 9"><circle cx="4.5" cy="4.5" r="3.9" fill="none" stroke="#d4d4d4" stroke-width="1"/><path d="M1.7 7.3A3.9 3.9 0 0 0 7.3 1.7Z" fill="#d4d4d4"/></svg>
<div style="left:1112.5px;top:782.5px;width:2px;height:1.5px;background:#d4d4d4;"></div>
<svg style="left:1124px;top:773.5px;" width="10" height="8.5" viewBox="0 0 10 8.5"><path d="M0 0.6H3.6L4.6 1.8H10V8.5H0Z" fill="#d4d4d4"/></svg>
<svg style="left:1144.5px;top:773.5px;" width="9.5" height="9.5" viewBox="0 0 9.5 9.5"><rect x="0.6" y="0.6" width="8.3" height="8.3" fill="none" stroke="#d4d4d4" stroke-width="1.1"/><path d="M4.75 2.6V6.9M2.6 4.75H6.9" stroke="#d4d4d4" stroke-width="1.3"/></svg>
<svg style="left:1165px;top:773px;" width="8.5" height="10.5" viewBox="0 0 8.5 10.5"><path d="M0 2H8.5M3 2V0.6H5.5V2" fill="none" stroke="#8a8a8a" stroke-width="1"/><path d="M0.8 3H7.7L7.2 10.3H1.3Z" fill="#8a8a8a"/></svg>
<div style="left:1194px;top:44px;width:3px;height:744px;background:#3a3a3a;"></div>
<div style="left:1197px;top:44px;width:27px;height:744px;background:#535353;"></div>
<div style="left:1224px;top:44px;width:2px;height:744px;background:#3a3a3a;"></div>
<div style="left:1197px;top:44px;width:27px;height:9px;background:#3f3f3f;"></div>
<svg style="left:1214.2px;top:46.3px;" width="7" height="5" viewBox="0 0 7 5"><path d="M2.8 0.5L0.6 2.5L2.8 4.5M6 0.5L3.8 2.5L6 4.5" fill="none" stroke="#d8d8d8" stroke-width="1"/></svg>
<div style="left:1197px;top:104.3px;width:27px;height:1.3px;background:#3d3d3d;"></div>
<div style="left:1197px;top:156px;width:27px;height:1.3px;background:#3d3d3d;"></div>
<div style="left:1197px;top:208.5px;width:27px;height:1.3px;background:#3d3d3d;"></div>
<div style="left:1197px;top:238.6px;width:27px;height:1.3px;background:#3d3d3d;"></div>
<div style="left:1197px;top:269.6px;width:27px;height:1.3px;background:#3d3d3d;"></div>
<div style="left:1197px;top:321.5px;width:27px;height:1.3px;background:#3d3d3d;"></div>
<div style="left:1204px;top:55.5px;width:13px;height:2px;background:#474747;"></div>
<div style="left:1204px;top:107.5px;width:13px;height:2px;background:#474747;"></div>
<div style="left:1204px;top:159.5px;width:13px;height:2px;background:#474747;"></div>
<div style="left:1204px;top:211.5px;width:13px;height:2px;background:#474747;"></div>
<div style="left:1204px;top:241.5px;width:13px;height:2px;background:#474747;"></div>
<div style="left:1204px;top:272.5px;width:13px;height:2px;background:#474747;"></div>
<svg style="left:1202px;top:62.5px;" width="18" height="14" viewBox="0 0 18 14"><path d="M0.5 1.5H4.5M0.5 3.8H4.5M0.5 6.1H4.5" stroke="#dedede" stroke-width="1" stroke-dasharray="1 0.7"/><path d="M17.4 0.6L15.4 0.2L9 7.4L11.4 9.6Z" fill="#dedede"/><path d="M8.4 8C6.4 8.8 6.8 11 4.6 12.8C8 13.8 11.2 12.4 11.6 9.8Z" fill="#dedede"/></svg>
<svg style="left:1202.5px;top:84.5px;" width="17" height="13" viewBox="0 0 17 13"><path d="M0.2 3C2.4 0.2 5 0.2 7 2H16V3.8H7C5 5.8 2.4 5.8 0.2 3Z" fill="#dedede"/><path d="M1.2 9H9C10.8 6.4 13.8 6 16.2 6.6L14.6 13C12.4 13.2 10.2 12.4 9 10.8H1.2Z" fill="#dedede"/></svg>
<div class="t" style="left:1202.8px;top:114.30px;height:16px;line-height:16px;font-size:14.5px;color:#dedede;">A</div>
<div style="left:1214.6px;top:114.6px;width:1px;height:14.5px;background:#dedede;"></div>
<svg style="left:1205px;top:137px;" width="10" height="12" viewBox="0 0 10 12"><path d="M7.2 0.4H3.6A3.2 3.2 0 0 0 3.6 6.8H4.6V11.6H5.9V1.6H7.2V11.6H8.5V1.6H9.6V0.4Z" fill="#dedede"/></svg>
<svg style="left:1208px;top:166px;" width="10" height="12" viewBox="0 0 10 12"><path d="M7.2 0.4H3.6A3.2 3.2 0 0 0 3.6 6.8H4.6V11.6H5.9V1.6H7.2V11.6H8.5V1.6H9.6V0.4Z" fill="#dedede"/></svg>
<svg style="left:1202.5px;top:174px;" width="8" height="8" viewBox="0 0 8 8"><rect x="2.6" y="2.6" width="4.8" height="4.8" fill="none" stroke="#dedede" stroke-width="0.9"/><rect x="0.5" y="0.5" width="4.8" height="4.8" fill="#535353" stroke="#dedede" stroke-width="0.9"/></svg>
<div class="t" style="left:1209.2px;top:185.50px;height:14px;line-height:14px;font-size:13px;color:#dedede;">A</div>
<svg style="left:1202.5px;top:194.5px;" width="8" height="8" viewBox="0 0 8 8"><rect x="2.6" y="2.6" width="4.8" height="4.8" fill="none" stroke="#dedede" stroke-width="0.9"/><rect x="0.5" y="0.5" width="4.8" height="4.8" fill="#535353" stroke="#dedede" stroke-width="0.9"/></svg>
<svg style="left:1201.5px;top:217.5px;" width="18" height="14" viewBox="0 0 18 14"><path d="M0.5 1.5H4.5M0.5 3.8H4.5M0.5 6.1H4.5" stroke="#dedede" stroke-width="1" stroke-dasharray="1 0.7"/><circle cx="11" cy="3.4" r="2.6" fill="#dedede"/><path d="M9.8 5.4H12.2L12.8 8.6H16V11H6V8.6H9.2Z" fill="#dedede"/><rect x="6" y="12" width="10" height="1.3" fill="#dedede"/></svg>
<svg style="left:1204px;top:248.5px;" width="13" height="14" viewBox="0 0 13 14"><path d="M6.5 0.6L12.4 3.6V10.4L6.5 13.4L0.6 10.4V3.6Z" fill="none" stroke="#dedede" stroke-width="1"/><path d="M0.6 3.6L6.5 6.6L12.4 3.6M6.5 6.6V13.4" fill="none" stroke="#dedede" stroke-width="1"/><path d="M1.4 5L5.8 7.2V12.2L1.4 10Z" fill="#9a9a9a"/></svg>
<svg style="left:1204px;top:280.5px;" width="13" height="13" viewBox="0 0 13 13"><circle cx="6.5" cy="6.5" r="5.7" fill="none" stroke="#dedede" stroke-width="1.1"/><rect x="5.9" y="5.4" width="1.3" height="4.4" fill="#dedede"/><rect x="5.9" y="3.2" width="1.3" height="1.4" fill="#dedede"/></svg>
<svg style="left:1206px;top:303.5px;" width="11" height="11" viewBox="0 0 11 11"><path d="M0.4 0.4L10.6 5.5L0.4 10.6Z" fill="#dedede"/></svg>
<div style="left:1226px;top:44px;width:214px;height:9px;background:#3f3f3f;"></div>
<svg style="left:1428.5px;top:46.3px;" width="7" height="5" viewBox="0 0 7 5"><path d="M0.6 0.5L2.8 2.5L0.6 4.5M3.8 0.5L6 2.5L3.8 4.5" fill="none" stroke="#d8d8d8" stroke-width="1"/></svg>
<div style="left:1226px;top:53px;width:214px;height:21px;background:#424242;"></div>
<div style="left:1274px;top:53px;width:1px;height:21px;background:#3b3b3b;"></div>
<div style="left:1275px;top:53px;width:50px;height:21px;background:#535353;"></div>
<div class="t" style="transform:scaleX(0.9026);left:1232.6px;top:56.80px;height:12px;line-height:12px;font-size:8.5px;color:#a9a9a9;font-weight:700;">Navigator</div>
<div class="t" style="transform:scaleX(0.8800);left:1281.6px;top:56.80px;height:12px;line-height:12px;font-size:8.5px;color:#f2f2f2;font-weight:700;">Histogram</div>
<svg style="left:1428px;top:60.7px;" width="8" height="5" viewBox="0 0 8 5"><rect x="0" y="0" width="8" height="1" fill="#8c8c8c"/><rect x="0" y="1.4" width="8" height="1" fill="#8c8c8c"/><rect x="0" y="2.8" width="8" height="1" fill="#8c8c8c"/><rect x="0" y="4.2" width="8" height="0.8" fill="#8c8c8c"/></svg>
<div style="left:1226px;top:74px;width:214px;height:72px;background:#535353;"></div>
<div style="left:1229.6px;top:81.4px;width:147.8px;height:62.6px;background:#464646;border:1px solid #4f4f4f;box-sizing:border-box;"></div>
<div style="left:1375.2px;top:82.6px;width:1.1px;height:60.4px;background:#c6c6c6;"></div>
<svg style="left:1364px;top:87.5px;" width="10" height="9.5" viewBox="0 0 10 9.5"><path d="M5 0.3L9.8 9.2H0.2Z" fill="#e6e6e6"/><rect x="4.4" y="3" width="1.2" height="3.6" fill="#444"/><rect x="4.4" y="7.2" width="1.2" height="1.1" fill="#444"/></svg>
<svg style="left:1231px;top:133px;" width="60" height="10" viewBox="0 0 60 10"><path d="M2.4 10L3.2 3.5L4.2 8.4L7 9L12 9.2L17 8.6L22 7.6L26 8.2L32 9.2L40 9.7L44 10Z" fill="#e4e4e4"/></svg>
<div style="left:1226px;top:146px;width:214px;height:2.5px;background:#3a3a3a;"></div>
<div style="left:1226px;top:148.5px;width:214px;height:21.5px;background:#424242;"></div>
<div style="left:1226px;top:148.5px;width:45px;height:21.5px;background:#535353;"></div>
<div style="left:1303.5px;top:148.5px;width:1px;height:21.5px;background:#3b3b3b;"></div>
<div style="left:1342.5px;top:148.5px;width:1px;height:21.5px;background:#3b3b3b;"></div>
<div class="t" style="transform:scaleX(0.8363);left:1232.6px;top:152.00px;height:12px;line-height:12px;font-size:8.5px;color:#f2f2f2;font-weight:700;">Channels</div>
<div class="t" style="transform:scaleX(0.8421);left:1277px;top:152.00px;height:12px;line-height:12px;font-size:8.5px;color:#a9a9a9;font-weight:700;">Paths</div>
<div class="t" style="transform:scaleX(0.8977);left:1310px;top:152.00px;height:12px;line-height:12px;font-size:8.5px;color:#a9a9a9;font-weight:700;">History</div>
<svg style="left:1428px;top:156px;" width="8" height="5" viewBox="0 0 8 5"><rect x="0" y="0" width="8" height="1" fill="#8c8c8c"/><rect x="0" y="1.4" width="8" height="1" fill="#8c8c8c"/><rect x="0" y="2.8" width="8" height="1" fill="#8c8c8c"/><rect x="0" y="4.2" width="8" height="0.8" fill="#8c8c8c"/></svg>
<div style="left:1226px;top:170px;width:214px;height:278.5px;background:#4d4d4d;"></div>
<div style="left:1226px;top:173px;width:201px;height:32px;background:#6b6b6b;"></div>
<div style="left:1243.3px;top:173px;width:1px;height:32px;background:#626262;"></div>
<svg style="left:1230.0px;top:185.5px;" width="11" height="7" viewBox="0 0 11 7"><path d="M0.3 3.5C2 0.6 4 0.2 5.5 0.2C7 0.2 9 0.6 10.7 3.5C9 6.4 7 6.8 5.5 6.8C4 6.8 2 6.4 0.3 3.5Z" fill="#e4e4e4"/><circle cx="5.5" cy="3.5" r="2.1" fill="#4a4a4a"/><circle cx="5.5" cy="3.5" r="0.9" fill="#e4e4e4"/></svg>
<div style="left:1245px;top:174.8px;width:42.6px;height:28.6px;background:#ffffff;border:1px solid #2e2e2e;box-sizing:border-box;"><svg width="40.6" height="26.6" viewBox="0 0 42 28" style="left:0;top:0"><path d="M4.5 11L3.5 16H5.9C7.1 15.4 6.9 13.4 5.1 13.4Z" fill="#1f6b3a"/><ellipse cx="9.3" cy="13.6" rx="1.7" ry="2.4" transform="rotate(18 9.3 13.6)" fill="#111"/><ellipse cx="13.8" cy="13.6" rx="1.7" ry="2.4" transform="rotate(18 13.8 13.6)" fill="#1f6b3a"/><ellipse cx="18.3" cy="13.6" rx="1.7" ry="2.4" transform="rotate(18 18.3 13.6)" fill="#111"/><ellipse cx="22.8" cy="13.6" rx="1.7" ry="2.4" transform="rotate(18 22.8 13.6)" fill="#1f6b3a"/><ellipse cx="27.3" cy="13.6" rx="1.7" ry="2.4" transform="rotate(18 27.3 13.6)" fill="#111"/><ellipse cx="31.8" cy="13.6" rx="1.7" ry="2.4" transform="rotate(18 31.8 13.6)" fill="#1f6b3a"/><path d="M35 11.4L36.4 13.4L34 16M38 11.4L35.4 16" stroke="#111" stroke-width="1.1" fill="none"/><path d="M2 13.7H40" stroke="#fff" stroke-width="0.5"/><path d="M2.5 13.5H39.5" stroke="#222" stroke-width="0.4"/></svg></div>
<div class="t" style="transform:scaleX(0.7328);left:1292px;top:182.50px;height:12px;line-height:12px;font-size:8.5px;color:#ececec;">RGB</div>
<div class="t" style="transform:scaleX(0.8987);left:1394.9px;top:182.50px;height:12px;line-height:12px;font-size:8.5px;color:#ececec;">Ctrl+2</div>
<div style="left:1226px;top:206px;width:201px;height:32px;background:#6b6b6b;"></div>
<div style="left:1243.3px;top:206px;width:1px;height:32px;background:#626262;"></div>
<svg style="left:1230.0px;top:218.5px;" width="11" height="7" viewBox="0 0 11 7"><path d="M0.3 3.5C2 0.6 4 0.2 5.5 0.2C7 0.2 9 0.6 10.7 3.5C9 6.4 7 6.8 5.5 6.8C4 6.8 2 6.4 0.3 3.5Z" fill="#e4e4e4"/><circle cx="5.5" cy="3.5" r="2.1" fill="#4a4a4a"/><circle cx="5.5" cy="3.5" r="0.9" fill="#e4e4e4"/></svg>
<div style="left:1245px;top:207.8px;width:42.6px;height:28.6px;background:#ffffff;border:1px solid #2e2e2e;box-sizing:border-box;"><svg width="40.6" height="26.6" viewBox="0 0 42 28" style="left:0;top:0"><path d="M4.5 11L3.5 16H5.9C7.1 15.4 6.9 13.4 5.1 13.4Z" fill="#111"/><ellipse cx="9.3" cy="13.6" rx="1.7" ry="2.4" transform="rotate(18 9.3 13.6)" fill="#111"/><ellipse cx="13.8" cy="13.6" rx="1.7" ry="2.4" transform="rotate(18 13.8 13.6)" fill="#111"/><ellipse cx="18.3" cy="13.6" rx="1.7" ry="2.4" transform="rotate(18 18.3 13.6)" fill="#111"/><ellipse cx="22.8" cy="13.6" rx="1.7" ry="2.4" transform="rotate(18 22.8 13.6)" fill="#111"/><ellipse cx="27.3" cy="13.6" rx="1.7" ry="2.4" transform="rotate(18 27.3 13.6)" fill="#111"/><ellipse cx="31.8" cy="13.6" rx="1.7" ry="2.4" transform="rotate(18 31.8 13.6)" fill="#111"/><path d="M35 11.4L36.4 13.4L34 16M38 11.4L35.4 16" stroke="#111" stroke-width="1.1" fill="none"/><path d="M2 13.7H40" stroke="#fff" stroke-width="0.5"/><path d="M2.5 13.5H39.5" stroke="#222" stroke-width="0.4"/></svg></div>
<div class="t" style="transform:scaleX(0.7503);left:1292px;top:215.50px;height:12px;line-height:12px;font-size:8.5px;color:#ececec;">Red</div>
<div class="t" style="transform:scaleX(0.8987);left:1394.9px;top:215.50px;height:12px;line-height:12px;font-size:8.5px;color:#ececec;">Ctrl+3</div>
<div style="left:1226px;top:239px;width:201px;height:32px;background:#6b6b6b;"></div>
<div style="left:1243.3px;top:239px;width:1px;height:32px;background:#626262;"></div>
<svg style="left:1230.0px;top:251.5px;" width="11" height="7" viewBox="0 0 11 7"><path d="M0.3 3.5C2 0.6 4 0.2 5.5 0.2C7 0.2 9 0.6 10.7 3.5C9 6.4 7 6.8 5.5 6.8C4 6.8 2 6.4 0.3 3.5Z" fill="#e4e4e4"/><circle cx="5.5" cy="3.5" r="2.1" fill="#4a4a4a"/><circle cx="5.5" cy="3.5" r="0.9" fill="#e4e4e4"/></svg>
<div style="left:1245px;top:240.8px;width:42.6px;height:28.6px;background:#ffffff;border:1px solid #2e2e2e;box-sizing:border-box;"><svg width="40.6" height="26.6" viewBox="0 0 42 28" style="left:0;top:0"><path d="M4.5 11L3.5 16H5.9C7.1 15.4 6.9 13.4 5.1 13.4Z" fill="#111"/><ellipse cx="9.3" cy="13.6" rx="1.7" ry="2.4" transform="rotate(18 9.3 13.6)" fill="#111"/><ellipse cx="13.8" cy="13.6" rx="1.7" ry="2.4" transform="rotate(18 13.8 13.6)" fill="#111"/><ellipse cx="18.3" cy="13.6" rx="1.7" ry="2.4" transform="rotate(18 18.3 13.6)" fill="#111"/><ellipse cx="22.8" cy="13.6" rx="1.7" ry="2.4" transform="rotate(18 22.8 13.6)" fill="#111"/><ellipse cx="27.3" cy="13.6" rx="1.7" ry="2.4" transform="rotate(18 27.3 13.6)" fill="#111"/><ellipse cx="31.8" cy="13.6" rx="1.7" ry="2.4" transform="rotate(18 31.8 13.6)" fill="#111"/><path d="M35 11.4L36.4 13.4L34 16M38 11.4L35.4 16" stroke="#111" stroke-width="1.1" fill="none"/><path d="M2 13.7H40" stroke="#fff" stroke-width="0.5"/><path d="M2.5 13.5H39.5" stroke="#222" stroke-width="0.4"/></svg></div>
<div class="t" style="transform:scaleX(0.8254);left:1292px;top:248.50px;height:12px;line-height:12px;font-size:8.5px;color:#ececec;">Green</div>
<div class="t" style="transform:scaleX(0.8987);left:1394.9px;top:248.50px;height:12px;line-height:12px;font-size:8.5px;color:#ececec;">Ctrl+4</div>
<div style="left:1226px;top:272px;width:201px;height:32px;background:#6b6b6b;"></div>
<div style="left:1243.3px;top:272px;width:1px;height:32px;background:#626262;"></div>
<svg style="left:1230.0px;top:284.5px;" width="11" height="7" viewBox="0 0 11 7"><path d="M0.3 3.5C2 0.6 4 0.2 5.5 0.2C7 0.2 9 0.6 10.7 3.5C9 6.4 7 6.8 5.5 6.8C4 6.8 2 6.4 0.3 3.5Z" fill="#e4e4e4"/><circle cx="5.5" cy="3.5" r="2.1" fill="#4a4a4a"/><circle cx="5.5" cy="3.5" r="0.9" fill="#e4e4e4"/></svg>
<div style="left:1245px;top:273.8px;width:42.6px;height:28.6px;background:#ffffff;border:1px solid #2e2e2e;box-sizing:border-box;"><svg width="40.6" height="26.6" viewBox="0 0 42 28" style="left:0;top:0"><path d="M4.5 11L3.5 16H5.9C7.1 15.4 6.9 13.4 5.1 13.4Z" fill="#111"/><ellipse cx="9.3" cy="13.6" rx="1.7" ry="2.4" transform="rotate(18 9.3 13.6)" fill="#111"/><ellipse cx="13.8" cy="13.6" rx="1.7" ry="2.4" transform="rotate(18 13.8 13.6)" fill="#111"/><ellipse cx="18.3" cy="13.6" rx="1.7" ry="2.4" transform="rotate(18 18.3 13.6)" fill="#111"/><ellipse cx="22.8" cy="13.6" rx="1.7" ry="2.4" transform="rotate(18 22.8 13.6)" fill="#111"/><ellipse cx="27.3" cy="13.6" rx="1.7" ry="2.4" transform="rotate(18 27.3 13.6)" fill="#111"/><ellipse cx="31.8" cy="13.6" rx="1.7" ry="2.4" transform="rotate(18 31.8 13.6)" fill="#111"/><path d="M35 11.4L36.4 13.4L34 16M38 11.4L35.4 16" stroke="#111" stroke-width="1.1" fill="none"/><path d="M2 13.7H40" stroke="#fff" stroke-width="0.5"/><path d="M2.5 13.5H39.5" stroke="#222" stroke-width="0.4"/></svg></div>
<div class="t" style="transform:scaleX(0.8169);left:1292px;top:281.50px;height:12px;line-height:12px;font-size:8.5px;color:#ececec;">Blue</div>
<div class="t" style="transform:scaleX(0.8987);left:1394.9px;top:281.50px;height:12px;line-height:12px;font-size:8.5px;color:#ececec;">Ctrl+5</div>
<div style="left:1226px;top:448.5px;width:214px;height:1px;background:#444;"></div>
<div style="left:1226px;top:449.5px;width:214px;height:16px;background:#535353;"></div>
<svg style="left:1342.5px;top:452.5px;" width="9.5" height="9.5" viewBox="0 0 9.5 9.5"><circle cx="4.75" cy="4.75" r="3.9" fill="none" stroke="#d4d4d4" stroke-width="1" stroke-dasharray="1.3 1.1"/></svg>
<svg style="left:1363px;top:453px;" width="10.5" height="8.5" viewBox="0 0 10.5 8.5"><rect width="10.5" height="8.5" fill="#8a8a8a"/><circle cx="5.25" cy="4.25" r="2.3" fill="#535353"/></svg>
<svg style="left:1388px;top:452.5px;" width="9.5" height="9.5" viewBox="0 0 9.5 9.5"><rect x="0.6" y="0.6" width="8.3" height="8.3" fill="none" stroke="#d4d4d4" stroke-width="1.1"/><path d="M4.75 2.6V6.9M2.6 4.75H6.9" stroke="#d4d4d4" stroke-width="1.3"/></svg>
<svg style="left:1410px;top:452.5px;" width="8.5" height="10.5" viewBox="0 0 8.5 10.5"><path d="M0 2H8.5M3 2V0.6H5.5V2" fill="none" stroke="#8a8a8a" stroke-width="1"/><path d="M0.8 3H7.7L7.2 10.3H1.3Z" fill="#8a8a8a"/></svg>
<div style="left:1226px;top:465.5px;width:214px;height:2.5px;background:#3a3a3a;"></div>
<div style="left:1226px;top:468px;width:214px;height:21.5px;background:#424242;"></div>
<div style="left:1226px;top:468px;width:50px;height:21.5px;background:#535353;"></div>
<div style="left:1333px;top:468px;width:1px;height:21.5px;background:#3b3b3b;"></div>
<div style="left:1365.3px;top:468px;width:1px;height:21.5px;background:#3b3b3b;"></div>
<div style="left:1411px;top:468px;width:1px;height:21.5px;background:#3b3b3b;"></div>
<div class="t" style="transform:scaleX(0.8895);left:1232.6px;top:472.60px;height:12px;line-height:12px;font-size:8.5px;color:#f2f2f2;font-weight:700;">Properties</div>
<div class="t" style="transform:scaleX(0.8760);left:1282.3px;top:472.60px;height:12px;line-height:12px;font-size:8.5px;color:#a9a9a9;font-weight:700;">Adjustments</div>
<div class="t" style="transform:scaleX(0.8783);left:1339.9px;top:472.60px;height:12px;line-height:12px;font-size:8.5px;color:#a9a9a9;font-weight:700;">Color</div>
<div class="t" style="transform:scaleX(0.8414);left:1372.2px;top:472.60px;height:12px;line-height:12px;font-size:8.5px;color:#a9a9a9;font-weight:700;">Swatches</div>
<svg style="left:1428px;top:476.5px;" width="8" height="5" viewBox="0 0 8 5"><rect x="0" y="0" width="8" height="1" fill="#8c8c8c"/><rect x="0" y="1.4" width="8" height="1" fill="#8c8c8c"/><rect x="0" y="2.8" width="8" height="1" fill="#8c8c8c"/><rect x="0" y="4.2" width="8" height="0.8" fill="#8c8c8c"/></svg>
<div style="left:1226px;top:489.5px;width:214px;height:298.5px;background:#535353;"></div>
<div style="left:1427px;top:516px;width:13px;height:252px;background:#4a4a4a;"></div>
<div style="left:1234.4px;top:494.6px;width:16.6px;height:16.6px;background:#424242;border:1px solid #3a3a3a;border-radius:2px;box-sizing:border-box;"></div>
<svg style="left:1238px;top:498.8px;" width="10" height="8.5" viewBox="0 0 10 8.5"><rect x="0.5" y="0.5" width="9" height="7.5" fill="none" stroke="#e0e0e0" stroke-width="1"/><path d="M1.6 6.8L3.8 3.8L5.4 5.6L6.6 4.6L8.4 6.8Z" fill="#e0e0e0"/><circle cx="7" cy="2.6" r="0.8" fill="#e0e0e0"/></svg>
<div class="t" style="transform:scaleX(0.8273);left:1255.7px;top:498.00px;height:12px;line-height:12px;font-size:8.5px;color:#d2d2d2;">Pixel Layer</div>
<div style="left:1226px;top:515.5px;width:214px;height:1px;background:#474747;"></div>
<svg style="left:1231.5px;top:523.8px;" width="7" height="5" viewBox="0 0 7 5"><path d="M0.6 0.8L3.5 3.8L6.4 0.8" fill="none" stroke="#c8c8c8" stroke-width="1"/></svg>
<div class="t" style="transform:scaleX(0.9212);left:1243.3px;top:520.20px;height:12px;line-height:12px;font-size:8.5px;color:#f0f0f0;font-weight:700;">Transform</div>
<div style="left:1232.6px;top:545px;width:18.4px;height:18.5px;background:#424242;border:1px solid #3a3a3a;border-radius:2px;box-sizing:border-box;"></div>
<svg style="left:1239px;top:548.8px;" width="6" height="11" viewBox="0 0 6 11"><rect x="1" y="0.6" width="4" height="5" rx="1.8" fill="none" stroke="#e0e0e0" stroke-width="1"/><rect x="1" y="5.4" width="4" height="5" rx="1.8" fill="none" stroke="#e0e0e0" stroke-width="1"/><path d="M3 3.4V7.6" stroke="#e0e0e0" stroke-width="1"/></svg>
<div class="t" style="transform:scaleX(0.8218);left:1259.2px;top:538.80px;height:12px;line-height:12px;font-size:8.5px;color:#d2d2d2;">W</div>
<div style="left:1270.6px;top:538.6px;width:36.8px;height:12px;background:#454545;border:1px solid #686868;border-radius:2px;box-sizing:border-box;"></div>
<div class="t" style="transform:scaleX(0.8337);left:1272.7px;top:538.80px;height:12px;line-height:12px;font-size:8.5px;color:#ececec;">212.23 cm</div>
<div class="t" style="transform:scaleX(0.8463);left:1326.7px;top:538.80px;height:12px;line-height:12px;font-size:8.5px;color:#d2d2d2;">X</div>
<div style="left:1335.6px;top:538.6px;width:37.4px;height:12px;background:#454545;border:1px solid #686868;border-radius:2px;box-sizing:border-box;"></div>
<div class="t" style="transform:scaleX(0.8685);left:1338px;top:538.80px;height:12px;line-height:12px;font-size:8.5px;color:#ececec;">0 cm</div>
<div class="t" style="transform:scaleX(0.8142);left:1260.5px;top:557.90px;height:12px;line-height:12px;font-size:8.5px;color:#d2d2d2;">H</div>
<div style="left:1270.6px;top:557.7px;width:36.8px;height:12px;background:#454545;border:1px solid #686868;border-radius:2px;box-sizing:border-box;"></div>
<div class="t" style="transform:scaleX(0.8337);left:1272.7px;top:557.90px;height:12px;line-height:12px;font-size:8.5px;color:#ececec;">141.68 cm</div>
<div class="t" style="transform:scaleX(0.8463);left:1326.7px;top:557.90px;height:12px;line-height:12px;font-size:8.5px;color:#d2d2d2;">Y</div>
<div style="left:1335.6px;top:557.7px;width:37.4px;height:12px;background:#454545;border:1px solid #686868;border-radius:2px;box-sizing:border-box;"></div>
<div class="t" style="transform:scaleX(0.8685);left:1338px;top:557.90px;height:12px;line-height:12px;font-size:8.5px;color:#ececec;">0 cm</div>
<svg style="left:1257px;top:581.5px;" width="10" height="8" viewBox="0 0 10 8"><path d="M8 0.6L0.8 7.2H9.6" fill="none" stroke="#dcdcdc" stroke-width="1"/><path d="M4.6 3.8A4.4 4.4 0 0 1 6.2 7.2" fill="none" stroke="#dcdcdc" stroke-width="0.9"/></svg>
<div style="left:1271px;top:579.6px;width:36.4px;height:12px;background:#454545;border:1px solid #686868;border-radius:2px;box-sizing:border-box;"></div>
<div style="left:1297px;top:580.6px;width:1px;height:10px;background:#3b3b3b;"></div>
<div class="t" style="transform:scaleX(0.8420);left:1273px;top:579.80px;height:12px;line-height:12px;font-size:8.5px;color:#ececec;">0.00°</div>
<svg style="left:1298.8px;top:583.6px;" width="7" height="5" viewBox="0 0 7 5"><path d="M0.7 0.8L3.5 3.8L6.3 0.8" fill="none" stroke="#c4c4c4" stroke-width="1.1"/></svg>
<svg style="left:1335.5px;top:579.5px;" width="13.5" height="11.5" viewBox="0 0 13.5 11.5"><path d="M0.6 1.4L4.6 5.75L0.6 10.1Z" fill="none" stroke="#dcdcdc" stroke-width="0.9"/><path d="M12.9 1.4L8.9 5.75L12.9 10.1Z" fill="#dcdcdc"/><path d="M6.75 0V11.5" stroke="#dcdcdc" stroke-width="1"/></svg>
<svg style="left:1357.5px;top:578.8px;" width="11.5" height="13.5" viewBox="0 0 11.5 13.5"><path d="M1.4 0.6L5.75 4.6L10.1 0.6Z" fill="none" stroke="#dcdcdc" stroke-width="0.9"/><path d="M1.4 12.9L5.75 8.9L10.1 12.9Z" fill="#dcdcdc"/><path d="M0 6.75H11.5" stroke="#dcdcdc" stroke-width="1"/></svg>
<div style="left:1226px;top:602.8px;width:201px;height:1px;background:#474747;"></div>
<svg style="left:1231.5px;top:612px;" width="7" height="5" viewBox="0 0 7 5"><path d="M0.6 0.8L3.5 3.8L6.4 0.8" fill="none" stroke="#c8c8c8" stroke-width="1"/></svg>
<div class="t" style="transform:scaleX(0.9065);left:1245px;top:608.40px;height:12px;line-height:12px;font-size:8.5px;color:#f0f0f0;font-weight:700;">Align and Distribute</div>
<div class="t" style="transform:scaleX(0.9123);left:1232.8px;top:625.00px;height:12px;line-height:12px;font-size:8.5px;color:#d2d2d2;">Align:</div>
<svg style="left:1236px;top:645.2px;" width="12" height="12" viewBox="0 0 12 12"><rect x="0.5" y="0" width="1" height="12" fill="#9b9b9b"/><rect x="3" y="2.5" width="4.5" height="2.5" fill="#9b9b9b"/><rect x="3" y="7" width="7.5" height="2.5" fill="#9b9b9b"/></svg>
<svg style="left:1258.5px;top:645.2px;" width="12" height="12" viewBox="0 0 12 12"><rect x="5" y="0" width="1" height="12" fill="#9b9b9b"/><rect x="3" y="2.5" width="5" height="2.5" fill="#9b9b9b"/><rect x="1.5" y="7" width="8" height="2.5" fill="#9b9b9b"/></svg>
<svg style="left:1279.5px;top:645.2px;" width="12" height="12" viewBox="0 0 12 12"><rect x="9.5" y="0" width="1" height="12" fill="#9b9b9b"/><rect x="4" y="2.5" width="4.5" height="2.5" fill="#9b9b9b"/><rect x="1" y="7" width="7.5" height="2.5" fill="#9b9b9b"/></svg>
<svg style="left:1314px;top:645.2px;" width="12" height="12" viewBox="0 0 12 12"><rect x="0" y="0.5" width="11" height="1" fill="#9b9b9b"/><rect x="2" y="3" width="2.5" height="7.5" fill="#9b9b9b"/><rect x="6.5" y="3" width="2.5" height="4.5" fill="#9b9b9b"/></svg>
<svg style="left:1336px;top:645.2px;" width="12" height="12" viewBox="0 0 12 12"><rect x="0" y="5.5" width="11" height="1" fill="#9b9b9b"/><rect x="2" y="1.5" width="2.5" height="9" fill="#9b9b9b"/><rect x="6.5" y="3.5" width="2.5" height="5" fill="#9b9b9b"/></svg>
<svg style="left:1357.5px;top:645.2px;" width="12" height="12" viewBox="0 0 12 12"><rect x="0" y="10.5" width="11" height="1" fill="#9b9b9b"/><rect x="2" y="1.5" width="2.5" height="7.5" fill="#9b9b9b"/><rect x="6.5" y="4.5" width="2.5" height="4.5" fill="#9b9b9b"/></svg>
<div style="left:1359.6px;top:673.4px;width:1.9px;height:1.9px;background:#e2e2e2;border-radius:50%;"></div>
<div style="left:1363.3px;top:673.4px;width:1.9px;height:1.9px;background:#e2e2e2;border-radius:50%;"></div>
<div style="left:1367.0px;top:673.4px;width:1.9px;height:1.9px;background:#e2e2e2;border-radius:50%;"></div>
<div style="left:1226px;top:684.4px;width:201px;height:1px;background:#474747;"></div>
<svg style="left:1231.5px;top:693.6px;" width="7" height="5" viewBox="0 0 7 5"><path d="M0.6 0.8L3.5 3.8L6.4 0.8" fill="none" stroke="#c8c8c8" stroke-width="1"/></svg>
<div class="t" style="transform:scaleX(0.8849);left:1244.4px;top:690.00px;height:12px;line-height:12px;font-size:8.5px;color:#f0f0f0;font-weight:700;">Quick Actions</div>
<div style="left:1232.8px;top:709px;width:140.2px;height:16.8px;background:#444444;border:1px solid #3a3a3a;border-radius:2px;box-sizing:border-box;"></div>
<div class="t" style="transform:scaleX(0.8565);left:1268px;top:711.60px;height:12px;line-height:12px;font-size:8.5px;color:#ececec;">Remove Background</div>
<div style="left:1232.8px;top:731.2px;width:140.2px;height:16.4px;background:#444444;border:1px solid #3a3a3a;border-radius:2px;box-sizing:border-box;"></div>
<div class="t" style="transform:scaleX(0.8685);left:1278.8px;top:733.60px;height:12px;line-height:12px;font-size:8.5px;color:#ececec;">Select Subject</div>
</div></body></html>
